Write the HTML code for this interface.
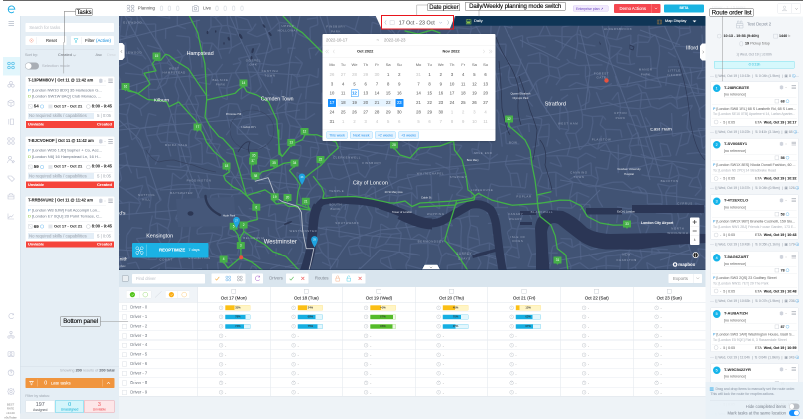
<!DOCTYPE html>
<html><head><meta charset="utf-8">
<style>
*{box-sizing:border-box;margin:0;padding:0}
html,body{width:803px;height:419px;overflow:hidden;background:#fff;font-family:"Liberation Sans",sans-serif;color:#333}
#wrap{position:absolute;left:0;top:0;width:803px;height:419px;overflow:hidden}
#root{position:absolute;left:0;top:0;width:803px;height:419px;overflow:hidden;background:#fff}
@supports (zoom:2){
#wrap{width:1606px;height:838px;transform:scale(0.5);transform-origin:0 0;will-change:transform}
#root{zoom:2}
}
.a{position:absolute}
.t{position:absolute;white-space:nowrap;line-height:1;-webkit-text-stroke:0.06px currentColor}
</style></head><body><div id="wrap"><div id="root">
<!-- top bar -->
<div class="a" style="left:3px;top:0;width:800px;height:1.1px;background:#666"></div>
<!-- sidebar -->
<div class="a" style="left:0;top:1px;width:20.5px;height:418px;background:#fff"></div>
<svg class="a" style="left:6px;top:4px" width="12" height="11" viewBox="6 4 12 11"><path d="M8.3 9.2 H14.8 A3.3 3.4 0 1 0 13.9 11.7" fill="none" stroke="#1eaee6" stroke-width="0.95"/></svg>
<div class="a" style="left:8.6px;top:21.2px;width:5.2px;height:0.6px;background:#c6ccd6"></div>
<div class="a" style="left:8.6px;top:23.2px;width:5.2px;height:0.6px;background:#c6ccd6"></div>
<div class="a" style="left:8.6px;top:25.2px;width:5.2px;height:0.6px;background:#c6ccd6"></div>
<div class="a" style="left:3px;top:57px;width:17.5px;height:18.5px;background:#e2f6fc"></div>
<svg class="a" style="left:0;top:0" width="21" height="419" viewBox="0 0 21 419">
 <g fill="none" stroke-width="0.6">
  <g stroke="#3db8e6"><circle cx="9" cy="63.5" r="1.3"/><circle cx="13" cy="63.5" r="1.3"/><circle cx="9" cy="67.5" r="1.3"/><circle cx="13" cy="67.5" r="1.3"/></g>
  <g stroke="#c4c8d8">
   <circle cx="11" cy="82.8" r="1.4"/><circle cx="9.2" cy="85.8" r="1.4"/><circle cx="12.8" cy="85.8" r="1.4"/>
   <path d="M8 101.5 L11 100 L14 101.5 L14 105 L11 106.5 L8 105 Z M8 101.5 L11 103 L14 101.5 M11 103 V106.5"/>
   <path d="M8.8 119 V124.5 M10.3 119 H13.6 V124.5 H10.3 Z"/>
   <circle cx="9" cy="139" r="1.3"/><circle cx="13" cy="139" r="1.3"/><circle cx="9" cy="143" r="1.3"/><circle cx="13" cy="143" r="1.3"/>
   <circle cx="10" cy="157.8" r="1.5"/><path d="M7.5 163 Q8 160 10 160 Q12 160 12.5 161.5 M12 162 L13.5 160.5 L14.5 161.5 L13 163 Z"/>
   <path d="M8 176 L11.5 176 L14.5 179 L12 181.5 L8 177.5 Z"/>
   <path d="M8 195 H14 V199 H8 Z M8 196.8 H14 M9 195 L10 193.5 H12 L13 195"/>
   <path d="M8 213.5 V219 H14 M8.5 218 L10.3 216 L11.5 217 L13.5 214.5"/>
   <path d="M13.5 314.5 A2.6 2.6 0 1 0 13.6 317.5 M13.5 313.5 V314.8 H12.2"/>
   <circle cx="11" cy="332.5" r="1.2"/><circle cx="9" cy="337" r="1.2"/><circle cx="13" cy="337" r="1.2"/><path d="M11 333.7 V335.5 M9.5 336 L11 335 L12.5 336"/>
   <rect x="8" y="351.5" width="6" height="5" rx="1"/><circle cx="11" cy="353.4" r="1"/><path d="M9 356.5 Q11 354.5 13 356.5"/>
   <circle cx="11" cy="372.7" r="2.9"/><path d="M10 371.8 Q10.2 370.7 11.1 370.7 Q12 370.8 12 371.6 Q12 372.3 11 372.8 V373.5 M11 374.2 V374.6"/>
   <circle cx="11" cy="391.5" r="1.2"/><path d="M11 388.4 L12.2 389.2 L13.7 389 L13.8 390.5 L14.3 391.5 L13.8 392.5 L13.7 394 L12.2 393.8 L11 394.6 L9.8 393.8 L8.3 394 L8.2 392.5 L7.7 391.5 L8.2 390.5 L8.3 389 L9.8 389.2 Z"/>
  </g>
 </g>
</svg>
<div class="t" style="left:0;width:21px;text-align:center;top:402.4px;font-size:2.8px;color:#999;line-height:4.3px">BEST<br>RATE<br>v14.00<br>e9c7bdae</div>
<!-- header -->
<svg class="a" style="left:150px;top:0" width="100" height="16" viewBox="150 0 100 16"><g fill="none" stroke="#dde1e6" stroke-width="0.75"><ellipse cx="161.5" cy="8.35" rx="1.25" ry="2.35"/><ellipse cx="169.4" cy="8.35" rx="1.25" ry="2.35"/><ellipse cx="177.7" cy="8.35" rx="1.25" ry="2.35"/><ellipse cx="217" cy="8.35" rx="1.25" ry="2.35"/><ellipse cx="225.2" cy="8.35" rx="1.25" ry="2.35"/><ellipse cx="233.6" cy="8.35" rx="1.25" ry="2.35"/><ellipse cx="242" cy="8.35" rx="1.25" ry="2.35"/></g></svg>
<svg class="a" style="left:120px;top:0" width="130" height="16" viewBox="120 0 130 16">
 <g fill="none" stroke="#a9afbb" stroke-width="0.6">
  <circle cx="128.5" cy="6.6" r="1.4"/><circle cx="132.6" cy="6.6" r="1.4"/><circle cx="128.5" cy="10.2" r="1.4"/><circle cx="132.6" cy="10.2" r="1.4"/>
  <path d="M192.5 6.5 H194 L194.8 5.3 H196.8 L197.6 6.5 H198.5 V11.2 H192.5 Z"/><circle cx="195.5" cy="8.6" r="1.3"/>
 </g>
</svg>
<div class="t" style="left:137.8px;top:6.1px;font-size:4.4px;color:#666">Planning</div>

<div class="t" style="left:203px;top:6.1px;font-size:4.4px;color:#666">Live</div>

<div class="a" style="left:573px;top:5.4px;width:35.3px;height:6.3px;background:#f1eafc;border:0.5px solid #d9c9f5;border-radius:1px"></div>
<div class="t" style="left:576px;top:6.9px;font-size:3.5px;color:#7a58c8">Enterprise plan &#8599;</div>
<div class="a" style="left:614px;top:4px;width:46.3px;height:9.2px;background:#f5474f;border-radius:1px"></div>
<div class="t" style="left:619.5px;top:6.5px;font-size:4.3px;color:#fff">Demo Actions</div>
<div class="a" style="left:651.5px;top:4px;width:0.4px;height:9.2px;background:#f88"></div>
<svg class="a" style="left:654px;top:7px" width="4" height="3" viewBox="0 0 4 3"><path d="M0.8 0.8 L2 2 L3.2 0.8" stroke="#fff" stroke-width="0.5" fill="none"/></svg>
<div class="a" style="left:664px;top:4.3px;width:40px;height:8px;background:#19b4e2;border-radius:1px"></div>
<div class="t" style="left:664px;width:40px;text-align:center;top:6.6px;font-size:3.4px;color:#fff;font-weight:bold">BETA</div>
<div class="a" style="left:20.2px;top:16px;width:98.8px;height:403px;background:#e5eef5"></div>
<div class="a" style="left:20.2px;top:16px;width:0.8px;height:403px;background:#dae5ee"></div>
<div class="a" style="left:25.5px;top:22.9px;width:88.7px;height:9.1px;background:#fff;border-radius:0.8px"></div>
<div class="t" style="left:29.2px;top:25.5px;font-size:4.3px;color:#c5c9cf">Search for tasks</div>
<div class="a" style="left:25.6px;top:35.9px;width:41.1px;height:9.1px;background:#fff;border-radius:0.8px"></div>
<svg class="a" style="left:29px;top:38px" width="5" height="5" viewBox="0 0 5 5"><circle cx="2.5" cy="2.5" r="1.75" fill="none" stroke="#f4a08e" stroke-width="0.45"/><circle cx="2.5" cy="2.5" r="0.55" fill="#f4a08e"/></svg>
<div class="a" style="left:36.7px;top:37px;width:0.35px;height:7px;background:#e6e9ed"></div>
<div class="t" style="left:46px;top:38.6px;font-size:4.2px;color:#3a3a3a">Reset</div>
<div class="a" style="left:70.8px;top:35.9px;width:43.3px;height:9.1px;background:#fff;border-radius:0.8px"></div>
<svg class="a" style="left:73.3px;top:37.9px" width="5" height="5" viewBox="0 0 5 5"><path d="M0.5 0.7 H4.5 L3 2.6 V4.4 H2 V2.6 Z" fill="none" stroke="#2ec1d9" stroke-width="0.45"/></svg>
<div class="a" style="left:81.6px;top:37px;width:0.35px;height:7px;background:#e6e9ed"></div>
<div class="t" style="left:85px;top:38.6px;font-size:4.4px;color:#3a3a3a">Filter <span style="color:#2a98e0">(Active)</span></div>
<div class="a" style="left:25.7px;top:49.2px;width:88.5px;height:0.4px;background:#d4dce4"></div>
<div class="t" style="left:25px;top:53.1px;font-size:3.8px;color:#a3aab3">Sort by:</div>
<div class="t" style="left:58px;top:53.1px;font-size:3.9px;color:#7a7f86">Created</div>
<svg class="a" style="left:72.6px;top:54.2px" width="4" height="3" viewBox="0 0 4 3"><path d="M0.6 0.7 L2 2.1 L3.4 0.7" stroke="#7a7f86" stroke-width="0.45" fill="none"/></svg>
<div class="t" style="left:95.5px;top:53.1px;font-size:3.9px;color:#8d939b">Asc</div>
<div class="t" style="left:107px;top:53.1px;font-size:3.9px;color:#d2d8de">Desc</div>
<div class="a" style="left:25px;top:62.3px;width:14px;height:7.2px;background:#a9aeb5;border-radius:4px"></div>
<div class="a" style="left:25.6px;top:62.9px;width:6px;height:6px;background:#fff;border-radius:3px"></div>
<div class="t" style="left:42px;top:63.8px;font-size:4.05px;color:#b3b8c0">Selection mode</div>
<div class="a" style="left:25.7px;top:76.3px;width:88.9px;height:51.2px;background:#fff;border-radius:0.8px;box-shadow:0 0 0.5px #cbd5de"></div>
<div class="t" style="left:28px;top:78.6px;font-size:4.1px;color:#2a2a2a;font-weight:bold">T-13PMM8OV | Oct 11 @ 11:42 am</div>
<svg class="a" style="left:98.5px;top:78.0px" width="16" height="6" viewBox="0 0 16 6"><path d="M0.6 1.2 L2.3 0.5 L4 1.2 V4.4 L2.3 5.1 L0.6 4.4 Z" fill="#ccd0da"/><path d="M6 3 H7" stroke="#a0a5ad" stroke-width="0.4"/><path d="M9.8 1.1 H14.3 M9.8 2.9 H14.3 M9.8 4.7 H14.3" stroke="#8e94a2" stroke-width="0.6"/></svg>
<div class="a" style="left:28px;top:85.39999999999999px;width:78px;height:0.35px;background:#eceff2"></div>
<div class="t" style="left:28px;top:88.3px;font-size:4.05px;color:#7f8896"><span style="color:#4aa3e6">P</span> [London NW10 8DX] 35 Harlesden G...</div>
<div class="t" style="left:28px;top:94.6px;font-size:4.05px;color:#7f8896"><span style="color:#8cc63f">D</span> [London SW1W 8AQ] Club Monaco, ...</div>
<div class="a" style="left:28px;top:101.4px;width:84.5px;height:0.35px;background:#eceff2"></div>
<svg class="a" style="left:28px;top:104.1px" width="86" height="6" viewBox="0 0 86 6"><path d="M0.5 0.5 H4.2 V4.4 H0.5 Z M0.5 0.5 L4.2 4.4" fill="none" stroke="#c3c8d0" stroke-width="0.4"/><circle cx="14.1" cy="2.5" r="1.7" fill="none" stroke="#4aa8ea" stroke-width="0.4"/><path d="M20.4 0.6 H24.5 V4.4 H20.4 Z" fill="#e2e5ea"/><circle cx="60.4" cy="2.5" r="1.9" fill="none" stroke="#b0b5bd" stroke-width="0.4"/></svg>
<div class="t" style="left:33.7px;top:104.19999999999999px;font-size:4.5px;color:#333;font-weight:bold">54</div>
<div class="t" style="left:54px;top:104.3px;font-size:4.03px;color:#333;font-weight:bold">Oct 17 - Oct 21</div>
<div class="t" style="left:91.8px;top:104.3px;font-size:4.13px;color:#333;font-weight:bold">8:00 - 9:45</div>
<div class="a" style="left:28px;top:111.5px;width:84.5px;height:0.35px;background:#eceff2"></div>
<div class="a" style="left:28px;top:112.8px;width:65.9px;height:6.1px;background:#e4eef7"></div>
<div class="t" style="left:29px;top:113.69999999999999px;font-size:4.3px;color:#a1a9b3">No required skills / capabilities</div>
<div class="t" style="left:97.1px;top:113.69999999999999px;font-size:4.19px;color:#a7adb5">5 | 0:05</div>
<div class="a" style="left:25.9px;top:121.19999999999999px;width:88.3px;height:6.3px;background:#f5443b"></div>
<div class="t" style="left:28px;top:122.6px;font-size:3.84px;color:#fff;font-weight:bold">Unviable</div>
<div class="t" style="left:97px;top:122.6px;font-size:4.03px;color:#fff;font-weight:bold">Created</div>
<div class="a" style="left:25.7px;top:136.6px;width:88.9px;height:51.2px;background:#fff;border-radius:0.8px;box-shadow:0 0 0.5px #cbd5de"></div>
<div class="t" style="left:28px;top:138.9px;font-size:4.1px;color:#2a2a2a;font-weight:bold">T-BJCVOHOP | Oct 11 @ 11:42 am</div>
<svg class="a" style="left:98.5px;top:138.29999999999998px" width="16" height="6" viewBox="0 0 16 6"><path d="M0.6 1.2 L2.3 0.5 L4 1.2 V4.4 L2.3 5.1 L0.6 4.4 Z" fill="#ccd0da"/><path d="M6 3 H7" stroke="#a0a5ad" stroke-width="0.4"/><path d="M9.8 1.1 H14.3 M9.8 2.9 H14.3 M9.8 4.7 H14.3" stroke="#8e94a2" stroke-width="0.6"/></svg>
<div class="a" style="left:28px;top:145.7px;width:78px;height:0.35px;background:#eceff2"></div>
<div class="t" style="left:28px;top:148.6px;font-size:4.05px;color:#7f8896"><span style="color:#4aa3e6">P</span> [London WD6 1JD] Sopher + Co, Acc...</div>
<div class="t" style="left:28px;top:154.9px;font-size:4.05px;color:#7f8896"><span style="color:#8cc63f">D</span> [London N6] 16 Hampstead Ln, 16 H...</div>
<div class="a" style="left:28px;top:161.7px;width:84.5px;height:0.35px;background:#eceff2"></div>
<svg class="a" style="left:28px;top:164.4px" width="86" height="6" viewBox="0 0 86 6"><path d="M0.5 0.5 H4.2 V4.4 H0.5 Z M0.5 0.5 L4.2 4.4" fill="none" stroke="#c3c8d0" stroke-width="0.4"/><circle cx="14.1" cy="2.5" r="1.7" fill="none" stroke="#4aa8ea" stroke-width="0.4"/><path d="M20.4 0.6 H24.5 V4.4 H20.4 Z" fill="#e2e5ea"/><circle cx="60.4" cy="2.5" r="1.9" fill="none" stroke="#b0b5bd" stroke-width="0.4"/></svg>
<div class="t" style="left:33.7px;top:164.5px;font-size:4.5px;color:#333;font-weight:bold">59</div>
<div class="t" style="left:54px;top:164.6px;font-size:4.03px;color:#333;font-weight:bold">Oct 17 - Oct 21</div>
<div class="t" style="left:91.8px;top:164.6px;font-size:4.13px;color:#333;font-weight:bold">8:00 - 9:45</div>
<div class="a" style="left:28px;top:171.8px;width:84.5px;height:0.35px;background:#eceff2"></div>
<div class="a" style="left:28px;top:173.1px;width:65.9px;height:6.1px;background:#e4eef7"></div>
<div class="t" style="left:29px;top:174.0px;font-size:4.3px;color:#a1a9b3">No required skills / capabilities</div>
<div class="t" style="left:97.1px;top:174.0px;font-size:4.19px;color:#a7adb5">5 | 0:05</div>
<div class="a" style="left:25.9px;top:181.5px;width:88.3px;height:6.3px;background:#f5443b"></div>
<div class="t" style="left:28px;top:182.89999999999998px;font-size:3.84px;color:#fff;font-weight:bold">Unviable</div>
<div class="t" style="left:97px;top:182.89999999999998px;font-size:4.03px;color:#fff;font-weight:bold">Created</div>
<div class="a" style="left:25.7px;top:196.4px;width:88.9px;height:51.2px;background:#fff;border-radius:0.8px;box-shadow:0 0 0.5px #cbd5de"></div>
<div class="t" style="left:28px;top:198.70000000000002px;font-size:4.1px;color:#2a2a2a;font-weight:bold">T-RRB6VUH2 | Oct 11 @ 11:42 am</div>
<svg class="a" style="left:98.5px;top:198.1px" width="16" height="6" viewBox="0 0 16 6"><path d="M0.6 1.2 L2.3 0.5 L4 1.2 V4.4 L2.3 5.1 L0.6 4.4 Z" fill="#ccd0da"/><path d="M6 3 H7" stroke="#a0a5ad" stroke-width="0.4"/><path d="M9.8 1.1 H14.3 M9.8 2.9 H14.3 M9.8 4.7 H14.3" stroke="#8e94a2" stroke-width="0.6"/></svg>
<div class="a" style="left:28px;top:205.5px;width:78px;height:0.35px;background:#eceff2"></div>
<div class="t" style="left:28px;top:208.4px;font-size:4.05px;color:#7f8896"><span style="color:#4aa3e6">P</span> [London W8 6JW] Fait Accompli Lon...</div>
<div class="t" style="left:28px;top:214.70000000000002px;font-size:4.05px;color:#7f8896"><span style="color:#8cc63f">D</span> [London E7 0QU] 20 Point Terrace, C...</div>
<div class="a" style="left:28px;top:221.5px;width:84.5px;height:0.35px;background:#eceff2"></div>
<svg class="a" style="left:28px;top:224.20000000000002px" width="86" height="6" viewBox="0 0 86 6"><path d="M0.5 0.5 H4.2 V4.4 H0.5 Z M0.5 0.5 L4.2 4.4" fill="none" stroke="#c3c8d0" stroke-width="0.4"/><circle cx="14.1" cy="2.5" r="1.7" fill="none" stroke="#4aa8ea" stroke-width="0.4"/><path d="M20.4 0.6 H24.5 V4.4 H20.4 Z" fill="#e2e5ea"/><circle cx="60.4" cy="2.5" r="1.9" fill="none" stroke="#b0b5bd" stroke-width="0.4"/></svg>
<div class="t" style="left:33.7px;top:224.3px;font-size:4.5px;color:#333;font-weight:bold">69</div>
<div class="t" style="left:54px;top:224.4px;font-size:4.03px;color:#333;font-weight:bold">Oct 17 - Oct 21</div>
<div class="t" style="left:91.8px;top:224.4px;font-size:4.13px;color:#333;font-weight:bold">8:00 - 9:45</div>
<div class="a" style="left:28px;top:231.60000000000002px;width:84.5px;height:0.35px;background:#eceff2"></div>
<div class="a" style="left:28px;top:232.9px;width:65.9px;height:6.1px;background:#e4eef7"></div>
<div class="t" style="left:29px;top:233.8px;font-size:4.3px;color:#a1a9b3">No required skills / capabilities</div>
<div class="t" style="left:97.1px;top:233.8px;font-size:4.19px;color:#a7adb5">5 | 0:05</div>
<div class="a" style="left:25.9px;top:241.3px;width:88.3px;height:6.3px;background:#f5443b"></div>
<div class="t" style="left:28px;top:242.7px;font-size:3.84px;color:#fff;font-weight:bold">Unviable</div>
<div class="t" style="left:97px;top:242.7px;font-size:4.03px;color:#fff;font-weight:bold">Created</div>
<div class="a" style="left:20.2px;top:365.8px;width:98.8px;height:0.4px;background:#d5dee6"></div>
<div class="t" style="left:54px;width:60.6px;text-align:right;top:368.6px;font-size:3.78px;color:#b3b9c1">Showing <b style="color:#6a7079">200</b> results of <b style="color:#6a7079">200 total</b></div>
<div class="a" style="left:25.3px;top:378px;width:89.3px;height:9.9px;background:#f0953e;border-radius:0.8px"></div>
<svg class="a" style="left:28.8px;top:380.5px" width="5" height="5" viewBox="0 0 5 5"><path d="M0.5 0.7 H4.5 L3 2.6 V4.4 H2 V2.6 Z" fill="none" stroke="#fff" stroke-width="0.45"/></svg>
<div class="a" style="left:37.3px;top:379.6px;width:0.35px;height:6.8px;background:#f6c28e"></div>
<div class="t" style="left:44.3px;top:380.3px;font-size:5.2px;color:#fff">0</div>
<div class="t" style="left:50.7px;top:381px;font-size:4.39px;color:#fff">Late tasks</div>
<div class="a" style="left:102.3px;top:379.6px;width:0.35px;height:6.8px;background:#f6c28e"></div>
<svg class="a" style="left:106px;top:381px" width="5" height="4" viewBox="0 0 5 4"><path d="M1 2.8 L2.5 1.3 L4 2.8" stroke="#fff" stroke-width="0.55" fill="none"/></svg>
<div class="t" style="left:25.2px;top:394.2px;font-size:3.66px;color:#a8b0ba">Filter by status:</div>
<div class="a" style="left:25.5px;top:400.4px;width:29.5px;height:12.2px;background:#fff;border:0.4px solid #dfe3e8"></div>
<div class="a" style="left:55px;top:400.4px;width:29.2px;height:12.2px;background:#d4f5fb;border:0.45px solid #5fd2ea"></div>
<div class="a" style="left:84.2px;top:400.4px;width:30.4px;height:12.2px;background:#fde6e8;border:0.45px solid #f4a0a6"></div>
<div class="t" style="left:25.5px;width:29.5px;text-align:center;top:401.6px;font-size:5.4px;color:#6b6f76">197</div>
<div class="t" style="left:25.5px;width:29.5px;text-align:center;top:408.2px;font-size:3.5px;color:#6b6f76">Assigned</div>
<div class="t" style="left:55px;width:29.2px;text-align:center;top:401.6px;font-size:5.4px;color:#27b6d8">0</div>
<div class="t" style="left:55px;width:29.2px;text-align:center;top:408.2px;font-size:3.3px;color:#27b6d8">Unassigned</div>
<div class="t" style="left:84.2px;width:30.4px;text-align:center;top:401.6px;font-size:5.4px;color:#ef5d62">3</div>
<div class="t" style="left:84.2px;width:30.4px;text-align:center;top:408.2px;font-size:3.4px;color:#ef5d62">Unviable</div>
<div class="a" style="left:20.2px;top:413.6px;width:98.8px;height:6px;background:#e8eef3"></div><div class="a" style="left:119px;top:16.0px;width:586.5px;height:253.9px;overflow:hidden;background:#415374">
<svg class="a" style="left:0;top:0" width="586.5" height="253.9" viewBox="119 16.0 586.5 253.9">
<g fill="none" stroke="#506286" stroke-width="1.3" opacity="0.85">
<path d="M110.2 12.6L122.0 14.5M109.3 24.9L120.6 26.8M105.3 45.5L121.7 49.6M105.6 52.7L108.4 68.6M109.6 95.2L118.1 97.3M111.9 114.3L116.3 112.9M111.9 114.3L106.2 122.9M107.5 138.5L116.0 134.0M107.5 138.5L106.4 146.7M106.4 146.7L118.1 149.0M106.4 146.7L110.1 155.0M109.4 162.5L105.5 173.6M105.5 173.6L110.4 185.4M110.4 185.4L107.5 196.7M107.5 196.7L117.9 199.1M108.6 204.4L122.7 203.2M108.6 204.4L111.4 217.6M111.4 217.6L116.4 213.9M111.4 217.6L107.0 226.6M109.2 239.0L119.7 234.1M110.8 244.3L115.0 245.4M110.8 244.3L112.8 252.9M112.8 252.9L108.3 268.1M108.3 268.1L122.6 267.5M106.2 275.9L119.1 276.9M105.3 287.3L120.4 282.4M122.0 14.5L132.0 18.4M122.0 14.5L120.6 26.8M120.6 26.8L119.6 35.6M119.6 35.6L125.8 37.1M119.6 35.6L121.7 49.6M121.7 49.6L125.5 42.5M115.5 67.6L127.7 62.4M115.5 67.6L120.2 79.9M120.2 79.9L121.6 84.3M115.2 105.7L129.9 103.2M116.3 112.9L127.0 114.8M116.3 112.9L115.5 128.1M115.5 128.1L127.9 123.0M115.5 128.1L116.0 134.0M118.1 149.0L128.7 145.9M118.1 149.0L115.6 155.6M115.6 155.6L125.7 152.8M115.6 155.6L119.4 169.1M119.4 169.1L127.7 164.1M119.4 169.1L121.6 178.9M121.6 178.9L117.2 185.3M117.2 185.3L125.2 189.6M117.2 185.3L117.9 199.1M117.9 199.1L122.7 203.2M122.7 203.2L129.3 202.2M115.0 245.4L118.0 256.5M118.0 256.5L129.3 258.2M118.0 256.5L122.6 267.5M119.1 276.9L120.4 282.4M120.4 282.4L131.8 288.4M132.2 8.2L141.5 7.9M132.0 18.4L128.1 25.2M128.1 25.2L137.8 22.2M128.1 25.2L125.8 37.1M125.8 37.1L135.2 34.2M125.5 42.5L126.7 53.3M126.7 53.3L142.7 55.6M126.7 53.3L127.7 62.4M127.7 62.4L142.5 69.9M125.0 73.2L142.6 74.9M125.2 99.0L136.6 93.6M129.9 103.2L140.0 109.2M129.9 103.2L127.0 114.8M127.0 114.8L127.9 123.0M127.9 123.0L140.2 128.4M127.9 123.0L131.8 139.9M131.8 139.9L135.7 137.3M125.7 152.8L127.7 164.1M127.7 164.1L131.6 173.3M125.2 189.6L142.8 185.2M125.2 189.6L129.2 193.2M129.2 193.2L138.2 199.6M129.3 202.2L140.8 203.4M129.3 202.2L129.2 219.8M131.9 227.6L142.2 228.5M131.9 227.6L127.1 234.9M127.1 234.9L126.3 248.2M126.3 248.2L142.8 247.3M126.3 248.2L129.3 258.2M127.6 263.8L136.0 262.1M131.5 279.9L142.8 277.2M131.5 279.9L131.8 288.4M141.5 7.9L148.5 9.0M141.5 7.9L136.8 16.1M136.8 16.1L137.8 22.2M137.8 22.2L147.0 24.3M137.8 22.2L135.2 34.2M137.1 47.5L142.7 55.6M142.7 55.6L146.0 59.3M142.5 69.9L147.8 65.7M142.5 69.9L142.6 74.9M142.6 74.9L149.7 79.2M136.8 83.8L136.6 93.6M140.0 109.2L149.2 102.1M140.0 109.2L141.7 115.8M140.2 128.4L145.0 128.4M140.2 128.4L135.7 137.3M135.7 137.3L142.3 148.3M142.3 148.3L150.8 146.5M136.4 168.3L137.7 178.4M137.7 178.4L145.8 176.5M142.8 185.2L138.2 199.6M138.2 199.6L151.2 196.1M138.2 199.6L140.8 203.4M140.8 203.4L136.0 213.2M136.2 238.6L149.1 237.5M136.2 238.6L142.8 247.3M142.8 247.3L148.6 246.3M137.8 256.4L148.8 259.5M136.0 262.1L142.8 277.2M142.8 277.2L139.2 289.5M139.2 289.5L149.5 289.5M148.5 9.0L161.7 3.1M147.0 24.3L155.6 23.9M147.1 45.4L161.3 49.2M147.8 65.7L160.3 63.1M147.8 65.7L149.7 79.2M149.7 79.2L162.1 79.7M149.7 79.2L148.4 89.3M148.4 89.3L156.8 89.6M148.4 89.3L149.0 96.3M149.0 96.3L149.2 102.1M148.5 113.5L156.3 115.5M148.5 113.5L145.0 128.4M145.0 128.4L146.4 135.8M146.4 135.8L156.6 134.5M146.4 135.8L150.8 146.5M150.8 146.5L147.6 156.1M147.6 156.1L159.4 155.5M147.6 156.1L149.4 168.3M145.8 176.5L147.0 184.2M147.0 184.2L155.5 189.9M147.0 184.2L151.2 196.1M151.2 196.1L149.5 208.1M152.3 215.5L149.9 226.0M149.9 226.0L157.2 223.0M149.9 226.0L149.1 237.5M148.6 246.3L161.6 244.1M148.6 246.3L148.8 259.5M148.8 259.5L156.2 259.4M156.0 15.5L170.1 18.4M155.6 23.9L155.6 37.4M155.6 37.4L161.3 49.2M161.3 49.2L156.2 57.7M156.2 57.7L160.3 63.1M160.3 63.1L167.1 63.0M160.3 63.1L162.1 79.7M162.1 79.7L169.2 73.9M162.1 79.7L156.8 89.6M156.8 89.6L165.9 83.3M159.1 124.7L169.0 123.4M159.1 124.7L156.6 134.5M156.6 134.5L167.8 132.1M156.6 134.5L160.8 142.2M160.8 142.2L167.0 142.1M159.4 155.5L155.1 164.7M155.5 189.9L171.6 185.5M155.5 189.9L161.3 199.8M161.3 199.8L155.8 204.1M155.8 204.1L155.3 218.2M155.3 218.2L170.5 219.9M157.2 223.0L167.7 228.7M157.2 223.0L158.4 239.3M158.4 239.3L161.6 244.1M161.6 244.1L156.2 259.4M159.6 267.6L155.7 272.5M155.7 272.5L167.0 273.3M155.7 272.5L160.5 285.4M165.6 9.5L182.0 7.4M165.6 9.5L170.1 18.4M165.7 28.8L177.3 25.7M165.7 28.8L165.5 38.9M169.4 59.4L182.8 56.4M169.4 59.4L167.1 63.0M167.1 63.0L177.0 69.7M169.2 73.9L177.5 74.9M169.2 73.9L165.9 83.3M171.1 114.3L175.0 114.1M171.1 114.3L169.0 123.4M169.0 123.4L175.7 125.2M169.0 123.4L167.8 132.1M167.8 132.1L175.3 132.2M167.8 132.1L167.0 142.1M167.0 142.1L177.4 143.9M167.0 142.1L170.9 156.4M166.5 165.8L181.0 167.3M172.5 172.9L180.7 179.0M172.5 172.9L171.6 185.5M171.6 185.5L178.1 184.6M171.6 185.5L169.0 198.7M169.0 198.7L168.1 206.1M168.1 206.1L170.5 219.9M170.5 219.9L167.7 228.7M167.7 228.7L170.7 237.1M170.7 237.1L168.2 244.8M165.4 253.0L165.6 267.9M165.6 267.9L181.4 268.6M165.6 267.9L167.0 273.3M167.0 273.3L165.7 288.7M177.3 13.9L186.1 14.9M177.3 13.9L177.3 25.7M177.3 25.7L185.8 28.7M176.3 35.6L189.5 37.0M177.1 49.7L182.8 56.4M182.8 56.4L188.9 52.0M182.8 56.4L177.0 69.7M177.0 69.7L177.5 74.9M177.5 74.9L175.0 85.1M175.0 85.1L178.8 96.0M178.8 96.0L176.6 106.0M176.6 106.0L185.6 104.1M176.6 106.0L175.0 114.1M175.0 114.1L190.8 113.6M175.0 114.1L175.7 125.2M175.7 125.2L175.3 132.2M175.3 132.2L189.0 135.1M177.4 143.9L188.8 147.5M177.4 143.9L179.7 156.2M179.7 156.2L191.1 156.9M179.7 156.2L181.0 167.3M181.0 167.3L190.1 162.6M180.7 179.0L186.2 174.0M178.1 184.6L190.9 184.4M182.9 193.2L180.8 207.1M180.8 207.1L185.5 204.2M180.8 207.1L175.4 218.7M175.4 218.7L190.4 217.5M175.4 218.7L182.1 227.0M182.1 227.0L180.9 238.5M180.9 238.5L189.1 235.7M180.9 238.5L176.1 246.2M176.1 246.2L188.7 242.9M176.1 246.2L179.0 258.7M179.0 258.7L192.1 253.6M179.0 258.7L181.4 268.6M181.4 268.6L192.8 269.5M181.4 268.6L179.7 279.1M179.7 279.1L185.1 275.7M186.8 2.2L198.6 4.1M186.8 2.2L186.1 14.9M189.5 37.0L190.0 47.4M190.0 47.4L188.9 52.0M188.9 52.0L201.6 56.1M188.9 52.0L191.4 68.0M191.4 68.0L189.0 76.3M189.0 76.3L196.9 79.2M189.0 76.3L190.3 82.5M190.3 82.5L190.9 94.0M190.9 94.0L185.6 104.1M185.6 104.1L198.6 104.4M185.6 104.1L190.8 113.6M190.8 113.6L196.1 114.8M190.9 129.8L197.5 128.7M190.9 129.8L189.0 135.1M189.0 135.1L188.8 147.5M188.8 147.5L201.7 143.0M188.8 147.5L191.1 156.9M191.1 156.9L190.1 162.6M190.1 162.6L202.2 164.3M190.1 162.6L186.2 174.0M186.2 174.0L190.9 184.4M190.9 184.4L203.0 186.7M190.9 184.4L189.5 192.1M185.5 204.2L197.2 202.4M190.4 224.3L189.1 235.7M189.1 235.7L188.7 242.9M188.7 242.9L199.1 243.5M192.1 253.6L192.8 269.5M192.8 269.5L202.1 268.5M192.8 269.5L185.1 275.7M185.1 275.7L200.0 279.3M185.1 275.7L191.6 289.7M191.6 289.7L202.5 286.4M196.7 19.6L196.7 26.7M196.7 26.7L196.1 36.2M196.1 36.2L202.6 43.1M202.6 43.1L212.4 43.0M202.6 43.1L201.6 56.1M201.6 56.1L202.1 67.6M196.9 79.2L212.8 74.1M198.9 82.2L210.2 84.4M195.0 95.9L209.5 95.2M195.0 95.9L198.6 104.4M198.6 104.4L196.1 114.8M196.1 114.8L206.7 119.2M196.1 114.8L197.5 128.7M197.5 128.7L195.0 138.0M195.0 138.0L212.3 140.0M195.0 138.0L201.7 143.0M201.7 143.0L202.4 157.7M202.4 157.7L202.2 164.3M202.2 164.3L207.7 162.7M198.0 175.1L203.0 186.7M203.0 186.7L209.6 189.1M203.0 186.7L197.9 195.4M197.9 195.4L197.2 202.4M197.2 202.4L208.3 206.2M197.2 202.4L195.8 218.7M197.3 229.5L205.5 224.2M197.3 229.5L197.0 234.1M197.0 234.1L212.7 233.0M199.1 243.5L209.0 247.0M199.1 243.5L198.0 259.6M200.0 279.3L208.2 275.6M202.5 286.4L212.6 288.8M210.8 2.4L222.0 2.2M210.9 15.6L215.3 17.7M210.9 15.6L211.0 27.2M211.0 27.2L222.2 25.8M211.0 27.2L207.3 32.4M212.4 43.0L218.1 49.4M212.4 43.0L208.8 54.7M207.4 67.9L212.8 74.1M212.8 74.1L215.9 73.2M212.8 74.1L210.2 84.4M206.3 103.3L206.7 119.2M206.7 119.2L218.7 116.4M209.0 123.8L212.3 140.0M212.3 140.0L208.6 143.1M208.6 143.1L220.2 144.4M208.6 143.1L206.5 152.7M206.5 152.7L216.0 154.0M207.7 162.7L220.1 167.6M206.9 174.1L209.6 189.1M211.0 195.3L218.1 193.8M211.0 195.3L208.3 206.2M208.0 214.7L205.5 224.2M212.7 233.0L222.1 235.8M212.7 233.0L209.0 247.0M209.0 247.0L211.9 253.7M211.9 253.7L222.7 257.6M207.2 264.0L208.2 275.6M208.2 275.6L212.6 288.8M222.0 2.2L215.3 17.7M215.3 17.7L226.8 12.3M215.3 17.7L222.2 25.8M222.2 25.8L227.7 25.4M222.2 25.8L219.7 32.0M219.7 32.0L230.5 33.6M219.7 32.0L218.1 49.4M218.1 49.4L231.4 47.9M218.1 49.4L221.6 58.8M222.8 64.0L215.9 73.2M215.9 73.2L219.2 87.5M219.2 87.5L226.8 88.1M219.2 87.5L222.5 97.8M222.5 97.8L227.4 99.6M220.2 108.1L229.0 103.5M220.2 108.1L218.7 116.4M220.2 144.4L216.0 154.0M216.0 154.0L220.1 167.6M220.1 167.6L225.5 165.1M218.1 193.8L232.5 194.6M218.1 193.8L219.8 202.1M219.8 202.1L226.5 209.5M217.4 215.7L231.0 212.3M217.4 215.7L222.7 227.2M222.7 227.2L230.3 225.0M222.7 227.2L222.1 235.8M222.1 235.8L216.9 244.0M216.9 244.0L226.4 242.0M216.9 244.0L222.7 257.6M217.5 262.2L232.6 263.0M217.5 262.2L219.0 277.4M218.4 284.1L227.9 288.6M230.3 9.4L241.6 5.5M230.3 9.4L226.8 12.3M226.8 12.3L235.4 15.8M226.8 12.3L227.7 25.4M227.7 25.4L238.0 29.4M227.7 25.4L230.5 33.6M230.5 33.6L236.5 34.9M230.5 33.6L231.4 47.9M231.4 47.9L242.2 42.2M231.4 47.9L229.0 53.6M232.8 64.5L241.1 62.3M231.6 73.8L226.8 88.1M226.8 88.1L242.4 84.1M226.8 88.1L227.4 99.6M229.0 103.5L237.7 104.2M229.0 103.5L226.8 115.3M226.8 115.3L230.3 129.6M230.3 129.6L226.2 135.1M226.7 149.8L235.0 148.0M226.1 152.4L242.3 157.1M232.2 179.1L236.9 175.8M232.2 179.1L230.9 190.0M232.5 194.6L238.1 194.0M232.5 194.6L226.5 209.5M226.5 209.5L231.0 212.3M231.0 212.3L230.3 225.0M230.3 225.0L241.4 227.9M230.3 225.0L228.0 234.7M228.0 234.7L241.6 238.2M226.4 242.0L239.9 244.6M227.2 254.8L237.6 254.9M227.2 254.8L232.6 263.0M227.9 288.6L237.0 282.5M241.6 5.5L245.3 6.4M235.4 15.8L247.6 19.8M235.4 15.8L238.0 29.4M238.0 29.4L252.1 29.9M238.3 58.5L250.7 55.6M238.3 58.5L241.1 62.3M241.1 62.3L235.3 72.5M235.3 72.5L242.4 84.1M242.4 84.1L251.0 88.8M242.4 84.1L241.0 99.2M241.0 99.2L250.3 93.0M237.7 104.2L242.7 116.9M242.7 116.9L249.5 115.0M242.7 116.9L237.1 127.7M237.1 127.7L250.9 123.6M237.1 127.7L237.5 134.2M237.5 134.2L247.0 134.0M235.0 148.0L246.2 149.1M242.3 157.1L249.6 154.6M242.3 157.1L242.5 162.2M242.5 162.2L248.2 169.9M242.5 162.2L236.9 175.8M236.9 175.8L249.1 173.9M242.7 189.6L251.5 187.2M242.7 189.6L238.1 194.0M238.1 194.0L252.9 192.8M238.4 205.9L242.4 213.5M242.4 213.5L251.7 219.3M241.6 238.2L246.0 233.5M241.6 238.2L239.9 244.6M239.9 244.6L237.6 254.9M237.6 254.9L252.4 255.0M241.3 262.6L236.6 278.0M236.6 278.0L247.1 278.2M237.0 282.5L252.6 282.8M245.3 6.4L259.8 7.0M247.6 19.8L252.1 29.9M252.1 29.9L256.1 23.6M252.1 29.9L247.1 32.7M247.1 32.7L257.0 36.8M245.8 46.0L260.2 43.6M245.8 46.0L250.7 55.6M250.7 55.6L246.9 65.3M246.9 65.3L260.4 63.5M246.9 65.3L250.0 77.4M250.0 77.4L257.5 73.6M250.0 77.4L251.0 88.8M251.0 88.8L250.3 93.0M250.3 93.0L255.5 92.8M251.7 104.4L258.2 106.4M251.7 104.4L249.5 115.0M249.5 115.0L260.1 112.7M249.5 115.0L250.9 123.6M250.9 123.6L247.0 134.0M247.0 134.0L258.3 134.3M249.6 154.6L257.5 156.5M248.2 169.9L249.1 173.9M249.1 173.9L261.9 180.0M251.5 187.2L252.9 192.8M252.9 192.8L260.8 193.6M248.8 208.6L255.0 209.2M251.7 219.3L258.4 218.6M251.7 219.3L245.3 224.3M245.3 224.3L258.2 229.1M245.3 224.3L246.0 233.5M246.0 233.5L252.8 246.7M252.8 246.7L252.4 255.0M252.4 255.0L260.1 259.3M251.9 265.6L255.7 267.0M251.9 265.6L247.1 278.2M247.1 278.2L258.0 276.0M259.8 7.0L256.7 14.9M257.0 36.8L266.6 33.0M260.2 43.6L255.1 54.6M255.1 54.6L268.9 52.4M255.1 54.6L260.4 63.5M260.4 63.5L272.4 65.1M260.4 63.5L257.5 73.6M257.5 73.6L272.2 77.0M257.5 73.6L261.4 86.4M261.4 86.4L255.5 92.8M258.2 106.4L260.1 112.7M257.5 149.6L266.0 144.0M257.5 156.5L270.8 159.2M257.9 165.3L265.3 166.5M257.9 165.3L261.9 180.0M261.9 180.0L271.1 172.3M257.9 183.6L271.7 182.9M255.0 209.2L270.0 204.4M258.2 229.1L258.7 233.3M258.7 233.3L255.1 246.4M255.1 246.4L265.2 247.0M255.1 246.4L260.1 259.3M255.7 267.0L258.0 276.0M258.0 276.0L268.7 273.4M258.0 276.0L256.2 284.3M256.2 284.3L268.8 282.9M269.2 9.4L276.0 5.4M269.2 9.4L265.9 15.9M265.9 15.9L271.4 29.7M271.4 29.7L279.1 22.3M271.4 29.7L266.6 33.0M266.6 33.0L272.5 49.8M272.5 49.8L280.9 48.2M272.5 49.8L268.9 52.4M272.4 65.1L279.0 65.0M272.2 77.0L271.6 83.3M271.3 93.8L280.9 98.5M268.2 108.8L271.6 113.5M266.7 125.2L282.3 123.3M266.7 125.2L269.1 135.1M269.1 135.1L281.3 139.4M266.0 144.0L270.8 159.2M270.8 159.2L281.0 153.3M270.8 159.2L265.3 166.5M271.1 172.3L281.5 173.1M271.7 182.9L279.0 189.4M269.8 196.4L276.7 194.1M270.0 204.4L279.0 204.6M270.0 204.4L268.4 216.7M268.4 216.7L275.3 213.5M268.4 227.3L268.6 235.5M268.6 235.5L280.4 239.2M265.2 247.0L268.9 253.9M271.1 268.2L280.1 264.9M271.1 268.2L268.7 273.4M268.8 282.9L279.6 289.1M276.0 5.4L285.8 9.9M276.0 5.4L275.7 15.5M275.7 15.5L279.1 22.3M279.1 22.3L291.4 24.1M279.1 22.3L280.1 32.7M280.1 32.7L280.9 48.2M279.0 65.0L290.9 62.4M281.9 90.0L280.9 98.5M280.9 98.5L276.5 109.9M276.5 109.9L287.5 102.0M276.5 109.9L278.9 119.7M282.3 123.3L281.3 139.4M275.5 144.8L286.1 143.8M281.0 153.3L282.2 164.2M282.2 164.2L281.5 173.1M281.5 173.1L285.9 174.9M281.5 173.1L279.0 189.4M279.0 189.4L286.8 186.7M279.0 189.4L276.7 194.1M276.7 194.1L289.7 193.6M276.7 194.1L279.0 204.6M279.0 204.6L290.0 205.8M275.3 213.5L276.3 229.5M276.3 229.5L286.9 223.2M276.3 229.5L280.4 239.2M280.4 239.2L285.8 237.1M276.3 248.3L275.9 256.2M282.0 276.4L279.6 289.1M285.8 9.9L290.0 15.2M290.0 15.2L291.4 24.1M291.4 24.1L295.4 26.3M291.4 24.1L292.9 36.6M287.9 48.1L295.5 48.2M287.9 48.1L288.5 53.4M290.9 62.4L302.5 63.1M291.6 74.0L296.6 76.9M291.6 74.0L290.1 89.9M290.1 89.9L299.1 87.1M290.1 89.9L289.7 97.3M289.7 97.3L287.5 102.0M287.5 102.0L297.5 104.4M287.5 102.0L285.3 113.2M285.3 113.2L295.4 119.1M285.3 113.2L289.9 125.5M289.9 125.5L301.3 127.7M289.9 125.5L289.1 139.2M289.1 139.2L295.1 138.8M289.1 139.2L286.1 143.8M286.1 143.8L301.0 145.7M290.2 152.2L300.9 155.6M285.0 164.8L296.8 162.8M285.0 164.8L285.9 174.9M285.9 174.9L286.8 186.7M286.8 186.7L297.7 188.0M286.8 186.7L289.7 193.6M290.0 205.8L300.7 204.1M290.0 205.8L286.1 219.5M286.1 219.5L299.4 215.5M286.1 219.5L286.9 223.2M286.9 223.2L285.8 237.1M285.8 237.1L297.1 237.1M292.0 248.3L288.2 254.1M285.1 267.2L297.1 263.9M289.5 274.8L290.2 285.6M290.2 285.6L301.0 284.6M302.5 7.9L312.0 4.6M295.4 26.3L298.2 33.9M298.2 33.9L310.3 39.8M295.1 56.4L302.5 63.1M302.5 63.1L296.6 76.9M296.6 76.9L309.6 74.5M296.6 76.9L299.1 87.1M299.1 87.1L306.7 87.0M301.5 93.4L297.5 104.4M297.5 104.4L306.2 102.2M297.5 104.4L295.4 119.1M295.4 119.1L305.9 119.4M295.4 119.1L301.3 127.7M301.3 127.7L295.1 138.8M295.1 138.8L305.2 132.3M301.0 145.7L300.9 155.6M300.9 155.6L310.6 157.9M300.9 155.6L296.8 162.8M296.9 172.3L307.9 178.5M296.9 172.3L297.7 188.0M297.7 188.0L311.6 189.1M297.7 188.0L300.6 198.8M300.6 198.8L300.7 204.1M300.7 204.1L312.3 209.6M300.7 204.1L299.4 215.5M299.4 215.5L301.3 226.2M301.3 226.2L297.1 237.1M297.1 237.1L311.8 238.5M297.1 237.1L302.7 243.7M302.7 243.7L302.0 252.1M302.0 252.1L310.1 254.3M302.0 252.1L297.1 263.9M297.1 263.9L305.8 262.8M306.9 19.3L317.3 17.7M310.0 27.5L317.9 24.6M310.0 27.5L310.3 39.8M308.8 48.7L321.8 46.9M308.8 48.7L310.6 58.9M309.6 74.5L317.8 77.6M309.6 74.5L306.7 87.0M306.7 87.0L319.3 83.7M306.7 87.0L305.6 99.3M306.2 102.2L321.6 103.4M306.2 102.2L305.9 119.4M305.9 119.4L315.0 113.6M305.2 132.3L315.0 135.9M310.5 147.1L318.9 148.4M310.5 147.1L310.6 157.9M310.6 157.9L316.5 156.0M310.6 157.9L305.5 166.7M307.9 178.5L311.6 189.1M311.6 189.1L317.3 183.7M311.6 189.1L305.5 198.9M305.5 198.9L320.6 196.0M312.3 209.6L315.9 207.1M312.3 209.6L305.9 213.6M305.9 213.6L305.9 222.3M305.9 222.3L320.6 228.3M311.8 238.5L310.1 248.6M310.1 254.3L322.1 252.7M310.1 254.3L305.8 262.8M307.6 285.4L322.2 286.0M315.2 4.1L328.0 9.1M315.2 4.1L317.3 17.7M317.3 17.7L317.9 24.6M322.7 36.0L331.0 37.2M322.7 36.0L321.8 46.9M321.8 46.9L315.2 55.3M318.5 68.2L317.8 77.6M321.9 92.7L326.0 95.7M321.9 92.7L321.6 103.4M321.6 103.4L332.1 103.9M315.0 135.9L318.9 148.4M318.9 148.4L316.5 156.0M316.5 156.0L317.8 168.7M317.8 168.7L317.1 179.6M317.1 179.6L332.8 177.8M317.3 183.7L325.8 189.7M320.6 196.0L315.9 207.1M320.6 228.3L326.6 227.1M320.0 234.8L325.9 233.7M318.2 245.2L328.1 242.3M318.2 245.2L322.1 252.7M322.1 252.7L328.2 258.3M322.1 262.2L330.5 266.0M316.6 274.1L330.1 275.7M328.0 9.1L338.2 7.9M328.0 9.1L326.9 15.7M326.9 15.7L329.3 28.0M329.3 28.0L331.0 37.2M331.0 37.2L338.4 33.8M326.2 58.7L341.2 57.6M326.4 75.5L340.1 75.6M331.2 86.6L337.5 87.0M326.0 95.7L335.8 95.4M326.0 95.7L332.1 103.9M332.1 103.9L326.5 114.4M326.5 114.4L330.6 128.7M330.6 128.7L326.2 133.2M326.2 133.2L327.0 144.6M327.0 144.6L329.2 153.3M329.2 153.3L336.5 157.2M327.6 163.5L341.2 165.1M327.6 163.5L332.8 177.8M332.8 177.8L338.9 179.8M325.8 189.7L325.8 195.1M325.8 195.1L336.3 198.3M325.8 195.1L332.9 208.4M330.9 215.5L335.8 216.6M326.6 227.1L339.3 227.7M326.6 227.1L325.9 233.7M325.9 233.7L328.1 242.3M328.1 242.3L341.6 246.2M328.1 242.3L328.2 258.3M328.2 258.3L338.3 259.6M328.2 258.3L330.5 266.0M330.5 266.0L330.1 275.7M330.1 275.7L326.1 286.8M338.2 7.9L347.8 2.5M338.4 33.8L348.4 37.6M340.8 49.0L347.8 44.1M340.8 49.0L341.2 57.6M340.1 75.6L346.8 78.4M340.1 75.6L337.5 87.0M335.8 95.4L341.3 107.7M340.0 114.0L348.8 116.5M340.0 114.0L338.4 125.6M338.4 125.6L346.8 129.7M338.4 125.6L340.0 135.3M340.0 135.3L347.8 137.1M340.0 135.3L340.4 149.4M340.4 149.4L351.5 148.5M341.2 165.1L349.4 163.0M338.9 179.8L351.7 174.8M335.3 186.3L336.3 198.3M342.5 206.2L348.4 203.5M342.5 206.2L335.8 216.6M335.8 216.6L345.0 217.8M335.8 216.6L339.3 227.7M339.3 227.7L347.2 224.0M339.3 227.7L339.1 237.1M339.1 237.1L347.4 235.8M338.3 259.6L336.7 267.5M338.1 278.1L345.5 278.6M347.8 2.5L356.1 8.7M347.2 15.2L360.1 12.1M345.1 25.3L355.1 29.6M348.4 37.6L360.2 34.0M348.4 37.6L347.8 44.1M347.8 44.1L346.8 57.9M346.8 57.9L356.9 58.2M346.8 57.9L352.5 66.2M346.0 98.2L351.5 107.1M351.5 107.1L360.3 109.2M351.5 107.1L348.8 116.5M348.8 116.5L346.8 129.7M346.8 129.7L347.8 137.1M347.8 137.1L359.2 137.9M348.7 154.4L359.4 154.1M348.7 154.4L349.4 163.0M349.4 163.0L356.9 163.1M351.7 174.8L358.9 172.5M351.8 184.1L358.7 183.2M348.0 194.0L358.9 196.0M348.0 194.0L348.4 203.5M348.4 203.5L345.0 217.8M345.0 217.8L347.2 224.0M347.4 235.8L360.3 238.7M348.4 247.1L358.0 245.4M348.4 247.1L350.3 254.9M350.3 254.9L362.7 252.6M356.1 8.7L367.6 9.9M360.1 12.1L355.1 29.6M355.1 29.6L360.2 34.0M360.2 34.0L370.7 37.0M360.2 34.0L355.8 43.1M355.8 43.1L367.7 48.9M356.9 58.2L357.8 63.2M357.8 63.2L369.2 68.2M362.2 78.3L356.3 89.1M356.3 89.1L368.4 86.4M356.3 89.1L359.9 98.3M359.9 98.3L371.6 94.3M359.9 98.3L360.3 109.2M360.3 109.2L371.6 105.2M361.3 118.7L369.0 114.2M356.6 127.5L369.1 129.8M356.6 127.5L359.2 137.9M359.2 137.9L370.2 138.3M359.2 137.9L358.5 149.1M358.5 149.1L367.6 144.5M359.4 154.1L367.4 156.7M356.9 163.1L358.9 172.5M358.9 172.5L365.3 177.8M358.7 183.2L358.9 196.0M358.9 196.0L365.4 194.4M358.9 196.0L359.3 208.9M359.3 208.9L365.0 203.5M359.3 208.9L355.1 218.7M355.1 218.7L358.7 226.5M358.7 226.5L370.3 228.3M358.7 226.5L360.3 238.7M360.3 238.7L358.0 245.4M358.0 245.4L369.9 247.0M358.0 245.4L362.7 252.6M362.7 252.6L370.6 256.8M360.1 267.1L355.2 276.9M355.2 276.9L370.3 275.7M355.2 276.9L360.5 289.5M360.5 289.5L371.1 282.8M369.1 15.9L381.2 19.3M372.2 22.3L380.2 25.0M372.2 22.3L370.7 37.0M370.7 37.0L381.6 38.3M370.7 37.0L367.7 48.9M367.9 55.8L377.4 55.4M367.9 55.8L369.2 68.2M369.2 68.2L366.7 75.5M366.7 75.5L368.4 86.4M368.4 86.4L371.6 94.3M371.6 94.3L375.3 93.0M371.6 94.3L371.6 105.2M371.6 105.2L381.5 106.6M371.6 105.2L369.0 114.2M369.1 129.8L375.1 125.1M369.1 129.8L370.2 138.3M370.2 138.3L367.6 144.5M367.6 144.5L382.8 145.8M367.4 156.7L378.3 152.8M367.4 156.7L370.1 168.3M370.1 168.3L380.2 163.7M370.1 168.3L365.3 177.8M372.1 186.4L375.0 187.5M372.1 186.4L365.4 194.4M365.4 194.4L376.0 199.7M365.4 194.4L365.0 203.5M365.0 203.5L372.4 216.9M372.4 216.9L370.3 228.3M372.3 236.9L380.9 233.5M372.3 236.9L369.9 247.0M369.9 247.0L375.4 248.2M369.9 247.0L370.6 256.8M370.3 275.7L380.0 277.7M376.5 2.3L387.0 9.7M376.5 2.3L381.2 19.3M381.2 19.3L390.7 12.1M380.2 25.0L381.6 38.3M381.6 38.3L379.5 44.1M379.5 44.1L377.4 55.4M377.4 55.4L377.5 65.4M377.5 65.4L388.9 62.5M377.5 65.4L380.1 79.5M375.4 86.5L375.3 93.0M381.5 106.6L387.9 107.2M381.5 106.6L382.3 115.6M382.3 115.6L375.1 125.1M375.1 125.1L388.1 128.3M375.1 125.1L379.7 139.5M382.8 145.8L389.5 144.3M375.0 187.5L376.0 199.7M376.0 199.7L389.8 194.5M376.0 199.7L375.7 209.0M375.7 209.0L388.4 209.1M375.7 209.0L376.0 212.1M376.0 212.1L388.0 217.5M380.8 223.9L389.8 229.2M380.8 223.9L380.9 233.5M380.9 233.5L391.5 234.3M380.9 233.5L375.4 248.2M375.4 248.2L385.0 244.1M380.7 258.8L388.4 256.7M380.7 258.8L380.8 262.7M380.8 262.7L391.5 269.1M378.7 289.5L391.5 288.9M387.0 9.7L399.6 4.2M390.7 12.1L401.8 18.5M390.7 12.1L385.1 27.2M385.1 27.2L400.5 29.3M385.1 27.2L391.5 32.6M387.5 47.8L399.4 48.4M386.3 58.9L396.6 58.0M386.3 58.9L388.9 62.5M388.9 62.5L402.5 63.9M388.9 62.5L387.9 76.6M387.9 76.6L399.9 77.4M388.5 87.4L386.2 98.4M386.2 98.4L397.0 98.0M388.1 128.3L401.2 123.9M388.1 128.3L392.6 138.3M392.6 138.3L399.6 139.2M392.6 138.3L389.5 144.3M389.5 144.3L385.5 159.8M390.6 168.6L387.7 176.8M387.7 176.8L396.4 177.6M387.7 176.8L392.8 188.7M389.8 194.5L398.2 196.1M389.8 194.5L388.4 209.1M388.4 209.1L396.2 202.4M388.4 209.1L388.0 217.5M391.5 234.3L401.3 233.2M391.5 234.3L385.0 244.1M385.0 244.1L399.8 244.8M388.4 256.7L399.2 252.2M388.4 256.7L391.5 269.1M391.5 269.1L395.3 269.9M385.3 278.7L391.5 288.9M399.6 4.2L401.8 18.5M401.8 18.5L412.6 18.1M400.5 29.3L411.6 29.7M400.5 29.3L397.8 32.7M397.8 32.7L399.4 48.4M399.4 48.4L406.6 43.4M396.6 58.0L405.7 52.4M396.6 58.0L402.5 63.9M402.5 63.9L409.5 69.0M402.5 63.9L399.9 77.4M399.9 77.4L408.7 79.6M399.9 77.4L398.7 83.7M398.7 83.7L397.0 98.0M401.3 105.7L406.0 109.7M401.3 105.7L395.7 118.5M401.2 123.9L410.1 129.7M401.2 123.9L399.6 139.2M402.1 146.2L408.6 143.3M398.8 156.7L396.5 163.5M396.5 163.5L406.8 162.3M396.5 163.5L396.4 177.6M397.9 186.5L412.2 189.2M397.9 186.5L398.2 196.1M398.2 196.1L411.7 192.4M398.2 196.1L396.2 202.4M396.2 202.4L411.3 207.7M396.2 202.4L403.0 215.0M403.0 215.0L395.8 227.1M395.8 227.1L401.3 233.2M401.3 233.2L399.8 244.8M399.8 244.8L399.2 252.2M399.2 252.2L409.7 258.1M395.3 269.9L401.9 275.9M401.9 275.9L399.5 284.1M411.2 5.4L416.9 3.1M411.2 5.4L412.6 18.1M412.6 18.1L420.4 12.1M407.0 32.3L415.3 39.4M407.0 32.3L406.6 43.4M406.6 43.4L405.7 52.4M405.7 52.4L421.9 59.1M409.5 69.0L416.1 65.6M408.7 79.6L415.8 79.4M408.7 79.6L412.3 82.5M412.3 82.5L421.7 87.0M412.3 82.5L409.8 95.2M409.8 95.2L418.6 94.7M409.8 95.2L406.0 109.7M406.0 109.7L421.6 105.8M406.0 109.7L407.1 116.5M407.1 116.5L420.0 113.1M407.1 116.5L410.1 129.7M410.1 129.7L410.4 135.1M410.4 135.1L408.6 143.3M408.6 143.3L416.2 149.0M408.6 143.3L412.7 159.9M412.7 159.9L417.1 155.3M406.8 162.3L416.2 164.2M407.0 174.8L421.7 174.7M407.0 174.8L412.2 189.2M411.7 192.4L417.5 199.2M411.7 192.4L411.3 207.7M411.3 207.7L410.2 219.9M410.2 219.9L415.5 219.2M405.4 223.2L420.3 223.7M405.4 223.2L411.0 239.5M411.0 239.5L418.8 234.3M410.4 244.4L417.1 243.6M410.4 244.4L409.7 258.1M409.7 258.1L405.8 264.6M405.8 264.6L423.0 269.4M405.8 264.6L407.1 273.0M408.9 283.3L422.2 282.5M416.9 3.1L430.8 4.3M416.9 3.1L420.4 12.1M420.4 12.1L420.7 23.6M420.7 23.6L415.3 39.4M415.3 39.4L416.8 49.5M416.8 49.5L431.7 46.2M416.1 65.6L432.3 63.7M416.1 65.6L415.8 79.4M415.8 79.4L429.6 73.1M415.8 79.4L421.7 87.0M418.6 94.7L430.7 93.6M421.6 105.8L425.6 102.7M420.0 113.1L429.9 116.0M420.0 113.1L416.8 122.5M416.8 122.5L427.2 123.6M420.7 136.4L429.9 137.7M420.7 136.4L416.2 149.0M416.2 149.0L417.1 155.3M417.1 155.3L426.6 152.5M416.2 164.2L430.9 165.3M416.3 185.9L431.5 184.7M416.3 185.9L417.5 199.2M415.9 209.8L415.5 219.2M415.5 219.2L432.3 215.8M418.8 234.3L426.5 238.7M417.1 243.6L427.9 243.3M423.0 269.4L425.0 266.2M415.8 274.3L428.6 276.1M422.2 282.5L426.0 287.7M430.8 4.3L441.5 8.9M432.8 12.1L437.6 17.7M431.5 24.7L426.1 32.0M426.1 32.0L431.7 46.2M431.7 46.2L426.5 55.5M426.5 55.5L439.1 56.2M426.5 55.5L432.3 63.7M432.3 63.7L439.3 62.2M432.3 63.7L429.6 73.1M429.6 73.1L426.4 88.2M426.4 88.2L436.5 82.8M426.4 88.2L430.7 93.6M430.7 93.6L437.0 98.5M429.9 116.0L427.2 123.6M427.2 123.6L429.9 137.7M431.5 146.7L426.6 152.5M426.6 152.5L442.0 157.7M430.8 172.4L431.5 184.7M431.5 184.7L431.7 198.9M431.7 198.9L428.9 202.1M428.9 202.1L439.7 208.9M432.3 215.8L436.2 216.6M432.0 224.1L426.5 238.7M426.5 238.7L427.9 243.3M427.9 243.3L438.1 245.4M427.9 243.3L428.0 256.8M428.0 256.8L425.0 266.2M425.0 266.2L438.2 269.5M425.0 266.2L428.6 276.1M428.6 276.1L441.2 274.7M441.5 8.9L437.6 17.7M437.6 17.7L451.4 19.3M437.6 17.7L438.1 28.0M435.5 39.0L445.4 36.1M435.5 39.0L442.6 46.0M442.6 46.0L452.7 49.5M439.1 56.2L447.0 55.4M439.1 56.2L439.3 62.2M439.3 62.2L442.7 73.8M442.7 73.8L436.5 82.8M436.5 82.8L437.0 98.5M437.0 98.5L445.2 93.1M435.2 102.8L452.8 108.2M435.2 102.8L440.6 113.6M440.6 113.6L435.1 126.8M435.1 126.8L451.5 129.1M435.1 126.8L439.6 136.2M439.6 136.2L440.6 142.8M435.4 163.0L449.3 169.4M438.9 176.0L450.0 174.0M438.2 193.1L439.7 208.9M436.2 216.6L446.0 216.8M436.2 216.6L441.0 223.3M441.0 223.3L452.6 226.1M441.0 223.3L441.6 239.5M441.6 239.5L447.1 235.7M441.6 239.5L438.1 245.4M438.1 245.4L441.7 256.2M441.7 256.2L446.0 253.1M441.7 256.2L438.2 269.5M438.2 269.5L441.2 274.7M441.2 274.7L447.3 273.9M441.2 274.7L436.9 284.7M436.9 284.7L445.7 286.4M448.5 9.8L461.7 6.9M451.4 19.3L459.6 17.2M451.5 28.8L456.6 27.7M451.5 28.8L445.4 36.1M452.7 49.5L459.9 45.8M452.7 49.5L447.0 55.4M447.0 55.4L450.1 64.9M450.1 64.9L449.2 72.6M448.5 86.0L455.1 84.8M448.5 86.0L445.2 93.1M445.2 93.1L461.9 93.9M452.8 108.2L452.5 117.1M451.5 129.1L457.4 128.2M452.1 132.3L450.1 144.1M450.1 144.1L462.0 145.5M450.1 144.1L450.4 154.2M450.4 154.2L455.5 155.1M450.4 154.2L449.3 169.4M449.3 169.4L458.5 167.9M449.3 169.4L450.0 174.0M450.0 174.0L455.9 173.8M450.0 174.0L449.2 185.5M449.2 185.5L462.7 187.9M452.6 194.3L447.4 207.2M447.4 207.2L457.8 207.4M447.4 207.2L446.0 216.8M446.0 216.8L459.9 218.8M446.0 216.8L452.6 226.1M447.1 235.7L449.3 243.2M449.3 243.2L461.1 245.8M446.0 253.1L461.3 257.7M447.3 265.3L462.3 263.0M447.3 265.3L447.3 273.9M447.3 273.9L462.0 272.0M445.7 286.4L461.1 286.7M461.7 6.9L469.0 9.7M461.7 6.9L459.6 17.2M456.6 27.7L471.3 29.0M456.6 27.7L458.7 36.4M458.7 36.4L469.9 35.0M459.9 45.8L468.6 45.7M457.5 53.9L456.8 66.1M456.8 66.1L458.1 76.7M455.1 84.8L471.3 88.8M455.1 84.8L461.9 93.9M459.5 105.9L466.5 104.4M457.4 128.2L469.7 122.7M457.4 128.2L456.3 132.5M456.3 132.5L472.4 134.6M462.0 145.5L455.5 155.1M458.5 167.9L455.9 173.8M455.9 173.8L465.1 172.4M455.9 173.8L462.7 187.9M462.7 187.9L456.2 194.7M456.2 194.7L472.4 198.2M457.8 207.4L469.3 210.0M459.9 218.8L469.1 216.1M459.9 218.8L461.6 226.1M461.6 226.1L460.9 237.9M460.9 237.9L461.1 245.8M461.1 245.8L461.3 257.7M461.3 257.7L462.3 263.0M462.3 263.0L465.8 265.0M462.3 263.0L462.0 272.0M462.0 272.0L468.2 276.5M462.0 272.0L461.1 286.7M461.1 286.7L469.6 289.0M469.0 9.7L482.7 5.9M469.0 9.7L469.6 15.3M469.6 15.3L471.3 29.0M471.3 29.0L483.0 24.7M471.3 29.0L469.9 35.0M469.9 35.0L468.6 45.7M470.8 54.3L482.8 58.6M468.1 66.4L479.1 62.9M468.1 66.4L468.1 74.6M468.1 74.6L482.2 77.5M468.1 74.6L471.3 88.8M471.3 88.8L469.0 95.6M469.0 95.6L482.1 95.4M466.5 104.4L476.3 104.3M466.5 104.4L466.2 116.6M466.2 116.6L479.1 116.0M466.2 116.6L469.7 122.7M472.4 134.6L480.0 136.8M471.7 148.7L477.8 149.9M471.7 148.7L472.7 153.6M472.7 153.6L480.1 152.3M468.4 169.3L478.3 168.3M465.1 172.4L469.5 186.0M469.5 186.0L472.4 198.2M472.4 198.2L481.7 196.7M469.3 210.0L480.3 203.6M469.3 210.0L469.1 216.1M469.1 216.1L479.0 216.4M469.1 216.1L470.5 225.1M470.5 225.1L477.1 227.2M470.5 225.1L467.9 236.8M467.9 236.8L479.3 240.0M467.9 236.8L467.8 249.6M467.8 249.6L479.6 245.3M467.8 249.6L470.4 256.2M470.4 256.2L476.0 253.3M470.4 256.2L465.8 265.0M465.8 265.0L468.2 276.5M468.2 276.5L475.8 273.4M468.2 276.5L469.6 289.0M482.7 5.9L489.9 8.5M478.5 17.0L485.5 12.1M483.0 24.7L491.2 24.6M479.2 38.5L476.4 44.5M476.4 44.5L486.4 44.1M479.1 62.9L489.7 64.8M479.1 62.9L482.2 77.5M482.2 77.5L488.6 75.1M482.2 77.5L481.6 89.9M481.6 89.9L485.4 89.1M482.1 95.4L489.7 99.7M482.1 95.4L476.3 104.3M476.3 104.3L479.1 116.0M479.1 116.0L476.5 123.5M476.5 123.5L492.4 128.8M476.5 123.5L480.0 136.8M480.0 136.8L487.5 139.2M480.0 136.8L477.8 149.9M477.8 149.9L480.1 152.3M480.1 152.3L489.8 159.7M478.3 168.3L489.0 169.6M475.0 184.4L481.7 196.7M480.3 203.6L488.9 208.3M477.1 227.2L479.3 240.0M479.3 240.0L479.6 245.3M479.6 245.3L489.5 242.9M476.0 253.3L489.3 255.1M476.0 253.3L481.1 262.9M481.1 262.9L475.8 273.4M475.8 273.4L479.2 288.6M479.2 288.6L487.8 284.0M485.5 12.1L496.9 12.3M485.5 12.1L491.2 24.6M491.2 24.6L490.7 34.8M490.7 34.8L496.2 37.6M490.7 34.8L486.4 44.1M485.8 59.2L489.7 64.8M489.7 64.8L488.6 75.1M488.6 75.1L501.4 73.3M489.7 99.7L488.5 107.0M488.5 107.0L487.0 112.4M487.5 139.2L491.5 144.4M491.5 144.4L489.8 159.7M489.8 159.7L497.9 154.0M489.8 159.7L489.0 169.6M490.7 183.8L499.1 186.3M490.7 183.8L487.5 199.0M487.5 199.0L488.9 208.3M488.9 208.3L498.1 207.3M488.9 208.3L486.9 213.4M486.9 213.4L499.5 214.5M487.9 223.5L498.1 222.7M492.8 234.3L496.4 238.8M489.5 242.9L497.6 247.3M489.5 242.9L489.3 255.1M489.3 255.1L495.9 256.5M489.3 255.1L488.2 262.5M488.2 262.5L497.9 266.0M488.2 262.5L486.0 278.6M486.0 278.6L497.4 272.5M487.8 284.0L497.5 283.8M496.5 4.3L506.0 7.7M496.9 12.3L507.3 15.2M496.9 12.3L500.3 24.7M500.3 24.7L512.3 28.2M500.3 24.7L496.2 37.6M495.7 44.2L506.1 44.2M495.7 44.2L501.7 53.0M501.7 53.0L505.2 57.4M498.5 68.7L510.3 64.8M501.4 73.3L497.8 87.8M497.8 87.8L498.0 99.7M496.7 109.6L499.0 113.8M499.0 113.8L498.6 123.0M498.6 123.0L510.9 127.7M498.6 123.0L500.7 134.1M500.7 134.1L505.3 132.3M500.7 134.1L502.2 146.7M499.1 186.3L511.7 186.6M497.2 198.2L510.7 194.0M497.2 198.2L498.1 207.3M498.1 207.3L508.5 207.5M496.4 238.8L497.6 247.3M497.6 247.3L511.8 246.9M495.9 256.5L505.4 254.0M495.9 256.5L497.9 266.0M497.4 272.5L506.7 279.3M506.0 7.7L520.6 5.1M506.0 7.7L507.3 15.2M507.3 15.2L521.0 18.6M507.3 15.2L512.3 28.2M512.1 38.9L522.6 35.4M506.1 44.2L505.2 57.4M505.2 57.4L510.3 64.8M510.3 64.8L520.0 65.6M510.3 64.8L508.3 77.3M508.3 77.3L515.4 77.6M508.3 77.3L510.6 84.0M510.6 84.0L518.4 86.1M511.8 94.8L522.4 93.0M505.9 119.3L520.6 118.4M505.9 119.3L510.9 127.7M510.9 127.7L517.1 126.4M510.9 127.7L505.3 132.3M505.3 132.3L506.3 143.6M506.3 143.6L519.4 144.0M507.4 155.0L505.3 164.5M505.3 164.5L518.3 163.6M505.3 164.5L510.1 173.4M510.1 173.4L517.5 173.1M510.1 173.4L511.7 186.6M511.7 186.6L520.7 187.4M507.8 212.0L511.7 228.2M511.7 228.2L517.4 229.1M511.7 228.2L507.3 232.3M507.3 232.3L511.8 246.9M511.8 246.9L517.7 248.5M511.8 246.9L505.4 254.0M505.4 254.0L519.4 258.1M505.4 254.0L505.9 268.3M505.9 268.3L516.4 267.3M511.0 282.7L521.1 288.6M517.2 22.7L525.5 24.2M522.6 35.4L522.4 47.5M520.9 58.6L520.0 65.6M520.0 65.6L515.4 77.6M515.4 77.6L525.6 72.1M518.4 86.1L522.4 93.0M522.4 93.0L525.7 97.7M517.1 126.4L528.5 123.5M517.1 126.4L522.8 137.1M515.5 154.9L530.0 159.5M518.3 163.6L530.2 164.0M517.5 173.1L520.7 187.4M520.7 187.4L525.2 188.2M516.9 193.9L531.7 194.4M519.1 205.6L526.5 207.1M522.5 214.8L517.4 229.1M517.4 229.1L526.3 228.3M517.4 229.1L516.1 236.5M516.1 236.5L517.7 248.5M517.7 248.5L519.4 258.1M519.8 275.7L528.0 278.7M519.8 275.7L521.1 288.6M521.1 288.6L526.9 282.3M525.9 4.3L539.5 7.0M527.9 13.7L541.6 17.6M526.6 37.6L539.0 36.0M526.6 37.6L528.6 42.9M528.6 42.9L536.3 44.4M527.6 55.7L539.6 52.6M527.9 63.3L540.5 63.3M527.9 63.3L525.6 72.1M525.6 72.1L532.9 88.0M532.9 88.0L535.7 82.3M532.9 88.0L525.7 97.7M525.7 97.7L538.5 93.5M525.7 97.7L532.8 106.5M525.9 115.9L541.7 118.8M528.5 123.5L541.3 125.4M528.5 123.5L529.3 132.1M532.4 147.2L539.1 145.4M530.0 159.5L530.2 164.0M530.2 164.0L540.3 168.6M527.0 173.1L525.2 188.2M526.5 207.1L531.8 219.4M526.3 228.3L542.8 229.3M527.6 243.5L531.6 254.6M531.6 254.6L541.5 252.5M531.6 254.6L527.9 266.4M527.9 266.4L540.4 266.9M528.0 278.7L526.9 282.3M539.5 7.0L541.6 17.6M542.2 29.6L545.2 23.5M542.2 29.6L539.0 36.0M539.0 36.0L550.4 35.6M536.3 44.4L545.7 47.3M539.6 52.6L548.0 56.6M539.6 52.6L540.5 63.3M540.5 63.3L548.3 66.2M538.5 79.8L549.5 75.2M538.5 79.8L535.7 82.3M535.7 82.3L538.5 93.5M538.5 93.5L540.8 102.0M540.8 102.0L545.9 108.9M541.7 118.8L541.3 125.4M541.3 125.4L549.2 124.0M541.3 125.4L537.3 137.3M537.3 137.3L548.9 136.4M537.3 137.3L539.1 145.4M537.7 155.5L540.3 168.6M540.3 168.6L542.2 173.3M542.2 173.3L548.3 172.6M542.2 173.3L537.4 185.5M537.4 185.5L548.5 188.9M539.5 194.8L549.4 197.7M539.5 194.8L536.6 202.7M536.6 202.7L551.1 202.9M537.6 215.7L542.8 229.3M542.8 229.3L545.8 228.6M541.9 239.8L542.7 247.0M541.5 252.5L551.2 253.1M541.5 252.5L540.4 266.9M540.4 266.9L551.2 262.5M540.4 266.9L537.4 276.6M537.4 276.6L542.6 285.8M542.6 285.8L545.1 286.8M550.2 4.4L547.7 19.1M547.7 19.1L560.7 15.4M545.2 23.5L550.4 35.6M550.4 35.6L562.0 36.5M548.0 56.6L548.3 66.2M548.3 66.2L557.7 68.1M548.3 66.2L549.5 75.2M549.5 75.2L560.4 78.6M549.5 75.2L545.9 83.4M552.1 96.4L545.9 108.9M545.9 108.9L547.0 112.8M549.2 124.0L548.9 136.4M548.9 136.4L546.8 146.6M545.9 156.1L556.5 155.6M549.7 162.6L561.7 166.7M548.3 172.6L555.9 172.2M548.3 172.6L548.5 188.9M548.5 188.9L555.9 188.4M549.4 197.7L551.1 202.9M551.1 202.9L552.9 217.8M552.9 217.8L558.0 213.2M552.9 217.8L545.8 228.6M552.7 246.5L562.6 242.1M552.7 246.5L551.2 253.1M551.2 253.1L557.7 253.2M551.2 253.1L551.2 262.5M551.2 262.5L546.9 275.0M546.9 275.0L545.1 286.8M545.1 286.8L556.5 288.5M556.7 4.4L570.4 5.1M556.7 4.4L560.7 15.4M562.1 27.0L571.8 25.1M562.1 27.0L562.0 36.5M562.0 36.5L572.0 36.9M562.0 36.5L562.3 49.0M562.3 49.0L565.6 44.6M562.3 49.0L556.3 58.0M557.7 68.1L569.7 62.3M557.7 68.1L560.4 78.6M560.4 78.6L566.4 74.9M560.4 78.6L556.0 85.0M560.9 99.6L568.1 94.8M560.8 102.3L565.0 106.6M560.8 102.3L559.8 112.8M559.8 112.8L567.7 112.2M559.8 112.8L559.4 128.4M559.4 128.4L568.7 129.9M555.9 139.4L560.4 144.0M556.5 155.6L567.2 156.0M556.5 155.6L561.7 166.7M555.9 172.2L569.2 179.7M555.9 172.2L555.9 188.4M555.9 188.4L572.9 182.3M555.9 188.4L556.5 196.4M557.3 207.5L572.0 208.2M557.3 207.5L558.0 213.2M558.0 213.2L570.1 217.1M558.0 213.2L562.0 226.3M562.0 226.3L567.9 224.3M560.5 238.5L571.4 239.0M562.6 242.1L572.5 247.5M559.0 269.0L570.9 266.1M561.4 272.3L570.1 274.8M570.4 5.1L575.5 4.7M568.8 13.3L577.6 19.9M568.8 13.3L571.8 25.1M571.8 25.1L578.9 24.9M572.0 36.9L576.9 33.9M572.0 36.9L565.6 44.6M566.7 59.2L569.7 62.3M569.7 62.3L578.6 65.6M566.4 74.9L579.5 74.4M568.7 86.6L576.4 82.5M565.0 106.6L567.7 112.2M567.7 112.2L568.7 129.9M568.7 129.9L565.4 133.2M565.4 133.2L575.6 133.4M565.4 133.2L570.4 144.2M570.4 144.2L567.2 156.0M567.2 156.0L577.9 158.2M569.2 179.7L575.5 175.9M569.2 179.7L572.9 182.3M572.9 182.3L569.5 198.2M569.5 198.2L577.1 192.2M569.5 198.2L572.0 208.2M572.0 208.2L576.3 204.1M567.9 224.3L578.2 223.6M571.4 239.0L572.5 247.5M572.5 247.5L580.2 243.6M567.4 258.1L570.9 266.1M570.9 266.1L579.8 262.6M570.9 266.1L570.1 274.8M570.1 274.8L581.5 279.0M570.1 274.8L569.4 285.2M575.5 4.7L577.6 19.9M577.6 19.9L578.9 24.9M578.9 24.9L576.9 33.9M576.9 33.9L587.6 38.0M576.9 33.9L577.8 43.1M577.8 43.1L590.2 45.2M577.8 43.1L575.1 59.0M578.6 65.6L585.5 65.3M576.4 82.5L587.7 86.0M577.4 94.5L580.8 106.4M580.8 106.4L588.7 102.1M580.8 106.4L582.5 114.7M582.5 114.7L592.4 116.5M582.5 114.7L582.4 126.7M582.4 126.7L575.6 133.4M575.6 133.4L579.6 149.9M579.6 149.9L587.6 142.7M577.9 158.2L586.2 153.1M577.9 158.2L578.4 168.9M578.4 168.9L591.1 162.7M578.4 168.9L575.5 175.9M575.5 175.9L591.5 175.4M575.5 175.9L582.2 184.2M582.2 184.2L589.3 186.7M577.1 192.2L589.4 197.3M577.1 192.2L576.3 204.1M576.3 204.1L589.8 204.6M580.6 213.7L578.2 223.6M579.8 238.9L580.2 243.6M580.2 243.6L591.2 249.8M580.2 243.6L580.9 259.7M579.8 262.6L589.2 269.5M581.5 279.0L577.7 283.1M586.5 6.3L601.2 4.9M586.5 6.3L592.0 17.1M592.0 17.1L592.4 23.7M592.4 23.7L601.1 22.7M587.6 38.0L595.2 33.1M590.2 45.2L595.5 46.0M590.4 54.7L599.4 53.5M585.5 65.3L602.5 64.9M585.5 65.3L585.4 77.0M585.4 77.0L596.2 73.4M585.4 77.0L587.7 86.0M587.7 86.0L600.9 89.4M587.7 86.0L589.8 94.1M589.8 94.1L588.7 102.1M592.4 116.5L602.9 116.0M592.4 116.5L592.9 122.4M592.9 122.4L589.9 137.8M589.9 137.8L587.6 142.7M587.6 142.7L597.6 149.2M586.2 153.1L595.9 157.9M591.1 162.7L591.5 175.4M591.5 175.4L598.2 178.9M589.3 186.7L595.5 186.5M589.8 204.6L590.9 214.1M590.9 214.1L590.7 228.1M591.2 234.5L596.9 233.6M591.2 249.8L601.1 247.1M588.6 254.2L597.4 260.0M589.2 269.5L596.7 266.6M586.1 272.1L596.3 278.9M588.8 287.2L602.0 284.1M601.2 4.9L611.0 8.6M601.2 4.9L602.9 13.8M602.9 13.8L607.3 14.7M602.9 13.8L601.1 22.7M595.2 33.1L606.3 37.5M599.4 53.5L609.6 59.1M596.2 73.4L607.9 78.2M600.9 89.4L611.9 83.5M596.3 92.2L601.2 103.9M601.2 103.9L607.4 102.2M602.9 116.0L605.9 119.8M602.9 116.0L600.1 124.8M600.1 124.8L605.1 129.3M601.4 135.7L597.6 149.2M597.6 149.2L605.8 143.3M595.5 167.2L607.7 169.3M595.5 167.2L598.2 178.9M598.2 178.9L595.5 186.5M595.5 186.5L612.8 182.3M595.5 186.5L598.3 199.4M598.3 199.4L602.6 207.0M596.8 214.0L597.1 225.5M597.1 225.5L596.9 233.6M596.9 233.6L605.2 239.9M596.9 233.6L601.1 247.1M601.1 247.1L607.5 249.0M597.4 260.0L606.0 255.9M596.7 266.6L606.1 265.4M596.7 266.6L596.3 278.9M596.3 278.9L606.4 277.5M596.3 278.9L602.0 284.1M607.3 14.7L617.8 16.0M607.3 14.7L608.9 29.1M608.9 29.1L606.3 37.5M606.3 37.5L616.7 39.7M606.3 37.5L609.8 45.6M609.8 45.6L622.1 47.9M609.8 45.6L609.6 59.1M609.6 59.1L617.2 53.4M609.6 59.1L606.7 69.1M606.7 69.1L607.9 78.2M611.9 100.0L617.9 92.1M607.4 102.2L620.5 107.2M605.1 129.3L620.5 129.9M605.1 129.3L606.2 137.9M605.8 143.3L610.5 152.7M610.5 152.7L618.4 159.8M610.5 152.7L607.7 169.3M612.8 182.3L623.0 182.0M609.0 213.9L618.0 213.9M608.4 222.8L605.2 239.9M605.2 239.9L621.7 238.3M605.2 239.9L607.5 249.0M607.5 249.0L622.3 242.4M606.0 255.9L620.6 254.6M606.0 255.9L606.1 265.4M606.1 265.4L620.2 266.4M606.1 265.4L606.4 277.5M606.4 277.5L606.2 287.9M606.2 287.9L615.0 288.0M619.0 2.9L617.8 16.0M617.8 16.0L629.7 20.0M622.3 24.8L626.9 27.0M622.3 24.8L616.7 39.7M616.7 39.7L630.9 35.0M622.1 47.9L617.2 53.4M617.2 53.4L629.2 56.9M617.2 53.4L617.1 62.6M617.1 62.6L630.4 64.6M615.3 76.1L618.3 86.5M618.3 86.5L626.8 86.9M617.9 92.1L620.5 107.2M620.5 107.2L628.8 107.8M620.5 107.2L619.4 116.4M620.5 129.9L622.0 137.7M618.2 144.5L618.4 159.8M618.4 159.8L631.5 153.9M618.4 159.8L618.1 165.1M618.1 165.1L618.3 173.1M623.0 182.0L631.6 189.2M617.0 206.9L628.1 208.7M618.0 213.9L631.5 213.0M618.0 213.9L616.6 222.9M621.7 238.3L625.8 234.9M621.7 238.3L622.3 242.4M622.3 242.4L631.4 246.2M620.6 254.6L628.6 252.7M620.6 254.6L620.2 266.4M620.2 266.4L617.5 279.8M617.5 279.8L615.0 288.0M631.8 6.1L629.7 20.0M629.7 20.0L626.9 27.0M626.9 27.0L639.2 23.9M630.9 35.0L630.7 45.1M630.7 45.1L638.0 42.1M630.7 45.1L629.2 56.9M629.2 56.9L630.4 64.6M630.4 64.6L635.5 63.4M630.0 76.3L626.8 86.9M626.8 86.9L637.6 83.9M627.1 99.3L641.7 92.7M628.8 107.8L640.1 108.9M628.8 107.8L629.2 115.8M629.2 115.8L636.6 115.4M626.8 123.1L641.3 126.9M626.8 123.1L632.4 136.2M632.4 136.2L638.0 132.4M632.4 136.2L629.2 146.2M629.2 146.2L638.5 144.9M629.2 146.2L631.5 153.9M631.5 153.9L626.4 168.6M626.4 168.6L638.3 167.2M626.4 168.6L628.7 177.1M631.6 189.2L638.1 186.6M631.9 192.3L642.4 193.5M628.1 208.7L642.8 207.7M631.5 213.0L638.0 217.3M631.5 213.0L626.2 224.0M626.2 224.0L637.6 222.6M625.8 234.9L641.0 235.0M631.4 246.2L639.2 246.0M631.4 246.2L628.6 252.7M628.6 252.7L642.2 258.1M628.6 252.7L628.2 270.0M628.2 270.0L635.2 266.7M630.6 275.6L638.7 275.7M630.6 275.6L628.8 288.4M641.1 3.2L648.8 9.1M641.1 3.2L640.4 14.9M640.4 14.9L648.5 15.9M640.4 14.9L639.2 23.9M638.0 34.7L650.4 37.9M638.0 34.7L638.0 42.1M638.0 42.1L648.2 42.3M638.0 42.1L636.6 56.6M636.6 56.6L650.4 56.4M637.6 83.9L645.6 88.5M637.6 83.9L641.7 92.7M641.7 92.7L645.8 92.7M641.7 92.7L640.1 108.9M640.1 108.9L651.0 106.5M636.6 115.4L641.3 126.9M641.3 126.9L650.7 125.9M638.0 132.4L638.5 144.9M638.5 144.9L648.3 146.7M640.7 154.4L653.0 158.5M638.3 167.2L652.0 163.2M641.5 174.8L647.7 176.1M638.1 186.6L645.0 189.9M638.1 186.6L642.4 193.5M642.4 193.5L647.2 194.1M638.0 217.3L637.6 222.6M637.6 222.6L649.1 225.4M637.6 222.6L641.0 235.0M641.0 235.0L639.2 246.0M639.2 246.0L642.2 258.1M642.2 258.1L651.9 254.1M642.2 258.1L635.2 266.7M635.2 266.7L638.7 275.7M638.7 275.7L649.3 275.0M648.8 9.1L659.7 4.9M648.8 9.1L648.5 15.9M648.5 15.9L649.1 28.6M649.1 28.6L662.4 26.4M649.1 28.6L650.4 37.9M650.4 37.9L655.4 34.5M650.4 37.9L648.2 42.3M650.4 56.4L651.2 68.2M651.2 68.2L657.2 68.4M645.9 73.8L657.3 77.7M645.9 73.8L645.6 88.5M645.6 88.5L661.4 86.7M645.8 92.7L651.0 106.5M651.0 106.5L658.6 109.0M645.4 117.4L650.7 125.9M645.4 137.5L661.9 132.6M645.4 137.5L648.3 146.7M648.3 146.7L653.0 158.5M653.0 158.5L662.4 156.5M653.0 158.5L652.0 163.2M652.0 163.2L661.4 166.0M652.0 163.2L647.7 176.1M647.7 176.1L660.4 177.4M645.0 189.9L647.2 194.1M647.2 194.1L647.5 204.0M647.5 204.0L662.3 203.7M649.1 225.4L645.4 234.4M651.9 248.4L657.1 249.2M651.9 248.4L651.9 254.1M651.9 254.1L660.5 253.2M646.6 262.4L655.5 267.6M646.6 262.4L649.3 275.0M649.3 275.0L655.3 278.7M649.3 275.0L648.7 285.9M661.4 13.6L662.4 26.4M662.4 26.4L672.3 24.6M655.4 34.5L659.3 45.3M659.3 45.3L671.4 49.8M659.3 45.3L659.5 54.6M659.5 54.6L657.2 68.4M657.2 68.4L657.3 77.7M657.3 77.7L666.8 76.4M657.3 77.7L661.4 86.7M658.6 99.5L670.8 95.4M658.6 109.0L670.4 102.9M660.1 122.4L672.4 130.0M660.1 122.4L661.9 132.6M659.8 143.4L667.3 144.8M659.8 143.4L662.4 156.5M662.4 156.5L671.0 156.0M661.4 166.0L672.4 162.7M660.4 177.4L668.9 178.9M657.4 183.7L669.8 186.3M657.4 183.7L661.7 193.2M661.7 193.2L662.3 203.7M662.3 203.7L655.8 212.8M655.8 212.8L671.8 213.8M657.1 249.2L667.8 249.6M657.1 249.2L660.5 253.2M660.5 253.2L670.3 252.4M655.5 267.6L667.7 265.6M655.5 267.6L655.3 278.7M655.3 278.7L657.3 283.9M657.3 283.9L666.4 288.3M669.5 13.2L679.5 12.8M669.5 13.2L672.3 24.6M672.3 24.6L679.4 28.3M671.4 49.8L675.3 46.1M668.1 52.3L675.8 57.2M668.0 67.1L676.1 66.6M666.8 76.4L665.7 85.7M670.8 95.4L676.4 99.5M670.4 102.9L677.7 108.7M671.6 113.0L672.4 130.0M672.4 130.0L672.5 136.2M672.5 136.2L682.0 132.9M667.3 144.8L671.0 156.0M672.4 162.7L676.3 166.3M672.4 162.7L668.9 178.9M668.9 178.9L679.1 174.9M669.8 186.3L676.6 185.2M669.8 186.3L665.7 193.1M665.7 193.1L676.6 193.0M665.7 193.1L667.2 209.1M671.8 213.8L672.4 222.3M672.4 222.3L675.1 229.5M669.8 239.7L678.9 238.3M670.3 252.4L667.7 265.6M667.7 265.6L676.2 264.1M667.7 265.6L667.0 277.9M667.0 277.9L675.2 275.1M667.0 277.9L666.4 288.3M679.5 12.8L689.6 13.9M679.5 12.8L679.4 28.3M679.4 28.3L689.8 28.3M679.4 28.3L679.8 35.7M679.8 35.7L690.7 32.5M679.8 35.7L675.3 46.1M675.3 46.1L687.0 46.8M676.1 66.6L689.9 67.5M680.3 83.3L691.5 85.7M680.3 83.3L676.4 99.5M676.4 99.5L692.4 92.1M676.4 99.5L677.7 108.7M677.7 108.7L692.5 105.3M682.0 115.8L688.3 112.7M682.0 132.9L679.0 146.3M679.0 146.3L687.8 143.1M679.0 146.3L675.9 155.7M676.3 166.3L687.6 169.8M676.3 166.3L679.1 174.9M679.1 174.9L693.0 178.3M679.1 174.9L676.6 185.2M676.6 185.2L676.6 193.0M676.6 193.0L676.9 209.0M676.9 209.0L679.0 219.1M679.0 219.1L686.6 217.0M679.0 219.1L675.1 229.5M678.9 238.3L679.6 247.5M679.6 247.5L687.8 243.3M676.2 264.1L691.0 263.1M676.2 264.1L675.2 275.1M675.2 275.1L679.1 284.3M692.1 2.7L701.7 8.4M692.1 2.7L689.6 13.9M689.6 13.9L689.8 28.3M689.8 28.3L690.7 32.5M692.9 52.3L702.6 52.9M689.9 67.5L702.7 68.3M689.9 67.5L691.5 74.7M691.5 74.7L691.5 85.7M691.5 85.7L696.9 83.6M692.4 92.1L698.7 93.9M692.5 105.3L688.3 112.7M688.3 112.7L687.0 127.9M687.0 127.9L690.4 133.2M690.4 133.2L701.3 137.5M690.4 133.2L687.8 143.1M686.6 153.8L698.2 152.7M693.0 178.3L697.7 176.8M693.0 178.3L688.8 186.0M688.8 186.0L701.7 188.3M691.0 207.1L686.6 217.0M691.8 228.3L699.8 225.7M685.7 237.7L697.7 233.7M685.7 237.7L687.8 243.3M687.8 243.3L692.7 257.4M692.7 257.4L691.0 263.1M691.0 263.1L695.7 264.2M691.0 263.1L691.6 279.5M691.6 279.5L692.2 288.0M692.2 288.0L700.3 288.5M701.7 8.4L706.0 7.5M699.7 15.5L705.3 18.6M699.7 15.5L701.6 28.3M702.0 34.4L702.7 46.3M702.7 46.3L706.8 49.1M702.6 52.9L702.7 68.3M702.7 68.3L708.2 66.0M702.7 68.3L697.0 78.7M697.0 78.7L712.6 76.1M696.9 83.6L698.7 93.9M698.7 93.9L711.6 93.3M698.9 109.3L709.2 102.0M698.9 109.3L700.5 117.7M700.5 117.7L706.4 119.6M698.1 128.3L708.6 128.5M698.1 128.3L701.3 137.5M701.3 137.5L707.0 134.8M701.3 137.5L702.5 148.6M702.5 148.6L705.8 146.4M698.2 152.7L711.9 156.1M700.2 168.7L708.0 169.4M700.2 168.7L697.7 176.8M697.7 176.8L701.7 188.3M701.7 188.3L695.0 195.9M695.1 202.9L707.9 207.3M695.1 202.9L701.5 215.3M699.8 225.7L709.2 227.4M699.8 225.7L697.7 233.7M697.8 248.8L707.9 249.8M697.8 248.8L700.0 254.3M700.0 254.3L705.5 258.7M700.0 254.3L695.7 264.2M700.6 275.5L700.3 288.5M700.3 288.5L712.1 287.8M705.3 18.6L717.6 13.1M706.5 24.2L712.7 34.9M712.7 34.9L706.8 49.1M709.9 59.2L718.1 58.0M709.9 59.2L708.2 66.0M708.2 66.0L712.6 76.1M712.6 76.1L721.1 74.3M712.6 76.1L712.9 83.5M709.2 102.0L721.4 107.4M709.2 102.0L706.4 119.6M706.4 119.6L718.0 119.7M706.4 119.6L708.6 128.5M708.6 128.5L720.7 127.5M708.6 128.5L707.0 134.8M707.0 134.8L705.8 146.4M705.8 146.4L711.9 156.1M711.9 156.1L708.0 169.4M708.0 169.4L712.2 177.3M712.2 177.3L722.0 173.3M705.6 187.0L720.9 183.4M705.6 187.0L708.6 199.7M708.6 199.7L717.5 192.4M707.9 207.3L717.4 205.1M707.9 207.3L710.1 215.0M710.1 215.0L722.7 219.7M709.2 227.4L712.3 236.0M712.3 236.0L707.9 249.8M707.9 249.8L717.6 245.5M707.9 249.8L705.5 258.7M705.5 258.7L715.9 254.1M712.1 287.8L716.6 289.3M721.0 2.3L728.6 8.7M722.6 29.1L727.5 23.2M722.6 29.1L716.2 36.7M716.2 36.7L719.6 42.4M719.6 42.4L729.5 47.4M719.6 42.4L718.1 58.0M718.1 58.0L731.0 54.2M718.1 58.0L720.1 64.2M721.1 74.3L719.4 85.4M719.4 85.4L730.0 84.1M719.4 85.4L722.8 97.2M718.0 119.7L727.8 119.5M718.0 119.7L720.7 127.5M720.7 127.5L727.1 123.9M717.2 133.3L719.6 148.6M719.6 148.6L731.0 147.4M721.3 154.8L728.3 158.5M721.3 154.8L716.1 166.1M716.1 166.1L725.9 164.5M722.0 173.3L730.2 179.7M722.7 219.7L727.7 215.1M716.5 224.5L731.4 224.8M716.5 224.5L722.5 233.6M722.5 233.6L726.5 239.0M717.6 245.5L729.3 246.2M717.6 245.5L715.9 254.1M715.9 254.1L730.4 259.2M718.2 265.1L726.1 264.7M722.7 274.1L725.5 275.3M716.6 289.3L729.0 288.8M728.6 8.7L730.1 18.2M729.5 47.4L731.0 54.2M730.0 84.1L731.2 92.3M731.6 106.5L727.8 119.5M727.8 119.5L727.1 123.9M727.1 123.9L725.6 136.4M725.6 136.4L731.0 147.4M731.0 147.4L728.3 158.5M730.1 187.5L731.2 195.2M731.4 224.8L726.5 239.0M729.3 246.2L730.4 259.2M730.4 259.2L726.1 264.7M726.1 264.7L725.5 275.3"/>
</g>
<g fill="none" stroke="#57698d" stroke-width="1.1" opacity="0.8">
<path d="M119 40 L160 30 L200 20"/>
<path d="M125 16 L150 60 L170 110 L185 160 L200 200"/>
<path d="M119 130 L170 125 L230 120 L300 110"/>
<path d="M119 165 L180 170 L240 178 L300 185"/>
<path d="M140 16 L175 70 L210 140 L250 200"/>
<path d="M119 215 L180 210 L240 215 L300 225 L360 235 L420 240"/>
<path d="M230 16 L250 60 L270 95"/>
<path d="M300 16 L290 60 L285 110"/>
<path d="M320 16 L340 70"/>
<path d="M150 269 L200 245 L260 230"/>
<path d="M119 250 L200 255 L260 262 L300 269"/>
<path d="M330 110 L380 130 L420 150"/>
<path d="M300 140 L360 150 L419 160"/>
<path d="M330 269 L350 240 L380 230 L430 225"/>
<path d="M360 269 L380 250 L420 255"/>
<path d="M420 170 L470 165 L520 160 L560 150 L620 140 L705 130"/>
<path d="M500 16 L520 60 L540 100 L560 130"/>
<path d="M555 40 L600 60 L650 80 L705 90"/>
<path d="M560 90 L620 85 L705 70"/>
<path d="M600 16 L610 60 L625 100 L640 140 L650 180"/>
<path d="M660 16 L680 60 L700 110"/>
<path d="M520 120 L580 110 L640 100 L705 95"/>
<path d="M560 180 L620 190 L705 200"/>
<path d="M440 240 L500 260"/>
<path d="M560 260 L620 250 L700 255"/>
<path d="M419 120 L470 100 L530 80"/>
<path d="M470 16 L490 50 L500 90"/>
<path d="M600 150 L660 160 L705 165"/>
<path d="M380 16 L400 40"/>
<path d="M640 30 L680 45"/>
<path d="M119 90 L150 80 L200 75 L250 72 L300 75"/>
<path d="M230 120 L250 140 L270 150"/>
<path d="M360 200 L400 180 L440 170"/>
<path d="M160 190 L200 188 L240 190"/>
<path d="M119 120 L140 140 L150 170 L160 200"/>
<path d="M260 16 L270 40 L262 70"/>
<path d="M340 150 L350 180 L345 210"/>
<path d="M520 40 L560 60"/>
<path d="M580 30 L590 70 L585 110"/>
<path d="M640 110 L650 140 L660 175"/>
<path d="M600 190 L580 210"/>
<path d="M660 260 L690 250"/>
</g>
<path d="M176 199 L234 197 L236 226 L178 227 Z" fill="#455779"/>
<path d="M205.5 196 Q206 208 220 215" fill="none" stroke="#2c3754" stroke-width="2.4" stroke-linecap="round"/>
<ellipse cx="288" cy="223" rx="4.5" ry="1" transform="rotate(-22 288 223)" fill="#2c3754"/>
<ellipse cx="190.5" cy="213.5" rx="3" ry="2.3" fill="#2c3754"/>
<g fill="#2c3754"><ellipse cx="207.5" cy="32.5" rx="0.9" ry="1.6"/><ellipse cx="215.7" cy="31.5" rx="0.8" ry="1.2"/><ellipse cx="228.8" cy="38.7" rx="1.1" ry="2" transform="rotate(-20 228.8 38.7)"/><ellipse cx="240.7" cy="36.3" rx="1.3" ry="3" transform="rotate(-30 240.7 36.3)"/><ellipse cx="252.7" cy="50.6" rx="1.1" ry="2.6" transform="rotate(15 252.7 50.6)"/><ellipse cx="251.5" cy="57.8" rx="1" ry="1.8"/><ellipse cx="224" cy="43.4" rx="0.7" ry="1.4"/><ellipse cx="264" cy="26" rx="0.8" ry="2.2" transform="rotate(-35 264 26)"/><ellipse cx="270" cy="34" rx="1" ry="2.4" transform="rotate(-35 270 34)"/><path d="M599 41 l2 3 l-1 1z"/><path d="M630 45 l4 2 l-1 3 l-3 -1z" fill="none" stroke="#2c3754" stroke-width="0.8"/></g>
<ellipse cx="252" cy="130" rx="22" ry="20" fill="none" stroke="#36425f" stroke-width="0.6" opacity="0.8"/><path d="M238 152 Q245 140 250 142 Q246 152 252 155" fill="none" stroke="#2f3a58" stroke-width="1"/>
<path d="M146 150 Q152 160 159 162 Q166 160 174 160 Q183 163 193 165 Q205 170 216 172" fill="none" stroke="#36425f" stroke-width="0.7"/>
<g fill="none" stroke="#2c3652" stroke-width="0.75"><path d="M496 37 Q500 48 504 55 Q512 68 516 79 Q519 88 519 94 Q516 110 521 125"/><path d="M499 61 Q501 80 502 108 Q505 125 510 135"/><path d="M519 76 Q526 95 530 110 Q534 120 537 130 Q536 145 533 160"/><path d="M540 140 Q548 150 545 165 Q550 180 552 190"/></g>
<path d="M678 60 Q688 90 690 120 Q695 150 705 160" fill="none" stroke="#2f3a58" stroke-width="0.7"/>
<path d="M303 276 Q308 262 310.5 251 L313 228 Q314 208 322 202 Q330 199 347 200.5 L362 201.5 Q376 203 390 207.7 Q402 212 419 221 Q430 226 442 221 Q458 212 470 205 Q482 202 491 210 Q496 218 497 232 L500 255 Q502 268 504 276" fill="none" stroke="#2b3655" stroke-width="7" stroke-linejoin="round"/>
<path d="M303 276 Q308 262 310.5 251 L313 228 Q314 212 318 206" fill="none" stroke="#2b3655" stroke-width="9.5"/>
<path d="M380 205 Q402 212 419 221 Q430 226 442 221 Q458 212 470 205 Q482 202 491 210 Q496 218 497 232 L500 255 Q502 268 504 276" fill="none" stroke="#2b3655" stroke-width="8.2" stroke-linejoin="round"/>
<path d="M400 214 Q420 224 432 224" fill="none" stroke="#2b3655" stroke-width="11"/>
<path d="M536 276 L536 250 L535 228 Q536 214 550 210 L563 211 Q575 216 587 228 Q595 233 610 234 L661 233 L706 234 L706 243 L672 245 L639 249.5 L606 249.5 Q590 248 580 241 Q568 232 558 224 Q549 220 547 232 L548 250 L550 276 Z" fill="#2b3655"/>
<g fill="#2b3655"><rect x="586" y="208" width="36" height="6.5"/><rect x="632" y="205" width="72" height="8"/><rect x="520" y="211" width="16" height="4"/><rect x="520" y="222" width="12" height="3"/><rect x="472" y="252" width="24" height="3" transform="rotate(-15 484 253)"/></g>
<g fill="none" stroke="#41b346" stroke-width="1.25" stroke-linejoin="round" stroke-linecap="round">
<polyline points="189.4,16 197.8,32.7 201.3,49.4 204.9,63.7 206.1,82.8 206.7,100 205,116.7 209.3,125 218.9,136.5 222.7,138.4 233.2,149.8 238.9,168.9 243.7,186 246.5,195.6 252.3,201.3 256,206"/>
<polyline points="125.4,88 128.5,91.2 135.7,92.4 147.6,99.5 160.8,100.7 166.7,101.9 169.1,106.7 178.7,101.9 196.7,121.7 198.4,127.6 202.6,132.6 206.5,142.2 214.1,151.7 225.5,161.3 226.5,165 229.4,171.8 223.6,175.6 225.5,180.3 233.2,187 239.8,189.9 246.5,195.6 265,189.9 271.6,194.4"/>
<polyline points="256,206.4 256.6,212.3 257.3,219.5 247.7,221.9 243,224.3 244,231.5 251.5,236.9 264.4,244.4 273,252 285.9,256.2 298.8,270"/>
<polyline points="206.1,94.8 197.8,82.8 188.2,68.5 176.3,61.3 169.1,55.4 165.5,54.2 160.8,60.2 154.8,60.2 152.4,63.7 156,70.9 144,73.3 150,84 138,93.6 128.5,90"/>
<polyline points="206.7,100 235.1,93.3 238.4,90 243.5,86 246.8,91.7 256.8,95 268.5,101.7 276.8,120 278.5,140 280.2,153.4 282.3,156.3"/>
<polyline points="251.3,160 251.3,176.5 255.4,179 262,171.8 271.6,169.4 278.8,165.8 283.5,163.4 290.7,162.2 294.5,166"/>
<polyline points="278.8,130 278.8,153.9 282.3,156.3 291.9,144.3 302.6,139.5 305,134.8 317,134.8 336,142 338.4,147.9 328.9,156.3 320.5,165.8 312.2,171.8 305,177.7"/>
<polyline points="294.5,166 289.5,170.6 295.5,177.7 300.2,184.9 297.9,192 296.7,204 309.8,208.8"/>
<polyline points="313.4,176.5 321.7,187.3 324.1,193.2 322.9,198"/>
<polyline points="271.6,199.2 276.4,204 283.5,202.8 288.3,206.4 295.5,206.4 300.2,208.8 309.8,210 307.4,204"/>
<polyline points="283,16 293,26.7 302.4,32.7 324,54"/>
<polyline points="322.9,198.5 337,197 355,196.5 372,199 390,203 395,203 405,201 412,206.5 420,203 451.4,201.1 471.6,198.5 478.3,193.4 491.8,200.1 512,205.2 538.8,203.5 560,200.1 570.2,200.4 581,205.8 587.4,216.5 600.2,223 613.1,225.1 627,225"/>
<polyline points="456.4,201.8 448,228.7 444.7,240.5 458.1,255.6 468.2,271"/>
<polyline points="536.9,195 538,207.9 540.1,216.5 550.9,225.1 555.2,235.8 557.3,248.7 565.9,255.2 568,271"/>
<polyline points="536.9,195 550.9,191.8"/>
<polyline points="509,121 509,126 516,132 525,140 530,150 532,165 535,180 536.9,195"/>
<polyline points="453.6,141 454.5,150 462,160 466,175 468,190 471,192 475,196 474,200 458,203 455,205 419,207"/>
<polyline points="453.6,141 440,146 419,148 410,158 400,155 394,148"/>
<polyline points="244,231.5 240,238 240.8,245.5 241,257"/>
<polyline points="233.7,229 238,235 240,245"/>
<polyline points="223.6,262 228,268 241,257 252,262 262,270"/>
<polyline points="405,31 418,34 432,30 440,33"/>
</g>
<polyline points="254.9,181.3 268,177.7 269.2,180.1 272.8,189.7 276.4,198 282.3,201.6 297.9,206.4 301.4,212.3 302.6,230 304.4,240 306.3,248.7 313.8,248.7 310.6,263.7 309,270" fill="none" stroke="#b9c0cc" stroke-width="0.9"/>
<g><rect x="152.5" y="52.5" width="8" height="7" rx="0.4" fill="#46b049"/><path d="M155.2 59.4 L156.5 60.9 L157.8 59.4 Z" fill="#46b049"/><text x="156.5" y="57.2" font-size="3.2" fill="#fff" text-anchor="middle" font-family="Liberation Sans">15</text></g>
<g><rect x="121.5" y="83.0" width="8" height="7" rx="0.4" fill="#46b049"/><path d="M124.2 89.9 L125.5 91.4 L126.8 89.9 Z" fill="#46b049"/><text x="125.5" y="87.7" font-size="3.2" fill="#fff" text-anchor="middle" font-family="Liberation Sans">16</text></g>
<g><rect x="239.5" y="79.5" width="8" height="7" rx="0.4" fill="#46b049"/><path d="M242.2 86.4 L243.5 87.9 L244.8 86.4 Z" fill="#46b049"/><text x="243.5" y="84.2" font-size="3.2" fill="#fff" text-anchor="middle" font-family="Liberation Sans">14</text></g>
<g><rect x="193.5" y="123.5" width="8" height="7" rx="0.4" fill="#46b049"/><path d="M196.2 130.4 L197.5 131.9 L198.8 130.4 Z" fill="#46b049"/><text x="197.5" y="128.2" font-size="3.2" fill="#fff" text-anchor="middle" font-family="Liberation Sans">17</text></g>
<g><rect x="222.5" y="162.5" width="8" height="7" rx="0.4" fill="#46b049"/><path d="M225.2 169.4 L226.5 170.9 L227.8 169.4 Z" fill="#46b049"/><text x="226.5" y="167.2" font-size="3.2" fill="#fff" text-anchor="middle" font-family="Liberation Sans">18</text></g>
<g><rect x="287.3" y="139.0" width="8" height="7" rx="0.4" fill="#46b049"/><path d="M290.0 145.9 L291.3 147.4 L292.6 145.9 Z" fill="#46b049"/><text x="291.3" y="143.7" font-size="3.2" fill="#fff" text-anchor="middle" font-family="Liberation Sans">13</text></g>
<g><rect x="300.5" y="127.80000000000001" width="8" height="7" rx="0.4" fill="#46b049"/><path d="M303.2 134.70000000000002 L304.5 136.20000000000002 L305.8 134.70000000000002 Z" fill="#46b049"/><text x="304.5" y="132.5" font-size="3.2" fill="#fff" text-anchor="middle" font-family="Liberation Sans">12</text></g>
<g><rect x="270" y="159.5" width="8" height="7" rx="0.4" fill="#46b049"/><path d="M272.7 166.4 L274 167.9 L275.3 166.4 Z" fill="#46b049"/><text x="274" y="164.2" font-size="3.2" fill="#fff" text-anchor="middle" font-family="Liberation Sans">35</text></g>
<g><rect x="290.5" y="159.5" width="8" height="7" rx="0.4" fill="#46b049"/><path d="M293.2 166.4 L294.5 167.9 L295.8 166.4 Z" fill="#46b049"/><text x="294.5" y="164.2" font-size="3.2" fill="#fff" text-anchor="middle" font-family="Liberation Sans">34</text></g>
<g><rect x="316.5" y="156.0" width="8" height="7" rx="0.4" fill="#46b049"/><path d="M319.2 162.9 L320.5 164.4 L321.8 162.9 Z" fill="#46b049"/><text x="320.5" y="160.7" font-size="3.2" fill="#fff" text-anchor="middle" font-family="Liberation Sans">22</text></g>
<g><rect x="249.8" y="152.0" width="8" height="7" rx="0.4" fill="#46b049"/><path d="M252.5 158.9 L253.8 160.4 L255.10000000000002 158.9 Z" fill="#46b049"/><text x="253.8" y="156.7" font-size="3.2" fill="#fff" text-anchor="middle" font-family="Liberation Sans">36</text></g>
<g><rect x="249.1" y="157.5" width="8" height="7" rx="0.4" fill="#46b049"/><path d="M251.79999999999998 164.4 L253.1 165.9 L254.4 164.4 Z" fill="#46b049"/><text x="253.1" y="162.2" font-size="3.2" fill="#fff" text-anchor="middle" font-family="Liberation Sans">37</text></g>
<g><rect x="251.5" y="172.3" width="8" height="7" rx="0.4" fill="#46b049"/><path d="M254.2 179.20000000000002 L255.5 180.70000000000002 L256.8 179.20000000000002 Z" fill="#46b049"/><text x="255.5" y="177.0" font-size="3.2" fill="#fff" text-anchor="middle" font-family="Liberation Sans">38</text></g>
<g><rect x="270.7" y="193.2" width="8" height="7" rx="0.4" fill="#46b049"/><path d="M273.4 200.1 L274.7 201.6 L276.0 200.1 Z" fill="#46b049"/><text x="274.7" y="197.89999999999998" font-size="3.2" fill="#fff" text-anchor="middle" font-family="Liberation Sans">19</text></g>
<g><rect x="283.5" y="194.0" width="8" height="7" rx="0.4" fill="#46b049"/><path d="M286.2 200.9 L287.5 202.4 L288.8 200.9 Z" fill="#46b049"/><text x="287.5" y="198.7" font-size="3.2" fill="#fff" text-anchor="middle" font-family="Liberation Sans">20</text></g>
<g><rect x="301.8" y="197.7" width="8" height="7" rx="0.4" fill="#46b049"/><path d="M304.5 204.6 L305.8 206.1 L307.1 204.6 Z" fill="#46b049"/><text x="305.8" y="202.39999999999998" font-size="3.2" fill="#fff" text-anchor="middle" font-family="Liberation Sans">21</text></g>
<g><rect x="252.3" y="203.8" width="8" height="7" rx="0.4" fill="#46b049"/><path d="M255.0 210.70000000000002 L256.3 212.20000000000002 L257.6 210.70000000000002 Z" fill="#46b049"/><text x="256.3" y="208.5" font-size="3.2" fill="#fff" text-anchor="middle" font-family="Liberation Sans">6</text></g>
<g><rect x="229.7" y="222.7" width="8" height="7" rx="0.4" fill="#46b049"/><path d="M232.39999999999998 229.6 L233.7 231.1 L235.0 229.6 Z" fill="#46b049"/><text x="233.7" y="227.39999999999998" font-size="3.2" fill="#fff" text-anchor="middle" font-family="Liberation Sans">5</text></g>
<g><rect x="239.6" y="221.5" width="8" height="7" rx="0.4" fill="#46b049"/><path d="M242.29999999999998 228.4 L243.6 229.9 L244.9 228.4 Z" fill="#46b049"/><text x="243.6" y="226.2" font-size="3.2" fill="#fff" text-anchor="middle" font-family="Liberation Sans">2</text></g>
<g><rect x="236.8" y="242.0" width="8" height="7" rx="0.4" fill="#46b049"/><path d="M239.5 248.9 L240.8 250.4 L242.10000000000002 248.9 Z" fill="#46b049"/><text x="240.8" y="246.7" font-size="3.2" fill="#fff" text-anchor="middle" font-family="Liberation Sans">3</text></g>
<g><rect x="219.6" y="255.5" width="8" height="7" rx="0.4" fill="#46b049"/><path d="M222.29999999999998 262.4 L223.6 263.9 L224.9 262.4 Z" fill="#46b049"/><text x="223.6" y="260.2" font-size="3.2" fill="#fff" text-anchor="middle" font-family="Liberation Sans">4</text></g>
<g><rect x="390" y="141.5" width="8" height="7" rx="0.4" fill="#46b049"/><path d="M392.7 148.4 L394 149.9 L395.3 148.4 Z" fill="#46b049"/><text x="394" y="146.2" font-size="3.2" fill="#fff" text-anchor="middle" font-family="Liberation Sans">28</text></g>
<g><rect x="505" y="115.5" width="8" height="7" rx="0.4" fill="#46b049"/><path d="M507.7 122.4 L509 123.9 L510.3 122.4 Z" fill="#46b049"/><text x="509" y="120.2" font-size="3.2" fill="#fff" text-anchor="middle" font-family="Liberation Sans">32</text></g>
<g><rect x="623" y="220.5" width="8" height="7" rx="0.4" fill="#46b049"/><path d="M625.7 227.4 L627 228.9 L628.3 227.4 Z" fill="#46b049"/><text x="627" y="225.2" font-size="3.2" fill="#fff" text-anchor="middle" font-family="Liberation Sans">33</text></g>
<g><rect x="553.5" y="256.5" width="8" height="7" rx="0.4" fill="#46b049"/><path d="M556.2 263.4 L557.5 264.9 L558.8 263.4 Z" fill="#46b049"/><text x="557.5" y="261.2" font-size="3.2" fill="#fff" text-anchor="middle" font-family="Liberation Sans">31</text></g>
<g><path d="M298.6 176.9 A3.4 3.4 0 1 1 305.4 176.9 Q305 179.9 302 184.9 Q299 179.9 298.6 176.9 Z" fill="#1ea3e0"/><text x="302" y="178.0" font-size="2.4" fill="#fff" text-anchor="middle" font-family="Liberation Sans">23</text></g>
<g><path d="M311.1 239.5 A3.4 3.4 0 1 1 317.9 239.5 Q317.5 242.5 314.5 247.5 Q311.5 242.5 311.1 239.5 Z" fill="#1ea3e0"/><text x="314.5" y="240.6" font-size="2.4" fill="#fff" text-anchor="middle" font-family="Liberation Sans">29</text></g>
<g><path d="M233.1 220.3 A3.4 3.4 0 1 1 239.9 220.3 Q239.5 223.3 236.5 228.3 Q233.5 223.3 233.1 220.3 Z" fill="#1ea3e0"/><text x="236.5" y="221.4" font-size="2.4" fill="#fff" text-anchor="middle" font-family="Liberation Sans">27</text></g>
<circle cx="241.2" cy="257.3" r="2" fill="#e8523f"/><circle cx="606.5" cy="80.5" r="2.2" fill="#e8523f"/>
<g font-family="Liberation Sans" fill="#ffffff">
<text x="186.7" y="54.8" font-size="5.28">Hampstead</text>
<text x="153.6" y="101.6" font-size="5.0">Kilburn</text>
<text x="260.7" y="100.5" font-size="5.18">Camden Town</text>
<text x="146.2" y="237.3" font-size="5.4">Kensington</text>
<text x="263.7" y="243.3" font-size="6.0">Westminster</text>
<text x="353" y="184.7" font-size="5.43">City of London</text>
<text x="544.6" y="105.4" font-size="5.6">Stratford</text>
<text x="650.3" y="130.3" font-size="4.94">East Ham</text>
<text x="686" y="49.7" font-size="5.6">Ilford</text>
<text x="119.6" y="260.5" font-size="5.0">nith</text>
<text x="119.3" y="214.5" font-size="5.0">d's</text>
</g><g font-family="Liberation Sans" fill="#e8ecf2" font-size="2.7" text-anchor="middle">
<text x="229" y="216.3">Hyde Park</text>
<text x="233.5" y="115">Primrose Hill</text>
<text x="248.5" y="128">London Zoo</text>
<text x="402" y="213">Tower of London</text>
<text x="393.7" y="193">20 St Mary Axe</text>
<text x="626" y="212.3">ExCeL London</text>
<text x="629" y="170.2">Newham University</text>
<text x="629" y="175">Hospital</text>
<text x="520.5" y="94.5">Queen Elizabeth</text>
<text x="520.5" y="98.8">Olympic Park</text>
<text x="472.7" y="161.2">Bow Mary</text>
<text x="426.2" y="198.4">Cable St</text>
</g><g font-family="Liberation Sans" fill="#ffffff" font-size="3.45" font-weight="bold"><text x="641" y="224">London City Airport</text></g>
<g font-family="Liberation Sans" fill="#9aa6be" font-size="2.9" letter-spacing="0.6" text-anchor="middle">
<text x="132.7" y="23.7">ELEWOOD</text>
<text x="134" y="53.5">LEWOOD</text>
<text x="174.2" y="69.5">WEST</text>
<text x="174.2" y="73.4">HAMPSTEAD</text>
<text x="220.5" y="80.9">BELSIZE</text>
<text x="220.7" y="85.6">PARK</text>
<text x="253.5" y="61.3">GOSPEL</text>
<text x="253.5" y="65.7">OAK</text>
<text x="270" y="72">KENTISH</text>
<text x="270" y="76.5">TOWN</text>
<text x="176.3" y="145.9">MAIDA VALE</text>
<text x="199.1" y="181.6">PADDINGTON</text>
<text x="181.6" y="193.9">BAYSWATER</text>
<text x="146.5" y="196">NOTTING</text>
<text x="146.5" y="200.6">HILL</text>
<text x="166" y="260.6">COURT</text>
<text x="199.7" y="259.1">EXHIBITION</text>
<text x="254" y="239">BELGRAVIA</text>
<text x="303.4" y="232.2">WESTMINSTER</text>
<text x="335.6" y="205.3">SOUTH</text>
<text x="335.6" y="209.8">BANK</text>
<text x="347.4" y="224">SOUTHWARK</text>
<text x="336.7" y="192.2">TEMPLE</text>
<text x="347" y="158.5">CLERKENWELL</text>
<text x="372" y="164">FINSBURY</text>
<text x="430.5" y="174.5">WHITECHAPEL</text>
<text x="458.4" y="178">STEPNEY</text>
<text x="482.2" y="191.2">LIMEHOUSE</text>
<text x="524" y="197.7">POPLAR</text>
<text x="541.9" y="212.8">BLACKWALL</text>
<text x="483.4" y="154">MILE END</text>
<text x="513.3" y="143.3">BOW</text>
<text x="435.7" y="215.2">WAPPING</text>
<text x="430.9" y="242.6">BERMONDSEY</text>
<text x="464.3" y="254.5">SURREY</text>
<text x="464.3" y="259.3">QUAYS</text>
<text x="515.7" y="215.2">CANARY</text>
<text x="515.7" y="219.9">WHARF</text>
<text x="518" y="237.8">ISLE OF</text>
<text x="518" y="242.1">DOGS</text>
<text x="578.9" y="173.4">CANNING</text>
<text x="578.9" y="178.1">TOWN</text>
<text x="669.6" y="182.2">BECKTON</text>
<text x="685" y="204.4">CYPRUS</text>
<text x="677.9" y="229.5">NORTH</text>
<text x="677.9" y="234.2">WOOLWICH</text>
<text x="626.6" y="255.7">NEW</text>
<text x="626.6" y="261.2">CHARLTON</text>
<text x="601.5" y="74.3">FOREST</text>
<text x="601.5" y="78.6">GATE</text>
<text x="645.7" y="70.7">MANOR</text>
<text x="645.7" y="75.5">PARK</text>
<text x="674.3" y="71.4">LITTLE</text>
<text x="674.3" y="76.2">ILFORD</text>
<text x="620.6" y="114.2">UPTON</text>
<text x="620.6" y="118.9">PARK</text>
<text x="568.1" y="124.4">WEST HAM</text>
<text x="601.5" y="140.4">PLAISTOW</text>
<text x="618.2" y="30.1">ALDERSBROOK</text>
<text x="336" y="27.7">FINSBURY</text>
<text x="336" y="32.5">PARK</text>
<text x="288" y="27">UPPER</text>
<text x="288" y="31.3">HOLLOWAY</text>
</g>
</svg>
<svg class="a" style="left:0;top:27px" width="6" height="18" viewBox="0 0 6 18"><path d="M0 0 L3.5 0 L5.6 2.5 L5.6 14.5 L3.5 17 L0 17 Z" fill="#fff"/><path d="M3 7.2 L1.8 8.5 L3 9.8" stroke="#666" stroke-width="0.45" fill="none"/></svg>
<svg class="a" style="left:581px;top:27.4px" width="6" height="18" viewBox="0 0 6 18"><path d="M6 0 L2.1 0 L0 2.5 L0 14.5 L2.1 17 L6 17 Z" fill="#fff"/><path d="M2.6 7.2 L3.8 8.5 L2.6 9.8" stroke="#666" stroke-width="0.45" fill="none"/></svg>
<svg class="a" style="left:301px;top:247.5px" width="22" height="7" viewBox="420 263.5 22 7"><path d="M424.5 264.4 L437.5 264.4 L440.5 270 L421.5 270 Z" fill="#fff" stroke="#16325a" stroke-width="0.5"/><path d="M429.8 266.8 L431 268 L432.2 266.8" stroke="#555" stroke-width="0.4" fill="none"/></svg>
<div class="a" style="left:0;top:253.10000000000002px;width:586.5px;height:0.45px;background:#1d3050"></div>
<div class="a" style="left:13px;top:227.0px;width:76.5px;height:14.4px;background:#1bb2e4;border-radius:1px"></div>
<svg class="a" style="left:16px;top:230.0px" width="9" height="9" viewBox="0 0 9 9"><g fill="none" stroke="#fff" stroke-width="0.5"><circle cx="2.2" cy="2.2" r="1.4"/><circle cx="6.8" cy="2.2" r="1.4"/><circle cx="2.2" cy="6.8" r="1.4"/><circle cx="6.8" cy="6.8" r="1.4"/><path d="M3.4 3 L5.6 6 M5.6 3 L3.4 6"/></g></svg>
<div class="a" style="left:26.80000000000001px;top:228.5px;width:0.35px;height:11.5px;background:#7fd6f2"></div>
<div class="t" style="left:40px;top:232.0px;font-size:4.3px;color:#fff;font-weight:bold">REOPTIMIZE</div>
<div class="t" style="left:69.5px;top:232.2px;font-size:3.8px;color:#e6f7fd">7 days</div>
<div class="a" style="left:571px;top:201.7px;width:9.4px;height:27.3px;background:#fff;border-radius:1px"></div>
<svg class="a" style="left:571px;top:201.7px" width="10" height="28" viewBox="0 0 10 28"><rect x="2.7" y="4.15" width="4" height="0.7" fill="#333"/><rect x="4.35" y="2.5" width="0.7" height="4" fill="#333"/><rect x="2.7" y="13.15" width="4" height="0.7" fill="#333"/><path d="M0.5 9 H9 M0.5 18 H9" stroke="#ddd" stroke-width="0.3"/><path d="M4.7 20.5 L5.6 23.5 L4.7 23 L3.8 23.5 Z" fill="#888"/></svg>
<svg class="a" style="left:573px;top:235.3px" width="8" height="8" viewBox="0 0 8 8"><circle cx="3.6" cy="3.6" r="3" fill="#fff"/><circle cx="3.6" cy="3.6" r="2.2" fill="#222"/><path d="M3.6 2.8 V5.2" stroke="#fff" stroke-width="0.6"/><circle cx="3.6" cy="1.9" r="0.35" fill="#fff"/></svg>
<svg class="a" style="left:553.5px;top:245.3px" width="30" height="7" viewBox="0 0 30 7"><circle cx="2.6" cy="3" r="2.3" fill="#fff"/><circle cx="2.6" cy="3" r="1.1" fill="#47597d"/><text x="5.8" y="4.6" font-size="4.4" fill="#fff" font-family="Liberation Sans" font-weight="bold">mapbox</text></svg>
<div class="t" style="left:0.5px;top:249.0px;font-size:2.8px;color:#b0bac9">pbox</div>
</div><svg class="a" style="left:370px;top:16px" width="336" height="14" viewBox="370 16 336 14"><path d="M456 16 L705.5 16 L705.5 25.7 L452.6 25.7 Z" fill="#0f3556"/><path d="M375.7 16 L455 16 L449.5 29.5 L382 29.5 Z" fill="#fff"/></svg>
<div class="a" style="left:381px;top:15.2px;width:73px;height:14.5px;border:1px solid #e8141b"></div>
<svg class="a" style="left:383px;top:19px" width="70" height="8" viewBox="383 19 70 8"><path d="M386.2 20.3 L384.8 22.5 L386.2 24.7" stroke="#9aa" stroke-width="0.45" fill="none"/><path d="M447.5 20.3 L448.9 22.5 L447.5 24.7" stroke="#9aa" stroke-width="0.45" fill="none"/><rect x="390" y="20.7" width="4.2" height="3.8" fill="none" stroke="#c9ced6" stroke-width="0.45"/><path d="M439.2 22 L440.6 23.3 L442 22" stroke="#8aa0c0" stroke-width="0.45" fill="none"/></svg>
<div class="t" style="left:398.8px;top:20px;font-size:5.3px;color:#555">17 Oct - 23 Oct</div>
<svg class="a" style="left:465px;top:18.5px" width="8" height="7" viewBox="0 0 8 7"><rect x="1.2" y="1.3" width="4.8" height="4.2" fill="none" stroke="#8bc34a" stroke-width="0.5"/><path d="M1.2 2.7 H6 M2.4 0.6 V1.8 M4.8 0.6 V1.8" stroke="#8bc34a" stroke-width="0.45"/><rect x="2" y="3.3" width="3.2" height="1.6" fill="#8bc34a"/></svg>
<div class="t" style="left:474px;top:19.2px;font-size:3.9px;color:#fff">Daily</div>
<svg class="a" style="left:656px;top:18.8px" width="8" height="6" viewBox="0 0 8 6"><path d="M1.2 1 H5.6 V5 H1.2 Z M2.6 1 V5 M4.2 1 V5" fill="none" stroke="#c98b3a" stroke-width="0.35"/></svg>
<div class="t" style="left:665px;top:19.2px;font-size:3.9px;color:#fff">Map Display</div>
<svg class="a" style="left:692px;top:20.2px" width="5" height="3" viewBox="0 0 5 3"><path d="M0.6 0.5 L2.5 2.4 L4.4 0.5 Z" fill="#fff"/></svg>
<div class="a" style="left:322.5px;top:33.8px;width:172.8px;height:107.00000000000001px;background:#fff;border-radius:1px;box-shadow:0 0.5px 2px rgba(0,0,0,0.25)"></div>
<div class="t" style="left:326px;top:38.2px;font-size:4.2px;color:#999">2022-10-17</div>
<div class="t" style="left:376.5px;top:38.2px;font-size:4.2px;color:#999">~</div>
<div class="t" style="left:384px;top:38.2px;font-size:4.2px;color:#999">2022-10-23</div>
<div class="a" style="left:322.5px;top:45px;width:172.8px;height:0.35px;background:#eee"></div>
<div class="a" style="left:322.5px;top:57.2px;width:172.8px;height:0.35px;background:#eee"></div>
<div class="a" style="left:322.5px;top:128.8px;width:172.8px;height:0.35px;background:#eee"></div>
<svg class="a" style="left:324px;top:49px" width="14" height="5" viewBox="0 0 14 5"><path d="M3 0.8 L1.7 2.5 L3 4.2 M4.6 0.8 L3.3 2.5 L4.6 4.2 M10.5 0.8 L9.2 2.5 L10.5 4.2" stroke="#c4c4c4" stroke-width="0.4" fill="none"/></svg>
<svg class="a" style="left:481px;top:49px" width="14" height="5" viewBox="0 0 14 5"><path d="M2.3 0.8 L3.6 2.5 L2.3 4.2 M8.2 0.8 L9.5 2.5 L8.2 4.2 M9.8 0.8 L11.1 2.5 L9.8 4.2" stroke="#c4c4c4" stroke-width="0.4" fill="none"/></svg>
<div class="t" style="left:357px;top:49.6px;font-size:3.9px;color:#333;font-weight:bold">Oct 2022</div>
<div class="t" style="left:442.5px;top:49.6px;font-size:3.9px;color:#333;font-weight:bold">Nov 2022</div>
<div class="t" style="left:327px;width:10px;text-align:center;top:63px;font-size:4px;color:#777">Mo</div>
<div class="t" style="left:413.5px;width:10px;text-align:center;top:63px;font-size:4px;color:#777">Mo</div>
<div class="t" style="left:338.2px;width:10px;text-align:center;top:63px;font-size:4px;color:#777">Tu</div>
<div class="t" style="left:424.6px;width:10px;text-align:center;top:63px;font-size:4px;color:#777">Tu</div>
<div class="t" style="left:349.5px;width:10px;text-align:center;top:63px;font-size:4px;color:#777">We</div>
<div class="t" style="left:435.8px;width:10px;text-align:center;top:63px;font-size:4px;color:#777">We</div>
<div class="t" style="left:360.7px;width:10px;text-align:center;top:63px;font-size:4px;color:#777">Th</div>
<div class="t" style="left:447px;width:10px;text-align:center;top:63px;font-size:4px;color:#777">Th</div>
<div class="t" style="left:372px;width:10px;text-align:center;top:63px;font-size:4px;color:#777">Fr</div>
<div class="t" style="left:458.2px;width:10px;text-align:center;top:63px;font-size:4px;color:#777">Fr</div>
<div class="t" style="left:383.2px;width:10px;text-align:center;top:63px;font-size:4px;color:#777">Sa</div>
<div class="t" style="left:469.4px;width:10px;text-align:center;top:63px;font-size:4px;color:#777">Sa</div>
<div class="t" style="left:394.3px;width:10px;text-align:center;top:63px;font-size:4px;color:#777">Su</div>
<div class="t" style="left:480.6px;width:10px;text-align:center;top:63px;font-size:4px;color:#777">Su</div>
<div class="a" style="left:337.5px;top:99.2px;width:57px;height:7.4px;background:#e6f4ff"></div>
<div class="a" style="left:328px;top:99px;width:8px;height:7.8px;background:#1890ff;border-radius:0.5px"></div>
<div class="a" style="left:395.5px;top:99px;width:8px;height:7.8px;background:#1890ff;border-radius:0.5px"></div>
<div class="a" style="left:350.9px;top:89.5px;width:7.4px;height:7.6px;border:0.45px solid #1890ff;border-radius:0.5px"></div>
<div class="t" style="left:327px;width:10px;text-align:center;top:72.4px;font-size:4.2px;color:#c8c8c8;">26</div>
<div class="t" style="left:338.2px;width:10px;text-align:center;top:72.4px;font-size:4.2px;color:#c8c8c8;">27</div>
<div class="t" style="left:349.5px;width:10px;text-align:center;top:72.4px;font-size:4.2px;color:#c8c8c8;">28</div>
<div class="t" style="left:360.7px;width:10px;text-align:center;top:72.4px;font-size:4.2px;color:#c8c8c8;">29</div>
<div class="t" style="left:372px;width:10px;text-align:center;top:72.4px;font-size:4.2px;color:#c8c8c8;">30</div>
<div class="t" style="left:383.2px;width:10px;text-align:center;top:72.4px;font-size:4.2px;color:#666;">1</div>
<div class="t" style="left:394.3px;width:10px;text-align:center;top:72.4px;font-size:4.2px;color:#666;">2</div>
<div class="t" style="left:327px;width:10px;text-align:center;top:81.9px;font-size:4.2px;color:#666;">3</div>
<div class="t" style="left:338.2px;width:10px;text-align:center;top:81.9px;font-size:4.2px;color:#666;">4</div>
<div class="t" style="left:349.5px;width:10px;text-align:center;top:81.9px;font-size:4.2px;color:#666;">5</div>
<div class="t" style="left:360.7px;width:10px;text-align:center;top:81.9px;font-size:4.2px;color:#666;">6</div>
<div class="t" style="left:372px;width:10px;text-align:center;top:81.9px;font-size:4.2px;color:#666;">7</div>
<div class="t" style="left:383.2px;width:10px;text-align:center;top:81.9px;font-size:4.2px;color:#666;">8</div>
<div class="t" style="left:394.3px;width:10px;text-align:center;top:81.9px;font-size:4.2px;color:#666;">9</div>
<div class="t" style="left:327px;width:10px;text-align:center;top:91.2px;font-size:4.2px;color:#666;">10</div>
<div class="t" style="left:338.2px;width:10px;text-align:center;top:91.2px;font-size:4.2px;color:#666;">11</div>
<div class="t" style="left:349.5px;width:10px;text-align:center;top:91.2px;font-size:4.2px;color:#1890ff;font-weight:bold;">12</div>
<div class="t" style="left:360.7px;width:10px;text-align:center;top:91.2px;font-size:4.2px;color:#666;">13</div>
<div class="t" style="left:372px;width:10px;text-align:center;top:91.2px;font-size:4.2px;color:#666;">14</div>
<div class="t" style="left:383.2px;width:10px;text-align:center;top:91.2px;font-size:4.2px;color:#666;">15</div>
<div class="t" style="left:394.3px;width:10px;text-align:center;top:91.2px;font-size:4.2px;color:#666;">16</div>
<div class="t" style="left:327px;width:10px;text-align:center;top:100.7px;font-size:4.2px;color:#fff;">17</div>
<div class="t" style="left:338.2px;width:10px;text-align:center;top:100.7px;font-size:4.2px;color:#666;">18</div>
<div class="t" style="left:349.5px;width:10px;text-align:center;top:100.7px;font-size:4.2px;color:#666;">19</div>
<div class="t" style="left:360.7px;width:10px;text-align:center;top:100.7px;font-size:4.2px;color:#666;">20</div>
<div class="t" style="left:372px;width:10px;text-align:center;top:100.7px;font-size:4.2px;color:#666;">21</div>
<div class="t" style="left:383.2px;width:10px;text-align:center;top:100.7px;font-size:4.2px;color:#666;">22</div>
<div class="t" style="left:394.3px;width:10px;text-align:center;top:100.7px;font-size:4.2px;color:#fff;">23</div>
<div class="t" style="left:327px;width:10px;text-align:center;top:110.0px;font-size:4.2px;color:#666;">24</div>
<div class="t" style="left:338.2px;width:10px;text-align:center;top:110.0px;font-size:4.2px;color:#666;">25</div>
<div class="t" style="left:349.5px;width:10px;text-align:center;top:110.0px;font-size:4.2px;color:#666;">26</div>
<div class="t" style="left:360.7px;width:10px;text-align:center;top:110.0px;font-size:4.2px;color:#666;">27</div>
<div class="t" style="left:372px;width:10px;text-align:center;top:110.0px;font-size:4.2px;color:#666;">28</div>
<div class="t" style="left:383.2px;width:10px;text-align:center;top:110.0px;font-size:4.2px;color:#666;">29</div>
<div class="t" style="left:394.3px;width:10px;text-align:center;top:110.0px;font-size:4.2px;color:#666;">30</div>
<div class="t" style="left:327px;width:10px;text-align:center;top:119.4px;font-size:4.2px;color:#666;">31</div>
<div class="t" style="left:338.2px;width:10px;text-align:center;top:119.4px;font-size:4.2px;color:#c8c8c8;">1</div>
<div class="t" style="left:349.5px;width:10px;text-align:center;top:119.4px;font-size:4.2px;color:#c8c8c8;">2</div>
<div class="t" style="left:360.7px;width:10px;text-align:center;top:119.4px;font-size:4.2px;color:#c8c8c8;">3</div>
<div class="t" style="left:372px;width:10px;text-align:center;top:119.4px;font-size:4.2px;color:#c8c8c8;">4</div>
<div class="t" style="left:383.2px;width:10px;text-align:center;top:119.4px;font-size:4.2px;color:#c8c8c8;">5</div>
<div class="t" style="left:394.3px;width:10px;text-align:center;top:119.4px;font-size:4.2px;color:#c8c8c8;">6</div>
<div class="t" style="left:413.5px;width:10px;text-align:center;top:72.4px;font-size:4.2px;color:#c8c8c8">31</div>
<div class="t" style="left:424.6px;width:10px;text-align:center;top:72.4px;font-size:4.2px;color:#666">1</div>
<div class="t" style="left:435.8px;width:10px;text-align:center;top:72.4px;font-size:4.2px;color:#666">2</div>
<div class="t" style="left:447px;width:10px;text-align:center;top:72.4px;font-size:4.2px;color:#666">3</div>
<div class="t" style="left:458.2px;width:10px;text-align:center;top:72.4px;font-size:4.2px;color:#666">4</div>
<div class="t" style="left:469.4px;width:10px;text-align:center;top:72.4px;font-size:4.2px;color:#666">5</div>
<div class="t" style="left:480.6px;width:10px;text-align:center;top:72.4px;font-size:4.2px;color:#666">6</div>
<div class="t" style="left:413.5px;width:10px;text-align:center;top:81.9px;font-size:4.2px;color:#666">7</div>
<div class="t" style="left:424.6px;width:10px;text-align:center;top:81.9px;font-size:4.2px;color:#666">8</div>
<div class="t" style="left:435.8px;width:10px;text-align:center;top:81.9px;font-size:4.2px;color:#666">9</div>
<div class="t" style="left:447px;width:10px;text-align:center;top:81.9px;font-size:4.2px;color:#666">10</div>
<div class="t" style="left:458.2px;width:10px;text-align:center;top:81.9px;font-size:4.2px;color:#666">11</div>
<div class="t" style="left:469.4px;width:10px;text-align:center;top:81.9px;font-size:4.2px;color:#666">12</div>
<div class="t" style="left:480.6px;width:10px;text-align:center;top:81.9px;font-size:4.2px;color:#666">13</div>
<div class="t" style="left:413.5px;width:10px;text-align:center;top:91.2px;font-size:4.2px;color:#666">14</div>
<div class="t" style="left:424.6px;width:10px;text-align:center;top:91.2px;font-size:4.2px;color:#666">15</div>
<div class="t" style="left:435.8px;width:10px;text-align:center;top:91.2px;font-size:4.2px;color:#666">16</div>
<div class="t" style="left:447px;width:10px;text-align:center;top:91.2px;font-size:4.2px;color:#666">17</div>
<div class="t" style="left:458.2px;width:10px;text-align:center;top:91.2px;font-size:4.2px;color:#666">18</div>
<div class="t" style="left:469.4px;width:10px;text-align:center;top:91.2px;font-size:4.2px;color:#666">19</div>
<div class="t" style="left:480.6px;width:10px;text-align:center;top:91.2px;font-size:4.2px;color:#666">20</div>
<div class="t" style="left:413.5px;width:10px;text-align:center;top:100.7px;font-size:4.2px;color:#666">21</div>
<div class="t" style="left:424.6px;width:10px;text-align:center;top:100.7px;font-size:4.2px;color:#666">22</div>
<div class="t" style="left:435.8px;width:10px;text-align:center;top:100.7px;font-size:4.2px;color:#666">23</div>
<div class="t" style="left:447px;width:10px;text-align:center;top:100.7px;font-size:4.2px;color:#666">24</div>
<div class="t" style="left:458.2px;width:10px;text-align:center;top:100.7px;font-size:4.2px;color:#666">25</div>
<div class="t" style="left:469.4px;width:10px;text-align:center;top:100.7px;font-size:4.2px;color:#666">26</div>
<div class="t" style="left:480.6px;width:10px;text-align:center;top:100.7px;font-size:4.2px;color:#666">27</div>
<div class="t" style="left:413.5px;width:10px;text-align:center;top:110.0px;font-size:4.2px;color:#666">28</div>
<div class="t" style="left:424.6px;width:10px;text-align:center;top:110.0px;font-size:4.2px;color:#666">29</div>
<div class="t" style="left:435.8px;width:10px;text-align:center;top:110.0px;font-size:4.2px;color:#666">30</div>
<div class="t" style="left:447px;width:10px;text-align:center;top:110.0px;font-size:4.2px;color:#c8c8c8">1</div>
<div class="t" style="left:458.2px;width:10px;text-align:center;top:110.0px;font-size:4.2px;color:#c8c8c8">2</div>
<div class="t" style="left:469.4px;width:10px;text-align:center;top:110.0px;font-size:4.2px;color:#c8c8c8">3</div>
<div class="t" style="left:480.6px;width:10px;text-align:center;top:110.0px;font-size:4.2px;color:#c8c8c8">4</div>
<div class="t" style="left:413.5px;width:10px;text-align:center;top:119.4px;font-size:4.2px;color:#c8c8c8">5</div>
<div class="t" style="left:424.6px;width:10px;text-align:center;top:119.4px;font-size:4.2px;color:#c8c8c8">6</div>
<div class="t" style="left:435.8px;width:10px;text-align:center;top:119.4px;font-size:4.2px;color:#c8c8c8">7</div>
<div class="t" style="left:447px;width:10px;text-align:center;top:119.4px;font-size:4.2px;color:#c8c8c8">8</div>
<div class="t" style="left:458.2px;width:10px;text-align:center;top:119.4px;font-size:4.2px;color:#c8c8c8">9</div>
<div class="t" style="left:469.4px;width:10px;text-align:center;top:119.4px;font-size:4.2px;color:#c8c8c8">10</div>
<div class="t" style="left:480.6px;width:10px;text-align:center;top:119.4px;font-size:4.2px;color:#c8c8c8">11</div>
<div class="a" style="left:326.4px;top:131.6px;width:21.200000000000045px;height:7.1px;background:#e6f4ff;border:0.4px solid #91d5ff;border-radius:0.6px"></div>
<div class="t" style="left:326.4px;width:21.200000000000045px;text-align:center;top:133.4px;font-size:3.5px;color:#40a0f0">This week</div>
<div class="a" style="left:350.2px;top:131.6px;width:22.30000000000001px;height:7.1px;background:#e6f4ff;border:0.4px solid #91d5ff;border-radius:0.6px"></div>
<div class="t" style="left:350.2px;width:22.30000000000001px;text-align:center;top:133.4px;font-size:3.5px;color:#40a0f0">Next week</div>
<div class="a" style="left:375.2px;top:131.6px;width:20.5px;height:7.1px;background:#e6f4ff;border:0.4px solid #91d5ff;border-radius:0.6px"></div>
<div class="t" style="left:375.2px;width:20.5px;text-align:center;top:133.4px;font-size:3.5px;color:#40a0f0">+2 weeks</div>
<div class="a" style="left:398.3px;top:131.6px;width:20.5px;height:7.1px;background:#e6f4ff;border:0.4px solid #91d5ff;border-radius:0.6px"></div>
<div class="t" style="left:398.3px;width:20.5px;text-align:center;top:133.4px;font-size:3.5px;color:#40a0f0">+3 weeks</div><div class="a" style="left:119px;top:269.9px;width:586.5px;height:150px;background:#eef3f7"></div>
<div class="a" style="left:119px;top:269.9px;width:586.5px;height:17px;background:#d9e5ee"></div>
<div class="a" style="left:122.1px;top:275.3px;width:6.5px;height:6.3px;border:0.5px solid #9aa4ae;background:#e9eef2;border-radius:0.5px"></div>
<div class="a" style="left:132.1px;top:274.1px;width:72.9px;height:9.2px;background:#fff;border-radius:0.8px"></div>
<div class="t" style="left:136px;top:276.7px;font-size:4.2px;color:#c3c8cf">Find driver</div>
<div class="a" style="left:211.7px;top:273.5px;width:33.7px;height:10px;background:#fff;border-radius:0.8px"></div>
<svg class="a" style="left:211.7px;top:273.5px" width="34" height="10" viewBox="0 0 34 10"><path d="M3.8 5.2 L5.2 6.6 L7.8 3.4" stroke="#f5b24d" stroke-width="0.7" fill="none"/><g fill="none" stroke="#5aa9e6" stroke-width="0.45"><circle cx="15.4" cy="3.6" r="1.1"/><circle cx="18.2" cy="3.6" r="1.1"/><circle cx="15.4" cy="6.4" r="1.1"/><circle cx="18.2" cy="6.4" r="1.1"/></g><g fill="none" stroke="#8a8f98" stroke-width="0.45"><circle cx="26.9" cy="3.6" r="1.1"/><circle cx="29.7" cy="3.6" r="1.1"/><circle cx="26.9" cy="6.4" r="1.1"/><circle cx="29.7" cy="6.4" r="1.1"/></g></svg>
<div class="a" style="left:252.1px;top:273.5px;width:11px;height:10px;background:#fff;border-radius:0.8px"></div>
<svg class="a" style="left:252.1px;top:273.5px" width="11" height="10" viewBox="0 0 11 10"><path d="M7.5 3.2 A2.4 2.4 0 1 0 7.8 6" fill="none" stroke="#a05cc8" stroke-width="0.5"/><path d="M7.7 2.2 V3.6 H6.3" fill="none" stroke="#a05cc8" stroke-width="0.5"/></svg>
<div class="t" style="left:269.2px;top:276.2px;font-size:4.3px;color:#8a929c">Drivers</div>
<div class="a" style="left:286.1px;top:273.5px;width:22.3px;height:10px;background:#fff;border-radius:0.8px"></div>
<svg class="a" style="left:286.1px;top:273.5px" width="23" height="10" viewBox="0 0 23 10"><path d="M3.6 5.2 L5 6.6 L7.6 3.4" stroke="#66c06a" stroke-width="0.7" fill="none"/><path d="M15.3 3.4 L18.3 6.4 M18.3 3.4 L15.3 6.4" stroke="#f06a6a" stroke-width="0.7"/></svg>
<div class="t" style="left:314.9px;top:276.2px;font-size:4.3px;color:#8a929c">Routes</div>
<div class="a" style="left:332px;top:273.5px;width:33.4px;height:10px;background:#fff;border-radius:0.8px"></div>
<svg class="a" style="left:332px;top:273.5px" width="34" height="10" viewBox="0 0 34 10"><g fill="none" stroke-width="0.45"><rect x="3.9" y="4.6" width="3.6" height="3" stroke="#f3a77a"/><path d="M4.6 4.6 V3.4 A1.1 1.1 0 0 1 6.8 3.4 V4.6" stroke="#f3a77a"/><rect x="15" y="4.6" width="3.6" height="3" stroke="#48c9e4"/><path d="M15.7 4.6 V3.4 A1.1 1.1 0 0 1 17.9 3.4" stroke="#48c9e4"/></g><path d="M26.6 3.4 L29.6 6.4 M29.6 3.4 L26.6 6.4" stroke="#f06a6a" stroke-width="0.7"/></svg>
<div class="a" style="left:668.5px;top:273.8px;width:33.5px;height:9px;background:#fff;border-radius:0.8px"></div>
<div class="a" style="left:693.5px;top:273.8px;width:0.35px;height:9px;background:#e5e8ec"></div>
<div class="t" style="left:673px;top:276.4px;font-size:4.4px;color:#999">Exports</div>
<svg class="a" style="left:695.5px;top:276.5px" width="5" height="4" viewBox="0 0 5 4"><path d="M0.8 1 L2.3 2.5 L3.8 1" stroke="#999" stroke-width="0.45" fill="none"/></svg>
<div class="a" style="left:119px;top:286.9px;width:78.5px;height:15.3px;background:#f0f4f8"></div><div class="a" style="left:197.5px;top:286.9px;width:508px;height:15.3px;background:#fff"></div>
<div class="a" style="left:119px;top:302.2px;width:586.5px;height:94.2px;background:#fff"></div>
<div class="a" style="left:126.2px;top:290.7px;width:25.3px;height:7.6px;background:#fff;border-radius:0.8px;border:0.35px solid #e8ecef"></div>
<div class="a" style="left:164.8px;top:290.7px;width:25.3px;height:7.6px;background:#fff;border-radius:0.8px;border:0.35px solid #e8ecef"></div>
<svg class="a" style="left:119px;top:286.9px" width="80" height="16" viewBox="0 0 80 16"><circle cx="13.4" cy="7.6" r="2.6" fill="#52c41a"/><path d="M12.5 7.8 L13.3 8.5 L14.6 7" stroke="#fff" stroke-width="0.45" fill="none"/><circle cx="26.3" cy="7.6" r="2.4" fill="none" stroke="#8fd66a" stroke-width="0.45"/><path d="M42.6 4.3 L36 10.6" stroke="#c6ccd3" stroke-width="0.4"/><circle cx="52.4" cy="7.6" r="2.6" fill="#faad14"/><path d="M51.5 7.8 L52.3 8.5 L53.6 7" stroke="#fff" stroke-width="0.45" fill="none"/><circle cx="65.2" cy="7.6" r="2.4" fill="none" stroke="#f9c46a" stroke-width="0.45"/><path d="M23.3 3.5 V11.5 M40.5 3.5 V11.5 M62.3 3.5 V11.5" stroke="#eaeef1" stroke-width="0"/></svg>
<div class="a" style="left:138.8px;top:291px;width:0.3px;height:7px;background:#e8ecef"></div>
<div class="a" style="left:177.4px;top:291px;width:0.3px;height:7px;background:#e8ecef"></div>
<div class="a" style="left:231.3px;top:289px;width:4.8px;height:4.7px;border:0.4px solid #c9ced5;border-radius:0.4px;background:#fff"></div>
<div class="t" style="left:197.5px;width:72.6px;text-align:center;top:295.8px;font-size:4.46px;color:#222;-webkit-text-stroke:0.08px #222">Oct 17 (Mon)</div>
<div class="a" style="left:303.88px;top:289px;width:4.8px;height:4.7px;border:0.4px solid #c9ced5;border-radius:0.4px;background:#fff"></div>
<div class="t" style="left:270.08px;width:72.6px;text-align:center;top:295.8px;font-size:4.46px;color:#222;-webkit-text-stroke:0.08px #222">Oct 18 (Tue)</div>
<div class="a" style="left:376.46px;top:289px;width:4.8px;height:4.7px;border:0.4px solid #c9ced5;border-radius:0.4px;background:#fff"></div>
<div class="t" style="left:342.65999999999997px;width:72.6px;text-align:center;top:295.8px;font-size:4.46px;color:#222;-webkit-text-stroke:0.08px #222">Oct 19 (Wed)</div>
<div class="a" style="left:449.04px;top:289px;width:4.8px;height:4.7px;border:0.4px solid #c9ced5;border-radius:0.4px;background:#fff"></div>
<div class="t" style="left:415.24px;width:72.6px;text-align:center;top:295.8px;font-size:4.46px;color:#222;-webkit-text-stroke:0.08px #222">Oct 20 (Thu)</div>
<div class="a" style="left:521.62px;top:289px;width:4.8px;height:4.7px;border:0.4px solid #c9ced5;border-radius:0.4px;background:#fff"></div>
<div class="t" style="left:487.82px;width:72.6px;text-align:center;top:295.8px;font-size:4.46px;color:#222;-webkit-text-stroke:0.08px #222">Oct 21 (Fri)</div>
<div class="a" style="left:594.1999999999999px;top:289px;width:4.8px;height:4.7px;border:0.4px solid #c9ced5;border-radius:0.4px;background:#fff"></div>
<div class="t" style="left:560.4px;width:72.6px;text-align:center;top:295.8px;font-size:4.46px;color:#222;-webkit-text-stroke:0.08px #222">Oct 22 (Sat)</div>
<div class="a" style="left:666.78px;top:289px;width:4.8px;height:4.7px;border:0.4px solid #c9ced5;border-radius:0.4px;background:#fff"></div>
<div class="t" style="left:632.98px;width:72.6px;text-align:center;top:295.8px;font-size:4.46px;color:#222;-webkit-text-stroke:0.08px #222">Oct 23 (Sun)</div>
<div class="a" style="left:197.3px;top:286.9px;width:0.45px;height:109.5px;background:#dfe4ea"></div>
<div class="a" style="left:269.88px;top:286.9px;width:0.45px;height:109.5px;background:#dfe4ea"></div>
<div class="a" style="left:342.46px;top:286.9px;width:0.45px;height:109.5px;background:#dfe4ea"></div>
<div class="a" style="left:415.04px;top:286.9px;width:0.45px;height:109.5px;background:#dfe4ea"></div>
<div class="a" style="left:487.62px;top:286.9px;width:0.45px;height:109.5px;background:#dfe4ea"></div>
<div class="a" style="left:560.1999999999999px;top:286.9px;width:0.45px;height:109.5px;background:#dfe4ea"></div>
<div class="a" style="left:632.78px;top:286.9px;width:0.45px;height:109.5px;background:#dfe4ea"></div>
<div class="a" style="left:119px;top:302px;width:586.5px;height:0.45px;background:#dfe4ea"></div>
<div class="a" style="left:119px;top:311.42px;width:586.5px;height:0.6px;background:#e6ebf0"></div>
<div class="a" style="left:119px;top:320.84px;width:586.5px;height:0.6px;background:#e6ebf0"></div>
<div class="a" style="left:119px;top:330.26px;width:586.5px;height:0.6px;background:#e6ebf0"></div>
<div class="a" style="left:119px;top:339.68px;width:586.5px;height:0.6px;background:#e6ebf0"></div>
<div class="a" style="left:119px;top:349.1px;width:586.5px;height:0.6px;background:#e6ebf0"></div>
<div class="a" style="left:119px;top:358.52px;width:586.5px;height:0.6px;background:#e6ebf0"></div>
<div class="a" style="left:119px;top:367.94px;width:586.5px;height:0.6px;background:#e6ebf0"></div>
<div class="a" style="left:119px;top:377.36px;width:586.5px;height:0.6px;background:#e6ebf0"></div>
<div class="a" style="left:119px;top:386.78000000000003px;width:586.5px;height:0.6px;background:#e6ebf0"></div>
<div class="a" style="left:119px;top:396.2px;width:586.5px;height:0.6px;background:#e6ebf0"></div>
<div class="a" style="left:122px;top:305.20000000000005px;width:5px;height:4.8px;border:0.4px solid #dadfe5;border-radius:0.5px"></div>
<div class="t" style="left:130.3px;top:305.5px;font-size:4.11px;color:#7d838c">Driver - 0</div>
<div class="a" style="left:122px;top:314.62000000000006px;width:5px;height:4.8px;border:0.4px solid #dadfe5;border-radius:0.5px"></div>
<div class="t" style="left:130.3px;top:314.92px;font-size:4.11px;color:#7d838c">Driver - 1</div>
<div class="a" style="left:122px;top:324.04px;width:5px;height:4.8px;border:0.4px solid #dadfe5;border-radius:0.5px"></div>
<div class="t" style="left:130.3px;top:324.34px;font-size:4.11px;color:#7d838c">Driver - 2</div>
<div class="a" style="left:122px;top:333.46000000000004px;width:5px;height:4.8px;border:0.4px solid #dadfe5;border-radius:0.5px"></div>
<div class="t" style="left:130.3px;top:333.76px;font-size:4.11px;color:#7d838c">Driver - 3</div>
<div class="a" style="left:122px;top:342.88000000000005px;width:5px;height:4.8px;border:0.4px solid #dadfe5;border-radius:0.5px"></div>
<div class="t" style="left:130.3px;top:343.18px;font-size:4.11px;color:#7d838c">Driver - 4</div>
<div class="a" style="left:122px;top:352.30000000000007px;width:5px;height:4.8px;border:0.4px solid #dadfe5;border-radius:0.5px"></div>
<div class="t" style="left:130.3px;top:352.6px;font-size:4.11px;color:#7d838c">Driver - 5</div>
<div class="a" style="left:122px;top:361.72px;width:5px;height:4.8px;border:0.4px solid #dadfe5;border-radius:0.5px"></div>
<div class="t" style="left:130.3px;top:362.02px;font-size:4.11px;color:#7d838c">Driver - 6</div>
<div class="a" style="left:122px;top:371.14000000000004px;width:5px;height:4.8px;border:0.4px solid #dadfe5;border-radius:0.5px"></div>
<div class="t" style="left:130.3px;top:371.44px;font-size:4.11px;color:#7d838c">Driver - 7</div>
<div class="a" style="left:122px;top:380.56000000000006px;width:5px;height:4.8px;border:0.4px solid #dadfe5;border-radius:0.5px"></div>
<div class="t" style="left:130.3px;top:380.86px;font-size:4.11px;color:#7d838c">Driver - 8</div>
<div class="a" style="left:122px;top:389.98px;width:5px;height:4.8px;border:0.4px solid #dadfe5;border-radius:0.5px"></div>
<div class="t" style="left:130.3px;top:390.28px;font-size:4.11px;color:#7d838c">Driver - 9</div>
<svg class="a" style="left:218.5px;top:304.8px" width="6" height="6" viewBox="0 0 6 6"><circle cx="2.6" cy="2.8" r="1.9" fill="none" stroke="#b4bac2" stroke-width="0.4"/><path d="M2.6 1.8 V2.9 L3.3 3.4" fill="none" stroke="#b4bac2" stroke-width="0.35"/></svg>
<div class="a" style="left:225.0px;top:305.0px;width:25.6px;height:5.3px;background:#fff5c5;border:0.4px solid #ffe8a0;border-radius:0.6px;overflow:hidden"><div class="a" style="left:0;top:0;width:8.96px;height:100%;background:#fbbf16"></div></div>
<div class="t" style="left:225.0px;width:25.6px;text-align:center;top:306.3px;font-size:2.7px;color:#333">35%</div>
<svg class="a" style="left:218.5px;top:314.22px" width="6" height="6" viewBox="0 0 6 6"><circle cx="2.6" cy="2.8" r="1.9" fill="none" stroke="#b4bac2" stroke-width="0.4"/><path d="M2.6 1.8 V2.9 L3.3 3.4" fill="none" stroke="#b4bac2" stroke-width="0.35"/></svg>
<div class="a" style="left:225.0px;top:314.42px;width:25.6px;height:5.3px;background:#e3f7fd;border:0.4px solid #8ad8f2;border-radius:0.6px;overflow:hidden"><div class="a" style="left:0;top:0;width:19.968000000000004px;height:100%;background:#16afe2"></div></div>
<div class="t" style="left:225.0px;width:25.6px;text-align:center;top:315.72px;font-size:2.7px;color:#333">78%</div>
<svg class="a" style="left:218.5px;top:323.64px" width="6" height="6" viewBox="0 0 6 6"><circle cx="2.6" cy="2.8" r="1.9" fill="none" stroke="#b4bac2" stroke-width="0.4"/><path d="M2.6 1.8 V2.9 L3.3 3.4" fill="none" stroke="#b4bac2" stroke-width="0.35"/></svg>
<div class="a" style="left:225.0px;top:323.84px;width:25.6px;height:5.3px;background:#e3f7fd;border:0.4px solid #8ad8f2;border-radius:0.6px;overflow:hidden"><div class="a" style="left:0;top:0;width:18.432000000000002px;height:100%;background:#16afe2"></div></div>
<div class="t" style="left:225.0px;width:25.6px;text-align:center;top:325.14px;font-size:2.7px;color:#333">74%</div>
<svg class="a" style="left:218.5px;top:333.06px" width="6" height="6" viewBox="0 0 6 6"><circle cx="2.6" cy="2.8" r="1.9" fill="none" stroke="#b4bac2" stroke-width="0.4"/><path d="M2.6 1.8 V2.9 L3.3 3.4" fill="none" stroke="#b4bac2" stroke-width="0.35"/></svg>
<div class="t" style="left:225.0px;top:334.36px;font-size:3.6px;color:#888">-</div>
<svg class="a" style="left:218.5px;top:342.48px" width="6" height="6" viewBox="0 0 6 6"><circle cx="2.6" cy="2.8" r="1.9" fill="none" stroke="#b4bac2" stroke-width="0.4"/><path d="M2.6 1.8 V2.9 L3.3 3.4" fill="none" stroke="#b4bac2" stroke-width="0.35"/></svg>
<div class="t" style="left:225.0px;top:343.78000000000003px;font-size:3.6px;color:#888">-</div>
<svg class="a" style="left:218.5px;top:351.90000000000003px" width="6" height="6" viewBox="0 0 6 6"><circle cx="2.6" cy="2.8" r="1.9" fill="none" stroke="#b4bac2" stroke-width="0.4"/><path d="M2.6 1.8 V2.9 L3.3 3.4" fill="none" stroke="#b4bac2" stroke-width="0.35"/></svg>
<div class="t" style="left:225.0px;top:353.20000000000005px;font-size:3.6px;color:#888">-</div>
<svg class="a" style="left:218.5px;top:361.32px" width="6" height="6" viewBox="0 0 6 6"><circle cx="2.6" cy="2.8" r="1.9" fill="none" stroke="#b4bac2" stroke-width="0.4"/><path d="M2.6 1.8 V2.9 L3.3 3.4" fill="none" stroke="#b4bac2" stroke-width="0.35"/></svg>
<div class="t" style="left:225.0px;top:362.62px;font-size:3.6px;color:#888">-</div>
<svg class="a" style="left:218.5px;top:370.74px" width="6" height="6" viewBox="0 0 6 6"><circle cx="2.6" cy="2.8" r="1.9" fill="none" stroke="#b4bac2" stroke-width="0.4"/><path d="M2.6 1.8 V2.9 L3.3 3.4" fill="none" stroke="#b4bac2" stroke-width="0.35"/></svg>
<div class="t" style="left:225.0px;top:372.04px;font-size:3.6px;color:#888">-</div>
<svg class="a" style="left:218.5px;top:380.16px" width="6" height="6" viewBox="0 0 6 6"><circle cx="2.6" cy="2.8" r="1.9" fill="none" stroke="#b4bac2" stroke-width="0.4"/><path d="M2.6 1.8 V2.9 L3.3 3.4" fill="none" stroke="#b4bac2" stroke-width="0.35"/></svg>
<div class="t" style="left:225.0px;top:381.46000000000004px;font-size:3.6px;color:#888">-</div>
<svg class="a" style="left:218.5px;top:389.58px" width="6" height="6" viewBox="0 0 6 6"><circle cx="2.6" cy="2.8" r="1.9" fill="none" stroke="#b4bac2" stroke-width="0.4"/><path d="M2.6 1.8 V2.9 L3.3 3.4" fill="none" stroke="#b4bac2" stroke-width="0.35"/></svg>
<div class="t" style="left:225.0px;top:390.88px;font-size:3.6px;color:#888">-</div>
<svg class="a" style="left:291.08px;top:304.8px" width="6" height="6" viewBox="0 0 6 6"><circle cx="2.6" cy="2.8" r="1.9" fill="none" stroke="#b4bac2" stroke-width="0.4"/><path d="M2.6 1.8 V2.9 L3.3 3.4" fill="none" stroke="#b4bac2" stroke-width="0.35"/></svg>
<div class="a" style="left:297.58px;top:305.0px;width:25.6px;height:5.3px;background:#fff5c5;border:0.4px solid #ffe8a0;border-radius:0.6px;overflow:hidden"><div class="a" style="left:0;top:0;width:8.704px;height:100%;background:#fbbf16"></div></div>
<div class="t" style="left:297.58px;width:25.6px;text-align:center;top:306.3px;font-size:2.7px;color:#333">34%</div>
<svg class="a" style="left:291.08px;top:314.22px" width="6" height="6" viewBox="0 0 6 6"><circle cx="2.6" cy="2.8" r="1.9" fill="none" stroke="#b4bac2" stroke-width="0.4"/><path d="M2.6 1.8 V2.9 L3.3 3.4" fill="none" stroke="#b4bac2" stroke-width="0.35"/></svg>
<div class="a" style="left:297.58px;top:314.42px;width:25.6px;height:5.3px;background:#e3f7fd;border:0.4px solid #8ad8f2;border-radius:0.6px;overflow:hidden"><div class="a" style="left:0;top:0;width:17.408px;height:100%;background:#16afe2"></div></div>
<div class="t" style="left:297.58px;width:25.6px;text-align:center;top:315.72px;font-size:2.7px;color:#333">68%</div>
<svg class="a" style="left:291.08px;top:323.64px" width="6" height="6" viewBox="0 0 6 6"><circle cx="2.6" cy="2.8" r="1.9" fill="none" stroke="#b4bac2" stroke-width="0.4"/><path d="M2.6 1.8 V2.9 L3.3 3.4" fill="none" stroke="#b4bac2" stroke-width="0.35"/></svg>
<div class="a" style="left:297.58px;top:323.84px;width:25.6px;height:5.3px;background:#e3f7fd;border:0.4px solid #8ad8f2;border-radius:0.6px;overflow:hidden"><div class="a" style="left:0;top:0;width:19.2px;height:100%;background:#16afe2"></div></div>
<div class="t" style="left:297.58px;width:25.6px;text-align:center;top:325.14px;font-size:2.7px;color:#333">75%</div>
<svg class="a" style="left:291.08px;top:333.06px" width="6" height="6" viewBox="0 0 6 6"><circle cx="2.6" cy="2.8" r="1.9" fill="none" stroke="#b4bac2" stroke-width="0.4"/><path d="M2.6 1.8 V2.9 L3.3 3.4" fill="none" stroke="#b4bac2" stroke-width="0.35"/></svg>
<div class="t" style="left:297.58px;top:334.36px;font-size:3.6px;color:#888">-</div>
<svg class="a" style="left:291.08px;top:342.48px" width="6" height="6" viewBox="0 0 6 6"><circle cx="2.6" cy="2.8" r="1.9" fill="none" stroke="#b4bac2" stroke-width="0.4"/><path d="M2.6 1.8 V2.9 L3.3 3.4" fill="none" stroke="#b4bac2" stroke-width="0.35"/></svg>
<div class="t" style="left:297.58px;top:343.78000000000003px;font-size:3.6px;color:#888">-</div>
<svg class="a" style="left:291.08px;top:351.90000000000003px" width="6" height="6" viewBox="0 0 6 6"><circle cx="2.6" cy="2.8" r="1.9" fill="none" stroke="#b4bac2" stroke-width="0.4"/><path d="M2.6 1.8 V2.9 L3.3 3.4" fill="none" stroke="#b4bac2" stroke-width="0.35"/></svg>
<div class="t" style="left:297.58px;top:353.20000000000005px;font-size:3.6px;color:#888">-</div>
<svg class="a" style="left:291.08px;top:361.32px" width="6" height="6" viewBox="0 0 6 6"><circle cx="2.6" cy="2.8" r="1.9" fill="none" stroke="#b4bac2" stroke-width="0.4"/><path d="M2.6 1.8 V2.9 L3.3 3.4" fill="none" stroke="#b4bac2" stroke-width="0.35"/></svg>
<div class="t" style="left:297.58px;top:362.62px;font-size:3.6px;color:#888">-</div>
<svg class="a" style="left:291.08px;top:370.74px" width="6" height="6" viewBox="0 0 6 6"><circle cx="2.6" cy="2.8" r="1.9" fill="none" stroke="#b4bac2" stroke-width="0.4"/><path d="M2.6 1.8 V2.9 L3.3 3.4" fill="none" stroke="#b4bac2" stroke-width="0.35"/></svg>
<div class="t" style="left:297.58px;top:372.04px;font-size:3.6px;color:#888">-</div>
<svg class="a" style="left:291.08px;top:380.16px" width="6" height="6" viewBox="0 0 6 6"><circle cx="2.6" cy="2.8" r="1.9" fill="none" stroke="#b4bac2" stroke-width="0.4"/><path d="M2.6 1.8 V2.9 L3.3 3.4" fill="none" stroke="#b4bac2" stroke-width="0.35"/></svg>
<div class="t" style="left:297.58px;top:381.46000000000004px;font-size:3.6px;color:#888">-</div>
<svg class="a" style="left:291.08px;top:389.58px" width="6" height="6" viewBox="0 0 6 6"><circle cx="2.6" cy="2.8" r="1.9" fill="none" stroke="#b4bac2" stroke-width="0.4"/><path d="M2.6 1.8 V2.9 L3.3 3.4" fill="none" stroke="#b4bac2" stroke-width="0.35"/></svg>
<div class="t" style="left:297.58px;top:390.88px;font-size:3.6px;color:#888">-</div>
<svg class="a" style="left:363.65999999999997px;top:304.8px" width="6" height="6" viewBox="0 0 6 6"><circle cx="2.6" cy="2.8" r="1.9" fill="none" stroke="#b4bac2" stroke-width="0.4"/><path d="M2.6 1.8 V2.9 L3.3 3.4" fill="none" stroke="#b4bac2" stroke-width="0.35"/></svg>
<div class="a" style="left:370.15999999999997px;top:305.0px;width:25.6px;height:5.3px;background:#fff5c5;border:0.4px solid #ffe8a0;border-radius:0.6px;overflow:hidden"><div class="a" style="left:0;top:0;width:10.24px;height:100%;background:#fbbf16"></div></div>
<div class="t" style="left:370.15999999999997px;width:25.6px;text-align:center;top:306.3px;font-size:2.7px;color:#333">40%</div>
<svg class="a" style="left:363.65999999999997px;top:314.22px" width="6" height="6" viewBox="0 0 6 6"><circle cx="2.6" cy="2.8" r="1.9" fill="none" stroke="#b4bac2" stroke-width="0.4"/><path d="M2.6 1.8 V2.9 L3.3 3.4" fill="none" stroke="#b4bac2" stroke-width="0.35"/></svg>
<div class="a" style="left:370.15999999999997px;top:314.42px;width:25.6px;height:5.3px;background:#eef9e6;border:0.4px solid #b7e59b;border-radius:0.6px;overflow:hidden"><div class="a" style="left:0;top:0;width:22.272000000000002px;height:100%;background:#55bb2a"></div></div>
<div class="t" style="left:370.15999999999997px;width:25.6px;text-align:center;top:315.72px;font-size:2.7px;color:#333">87%</div>
<svg class="a" style="left:363.65999999999997px;top:323.64px" width="6" height="6" viewBox="0 0 6 6"><circle cx="2.6" cy="2.8" r="1.9" fill="none" stroke="#b4bac2" stroke-width="0.4"/><path d="M2.6 1.8 V2.9 L3.3 3.4" fill="none" stroke="#b4bac2" stroke-width="0.35"/></svg>
<div class="a" style="left:370.15999999999997px;top:323.84px;width:25.6px;height:5.3px;background:#eef9e6;border:0.4px solid #b7e59b;border-radius:0.6px;overflow:hidden"><div class="a" style="left:0;top:0;width:21.76px;height:100%;background:#55bb2a"></div></div>
<div class="t" style="left:370.15999999999997px;width:25.6px;text-align:center;top:325.14px;font-size:2.7px;color:#333">85%</div>
<svg class="a" style="left:363.65999999999997px;top:333.06px" width="6" height="6" viewBox="0 0 6 6"><circle cx="2.6" cy="2.8" r="1.9" fill="none" stroke="#b4bac2" stroke-width="0.4"/><path d="M2.6 1.8 V2.9 L3.3 3.4" fill="none" stroke="#b4bac2" stroke-width="0.35"/></svg>
<div class="t" style="left:370.15999999999997px;top:334.36px;font-size:3.6px;color:#888">-</div>
<svg class="a" style="left:363.65999999999997px;top:342.48px" width="6" height="6" viewBox="0 0 6 6"><circle cx="2.6" cy="2.8" r="1.9" fill="none" stroke="#b4bac2" stroke-width="0.4"/><path d="M2.6 1.8 V2.9 L3.3 3.4" fill="none" stroke="#b4bac2" stroke-width="0.35"/></svg>
<div class="t" style="left:370.15999999999997px;top:343.78000000000003px;font-size:3.6px;color:#888">-</div>
<svg class="a" style="left:363.65999999999997px;top:351.90000000000003px" width="6" height="6" viewBox="0 0 6 6"><circle cx="2.6" cy="2.8" r="1.9" fill="none" stroke="#b4bac2" stroke-width="0.4"/><path d="M2.6 1.8 V2.9 L3.3 3.4" fill="none" stroke="#b4bac2" stroke-width="0.35"/></svg>
<div class="t" style="left:370.15999999999997px;top:353.20000000000005px;font-size:3.6px;color:#888">-</div>
<svg class="a" style="left:363.65999999999997px;top:361.32px" width="6" height="6" viewBox="0 0 6 6"><circle cx="2.6" cy="2.8" r="1.9" fill="none" stroke="#b4bac2" stroke-width="0.4"/><path d="M2.6 1.8 V2.9 L3.3 3.4" fill="none" stroke="#b4bac2" stroke-width="0.35"/></svg>
<div class="t" style="left:370.15999999999997px;top:362.62px;font-size:3.6px;color:#888">-</div>
<svg class="a" style="left:363.65999999999997px;top:370.74px" width="6" height="6" viewBox="0 0 6 6"><circle cx="2.6" cy="2.8" r="1.9" fill="none" stroke="#b4bac2" stroke-width="0.4"/><path d="M2.6 1.8 V2.9 L3.3 3.4" fill="none" stroke="#b4bac2" stroke-width="0.35"/></svg>
<div class="t" style="left:370.15999999999997px;top:372.04px;font-size:3.6px;color:#888">-</div>
<svg class="a" style="left:363.65999999999997px;top:380.16px" width="6" height="6" viewBox="0 0 6 6"><circle cx="2.6" cy="2.8" r="1.9" fill="none" stroke="#b4bac2" stroke-width="0.4"/><path d="M2.6 1.8 V2.9 L3.3 3.4" fill="none" stroke="#b4bac2" stroke-width="0.35"/></svg>
<div class="t" style="left:370.15999999999997px;top:381.46000000000004px;font-size:3.6px;color:#888">-</div>
<svg class="a" style="left:363.65999999999997px;top:389.58px" width="6" height="6" viewBox="0 0 6 6"><circle cx="2.6" cy="2.8" r="1.9" fill="none" stroke="#b4bac2" stroke-width="0.4"/><path d="M2.6 1.8 V2.9 L3.3 3.4" fill="none" stroke="#b4bac2" stroke-width="0.35"/></svg>
<div class="t" style="left:370.15999999999997px;top:390.88px;font-size:3.6px;color:#888">-</div>
<svg class="a" style="left:436.24px;top:304.8px" width="6" height="6" viewBox="0 0 6 6"><circle cx="2.6" cy="2.8" r="1.9" fill="none" stroke="#b4bac2" stroke-width="0.4"/><path d="M2.6 1.8 V2.9 L3.3 3.4" fill="none" stroke="#b4bac2" stroke-width="0.35"/></svg>
<div class="a" style="left:442.74px;top:305.0px;width:25.6px;height:5.3px;background:#fff5c5;border:0.4px solid #ffe8a0;border-radius:0.6px;overflow:hidden"><div class="a" style="left:0;top:0;width:11.52px;height:100%;background:#fbbf16"></div></div>
<div class="t" style="left:442.74px;width:25.6px;text-align:center;top:306.3px;font-size:2.7px;color:#333">40%</div>
<svg class="a" style="left:436.24px;top:314.22px" width="6" height="6" viewBox="0 0 6 6"><circle cx="2.6" cy="2.8" r="1.9" fill="none" stroke="#b4bac2" stroke-width="0.4"/><path d="M2.6 1.8 V2.9 L3.3 3.4" fill="none" stroke="#b4bac2" stroke-width="0.35"/></svg>
<div class="a" style="left:442.74px;top:314.42px;width:25.6px;height:5.3px;background:#e3f7fd;border:0.4px solid #8ad8f2;border-radius:0.6px;overflow:hidden"><div class="a" style="left:0;top:0;width:17.92px;height:100%;background:#16afe2"></div></div>
<div class="t" style="left:442.74px;width:25.6px;text-align:center;top:315.72px;font-size:2.7px;color:#333">70%</div>
<svg class="a" style="left:436.24px;top:323.64px" width="6" height="6" viewBox="0 0 6 6"><circle cx="2.6" cy="2.8" r="1.9" fill="none" stroke="#b4bac2" stroke-width="0.4"/><path d="M2.6 1.8 V2.9 L3.3 3.4" fill="none" stroke="#b4bac2" stroke-width="0.35"/></svg>
<div class="a" style="left:442.74px;top:323.84px;width:25.6px;height:5.3px;background:#e3f7fd;border:0.4px solid #8ad8f2;border-radius:0.6px;overflow:hidden"><div class="a" style="left:0;top:0;width:12.288000000000002px;height:100%;background:#16afe2"></div></div>
<div class="t" style="left:442.74px;width:25.6px;text-align:center;top:325.14px;font-size:2.7px;color:#333">37%</div>
<svg class="a" style="left:436.24px;top:333.06px" width="6" height="6" viewBox="0 0 6 6"><circle cx="2.6" cy="2.8" r="1.9" fill="none" stroke="#b4bac2" stroke-width="0.4"/><path d="M2.6 1.8 V2.9 L3.3 3.4" fill="none" stroke="#b4bac2" stroke-width="0.35"/></svg>
<div class="t" style="left:442.74px;top:334.36px;font-size:3.6px;color:#888">-</div>
<svg class="a" style="left:436.24px;top:342.48px" width="6" height="6" viewBox="0 0 6 6"><circle cx="2.6" cy="2.8" r="1.9" fill="none" stroke="#b4bac2" stroke-width="0.4"/><path d="M2.6 1.8 V2.9 L3.3 3.4" fill="none" stroke="#b4bac2" stroke-width="0.35"/></svg>
<div class="t" style="left:442.74px;top:343.78000000000003px;font-size:3.6px;color:#888">-</div>
<svg class="a" style="left:436.24px;top:351.90000000000003px" width="6" height="6" viewBox="0 0 6 6"><circle cx="2.6" cy="2.8" r="1.9" fill="none" stroke="#b4bac2" stroke-width="0.4"/><path d="M2.6 1.8 V2.9 L3.3 3.4" fill="none" stroke="#b4bac2" stroke-width="0.35"/></svg>
<div class="t" style="left:442.74px;top:353.20000000000005px;font-size:3.6px;color:#888">-</div>
<svg class="a" style="left:436.24px;top:361.32px" width="6" height="6" viewBox="0 0 6 6"><circle cx="2.6" cy="2.8" r="1.9" fill="none" stroke="#b4bac2" stroke-width="0.4"/><path d="M2.6 1.8 V2.9 L3.3 3.4" fill="none" stroke="#b4bac2" stroke-width="0.35"/></svg>
<div class="t" style="left:442.74px;top:362.62px;font-size:3.6px;color:#888">-</div>
<svg class="a" style="left:436.24px;top:370.74px" width="6" height="6" viewBox="0 0 6 6"><circle cx="2.6" cy="2.8" r="1.9" fill="none" stroke="#b4bac2" stroke-width="0.4"/><path d="M2.6 1.8 V2.9 L3.3 3.4" fill="none" stroke="#b4bac2" stroke-width="0.35"/></svg>
<div class="t" style="left:442.74px;top:372.04px;font-size:3.6px;color:#888">-</div>
<svg class="a" style="left:436.24px;top:380.16px" width="6" height="6" viewBox="0 0 6 6"><circle cx="2.6" cy="2.8" r="1.9" fill="none" stroke="#b4bac2" stroke-width="0.4"/><path d="M2.6 1.8 V2.9 L3.3 3.4" fill="none" stroke="#b4bac2" stroke-width="0.35"/></svg>
<div class="t" style="left:442.74px;top:381.46000000000004px;font-size:3.6px;color:#888">-</div>
<svg class="a" style="left:436.24px;top:389.58px" width="6" height="6" viewBox="0 0 6 6"><circle cx="2.6" cy="2.8" r="1.9" fill="none" stroke="#b4bac2" stroke-width="0.4"/><path d="M2.6 1.8 V2.9 L3.3 3.4" fill="none" stroke="#b4bac2" stroke-width="0.35"/></svg>
<div class="t" style="left:442.74px;top:390.88px;font-size:3.6px;color:#888">-</div>
<svg class="a" style="left:508.82px;top:304.8px" width="6" height="6" viewBox="0 0 6 6"><circle cx="2.6" cy="2.8" r="1.9" fill="none" stroke="#b4bac2" stroke-width="0.4"/><path d="M2.6 1.8 V2.9 L3.3 3.4" fill="none" stroke="#b4bac2" stroke-width="0.35"/></svg>
<div class="a" style="left:515.3199999999999px;top:305.0px;width:25.6px;height:5.3px;background:#fff5c5;border:0.4px solid #ffe8a0;border-radius:0.6px;overflow:hidden"><div class="a" style="left:0;top:0;width:3.84px;height:100%;background:#fbbf16"></div></div>
<div class="t" style="left:515.3199999999999px;width:25.6px;text-align:center;top:306.3px;font-size:2.7px;color:#333">15%</div>
<svg class="a" style="left:508.82px;top:314.22px" width="6" height="6" viewBox="0 0 6 6"><circle cx="2.6" cy="2.8" r="1.9" fill="none" stroke="#b4bac2" stroke-width="0.4"/><path d="M2.6 1.8 V2.9 L3.3 3.4" fill="none" stroke="#b4bac2" stroke-width="0.35"/></svg>
<div class="a" style="left:515.3199999999999px;top:314.42px;width:25.6px;height:5.3px;background:#e3f7fd;border:0.4px solid #8ad8f2;border-radius:0.6px;overflow:hidden"><div class="a" style="left:0;top:0;width:16.64px;height:100%;background:#16afe2"></div></div>
<div class="t" style="left:515.3199999999999px;width:25.6px;text-align:center;top:315.72px;font-size:2.7px;color:#333">65%</div>
<svg class="a" style="left:508.82px;top:323.64px" width="6" height="6" viewBox="0 0 6 6"><circle cx="2.6" cy="2.8" r="1.9" fill="none" stroke="#b4bac2" stroke-width="0.4"/><path d="M2.6 1.8 V2.9 L3.3 3.4" fill="none" stroke="#b4bac2" stroke-width="0.35"/></svg>
<div class="a" style="left:515.3199999999999px;top:323.84px;width:25.6px;height:5.3px;background:#e3f7fd;border:0.4px solid #8ad8f2;border-radius:0.6px;overflow:hidden"><div class="a" style="left:0;top:0;width:17.152px;height:100%;background:#16afe2"></div></div>
<div class="t" style="left:515.3199999999999px;width:25.6px;text-align:center;top:325.14px;font-size:2.7px;color:#333">67%</div>
<svg class="a" style="left:508.82px;top:333.06px" width="6" height="6" viewBox="0 0 6 6"><circle cx="2.6" cy="2.8" r="1.9" fill="none" stroke="#b4bac2" stroke-width="0.4"/><path d="M2.6 1.8 V2.9 L3.3 3.4" fill="none" stroke="#b4bac2" stroke-width="0.35"/></svg>
<div class="t" style="left:515.3199999999999px;top:334.36px;font-size:3.6px;color:#888">-</div>
<svg class="a" style="left:508.82px;top:342.48px" width="6" height="6" viewBox="0 0 6 6"><circle cx="2.6" cy="2.8" r="1.9" fill="none" stroke="#b4bac2" stroke-width="0.4"/><path d="M2.6 1.8 V2.9 L3.3 3.4" fill="none" stroke="#b4bac2" stroke-width="0.35"/></svg>
<div class="t" style="left:515.3199999999999px;top:343.78000000000003px;font-size:3.6px;color:#888">-</div>
<svg class="a" style="left:508.82px;top:351.90000000000003px" width="6" height="6" viewBox="0 0 6 6"><circle cx="2.6" cy="2.8" r="1.9" fill="none" stroke="#b4bac2" stroke-width="0.4"/><path d="M2.6 1.8 V2.9 L3.3 3.4" fill="none" stroke="#b4bac2" stroke-width="0.35"/></svg>
<div class="t" style="left:515.3199999999999px;top:353.20000000000005px;font-size:3.6px;color:#888">-</div>
<svg class="a" style="left:508.82px;top:361.32px" width="6" height="6" viewBox="0 0 6 6"><circle cx="2.6" cy="2.8" r="1.9" fill="none" stroke="#b4bac2" stroke-width="0.4"/><path d="M2.6 1.8 V2.9 L3.3 3.4" fill="none" stroke="#b4bac2" stroke-width="0.35"/></svg>
<div class="t" style="left:515.3199999999999px;top:362.62px;font-size:3.6px;color:#888">-</div>
<svg class="a" style="left:508.82px;top:370.74px" width="6" height="6" viewBox="0 0 6 6"><circle cx="2.6" cy="2.8" r="1.9" fill="none" stroke="#b4bac2" stroke-width="0.4"/><path d="M2.6 1.8 V2.9 L3.3 3.4" fill="none" stroke="#b4bac2" stroke-width="0.35"/></svg>
<div class="t" style="left:515.3199999999999px;top:372.04px;font-size:3.6px;color:#888">-</div>
<svg class="a" style="left:508.82px;top:380.16px" width="6" height="6" viewBox="0 0 6 6"><circle cx="2.6" cy="2.8" r="1.9" fill="none" stroke="#b4bac2" stroke-width="0.4"/><path d="M2.6 1.8 V2.9 L3.3 3.4" fill="none" stroke="#b4bac2" stroke-width="0.35"/></svg>
<div class="t" style="left:515.3199999999999px;top:381.46000000000004px;font-size:3.6px;color:#888">-</div>
<svg class="a" style="left:508.82px;top:389.58px" width="6" height="6" viewBox="0 0 6 6"><circle cx="2.6" cy="2.8" r="1.9" fill="none" stroke="#b4bac2" stroke-width="0.4"/><path d="M2.6 1.8 V2.9 L3.3 3.4" fill="none" stroke="#b4bac2" stroke-width="0.35"/></svg>
<div class="t" style="left:515.3199999999999px;top:390.88px;font-size:3.6px;color:#888">-</div>
<svg class="a" style="left:581.4px;top:304.8px" width="6" height="6" viewBox="0 0 6 6"><circle cx="2.6" cy="2.8" r="1.9" fill="none" stroke="#b4bac2" stroke-width="0.4"/><path d="M2.6 1.8 V2.9 L3.3 3.4" fill="none" stroke="#b4bac2" stroke-width="0.35"/></svg>
<div class="t" style="left:587.9px;top:306.1px;font-size:3.6px;color:#888">-</div>
<svg class="a" style="left:581.4px;top:314.22px" width="6" height="6" viewBox="0 0 6 6"><circle cx="2.6" cy="2.8" r="1.9" fill="none" stroke="#b4bac2" stroke-width="0.4"/><path d="M2.6 1.8 V2.9 L3.3 3.4" fill="none" stroke="#b4bac2" stroke-width="0.35"/></svg>
<div class="t" style="left:587.9px;top:315.52000000000004px;font-size:3.6px;color:#888">-</div>
<svg class="a" style="left:581.4px;top:323.64px" width="6" height="6" viewBox="0 0 6 6"><circle cx="2.6" cy="2.8" r="1.9" fill="none" stroke="#b4bac2" stroke-width="0.4"/><path d="M2.6 1.8 V2.9 L3.3 3.4" fill="none" stroke="#b4bac2" stroke-width="0.35"/></svg>
<div class="t" style="left:587.9px;top:324.94px;font-size:3.6px;color:#888">-</div>
<svg class="a" style="left:581.4px;top:333.06px" width="6" height="6" viewBox="0 0 6 6"><circle cx="2.6" cy="2.8" r="1.9" fill="none" stroke="#b4bac2" stroke-width="0.4"/><path d="M2.6 1.8 V2.9 L3.3 3.4" fill="none" stroke="#b4bac2" stroke-width="0.35"/></svg>
<div class="t" style="left:587.9px;top:334.36px;font-size:3.6px;color:#888">-</div>
<svg class="a" style="left:581.4px;top:342.48px" width="6" height="6" viewBox="0 0 6 6"><circle cx="2.6" cy="2.8" r="1.9" fill="none" stroke="#b4bac2" stroke-width="0.4"/><path d="M2.6 1.8 V2.9 L3.3 3.4" fill="none" stroke="#b4bac2" stroke-width="0.35"/></svg>
<div class="t" style="left:587.9px;top:343.78000000000003px;font-size:3.6px;color:#888">-</div>
<svg class="a" style="left:581.4px;top:351.90000000000003px" width="6" height="6" viewBox="0 0 6 6"><circle cx="2.6" cy="2.8" r="1.9" fill="none" stroke="#b4bac2" stroke-width="0.4"/><path d="M2.6 1.8 V2.9 L3.3 3.4" fill="none" stroke="#b4bac2" stroke-width="0.35"/></svg>
<div class="t" style="left:587.9px;top:353.20000000000005px;font-size:3.6px;color:#888">-</div>
<svg class="a" style="left:581.4px;top:361.32px" width="6" height="6" viewBox="0 0 6 6"><circle cx="2.6" cy="2.8" r="1.9" fill="none" stroke="#b4bac2" stroke-width="0.4"/><path d="M2.6 1.8 V2.9 L3.3 3.4" fill="none" stroke="#b4bac2" stroke-width="0.35"/></svg>
<div class="t" style="left:587.9px;top:362.62px;font-size:3.6px;color:#888">-</div>
<svg class="a" style="left:581.4px;top:370.74px" width="6" height="6" viewBox="0 0 6 6"><circle cx="2.6" cy="2.8" r="1.9" fill="none" stroke="#b4bac2" stroke-width="0.4"/><path d="M2.6 1.8 V2.9 L3.3 3.4" fill="none" stroke="#b4bac2" stroke-width="0.35"/></svg>
<div class="t" style="left:587.9px;top:372.04px;font-size:3.6px;color:#888">-</div>
<svg class="a" style="left:581.4px;top:380.16px" width="6" height="6" viewBox="0 0 6 6"><circle cx="2.6" cy="2.8" r="1.9" fill="none" stroke="#b4bac2" stroke-width="0.4"/><path d="M2.6 1.8 V2.9 L3.3 3.4" fill="none" stroke="#b4bac2" stroke-width="0.35"/></svg>
<div class="t" style="left:587.9px;top:381.46000000000004px;font-size:3.6px;color:#888">-</div>
<svg class="a" style="left:581.4px;top:389.58px" width="6" height="6" viewBox="0 0 6 6"><circle cx="2.6" cy="2.8" r="1.9" fill="none" stroke="#b4bac2" stroke-width="0.4"/><path d="M2.6 1.8 V2.9 L3.3 3.4" fill="none" stroke="#b4bac2" stroke-width="0.35"/></svg>
<div class="t" style="left:587.9px;top:390.88px;font-size:3.6px;color:#888">-</div>
<svg class="a" style="left:653.98px;top:304.8px" width="6" height="6" viewBox="0 0 6 6"><circle cx="2.6" cy="2.8" r="1.9" fill="none" stroke="#b4bac2" stroke-width="0.4"/><path d="M2.6 1.8 V2.9 L3.3 3.4" fill="none" stroke="#b4bac2" stroke-width="0.35"/></svg>
<div class="t" style="left:660.48px;top:306.1px;font-size:3.6px;color:#888">-</div>
<svg class="a" style="left:653.98px;top:314.22px" width="6" height="6" viewBox="0 0 6 6"><circle cx="2.6" cy="2.8" r="1.9" fill="none" stroke="#b4bac2" stroke-width="0.4"/><path d="M2.6 1.8 V2.9 L3.3 3.4" fill="none" stroke="#b4bac2" stroke-width="0.35"/></svg>
<div class="t" style="left:660.48px;top:315.52000000000004px;font-size:3.6px;color:#888">-</div>
<svg class="a" style="left:653.98px;top:323.64px" width="6" height="6" viewBox="0 0 6 6"><circle cx="2.6" cy="2.8" r="1.9" fill="none" stroke="#b4bac2" stroke-width="0.4"/><path d="M2.6 1.8 V2.9 L3.3 3.4" fill="none" stroke="#b4bac2" stroke-width="0.35"/></svg>
<div class="t" style="left:660.48px;top:324.94px;font-size:3.6px;color:#888">-</div>
<svg class="a" style="left:653.98px;top:333.06px" width="6" height="6" viewBox="0 0 6 6"><circle cx="2.6" cy="2.8" r="1.9" fill="none" stroke="#b4bac2" stroke-width="0.4"/><path d="M2.6 1.8 V2.9 L3.3 3.4" fill="none" stroke="#b4bac2" stroke-width="0.35"/></svg>
<div class="t" style="left:660.48px;top:334.36px;font-size:3.6px;color:#888">-</div>
<svg class="a" style="left:653.98px;top:342.48px" width="6" height="6" viewBox="0 0 6 6"><circle cx="2.6" cy="2.8" r="1.9" fill="none" stroke="#b4bac2" stroke-width="0.4"/><path d="M2.6 1.8 V2.9 L3.3 3.4" fill="none" stroke="#b4bac2" stroke-width="0.35"/></svg>
<div class="t" style="left:660.48px;top:343.78000000000003px;font-size:3.6px;color:#888">-</div>
<svg class="a" style="left:653.98px;top:351.90000000000003px" width="6" height="6" viewBox="0 0 6 6"><circle cx="2.6" cy="2.8" r="1.9" fill="none" stroke="#b4bac2" stroke-width="0.4"/><path d="M2.6 1.8 V2.9 L3.3 3.4" fill="none" stroke="#b4bac2" stroke-width="0.35"/></svg>
<div class="t" style="left:660.48px;top:353.20000000000005px;font-size:3.6px;color:#888">-</div>
<svg class="a" style="left:653.98px;top:361.32px" width="6" height="6" viewBox="0 0 6 6"><circle cx="2.6" cy="2.8" r="1.9" fill="none" stroke="#b4bac2" stroke-width="0.4"/><path d="M2.6 1.8 V2.9 L3.3 3.4" fill="none" stroke="#b4bac2" stroke-width="0.35"/></svg>
<div class="t" style="left:660.48px;top:362.62px;font-size:3.6px;color:#888">-</div>
<svg class="a" style="left:653.98px;top:370.74px" width="6" height="6" viewBox="0 0 6 6"><circle cx="2.6" cy="2.8" r="1.9" fill="none" stroke="#b4bac2" stroke-width="0.4"/><path d="M2.6 1.8 V2.9 L3.3 3.4" fill="none" stroke="#b4bac2" stroke-width="0.35"/></svg>
<div class="t" style="left:660.48px;top:372.04px;font-size:3.6px;color:#888">-</div>
<svg class="a" style="left:653.98px;top:380.16px" width="6" height="6" viewBox="0 0 6 6"><circle cx="2.6" cy="2.8" r="1.9" fill="none" stroke="#b4bac2" stroke-width="0.4"/><path d="M2.6 1.8 V2.9 L3.3 3.4" fill="none" stroke="#b4bac2" stroke-width="0.35"/></svg>
<div class="t" style="left:660.48px;top:381.46000000000004px;font-size:3.6px;color:#888">-</div>
<svg class="a" style="left:653.98px;top:389.58px" width="6" height="6" viewBox="0 0 6 6"><circle cx="2.6" cy="2.8" r="1.9" fill="none" stroke="#b4bac2" stroke-width="0.4"/><path d="M2.6 1.8 V2.9 L3.3 3.4" fill="none" stroke="#b4bac2" stroke-width="0.35"/></svg>
<div class="t" style="left:660.48px;top:390.88px;font-size:3.6px;color:#888">-</div><div class="a" style="left:705.5px;top:1px;width:97.5px;height:418px;background:#f3f6f9"></div>
<div class="a" style="left:705.5px;top:1px;width:97.5px;height:15.3px;background:#fff"></div>
<div class="t" style="left:712px;top:5.5px;font-size:4px;color:#eceef1">Driver - 1 &nbsp;| 5 tasks</div>
<div class="a" style="left:777.4px;top:3.4px;width:23.5px;height:10.3px;background:#fff;border:0.4px solid #e3e6ea;border-radius:0.8px"></div>
<div class="a" style="left:791.5px;top:3.6px;width:0.35px;height:10px;background:#e3e6ea"></div>
<svg class="a" style="left:780px;top:5px" width="20" height="8" viewBox="0 0 20 8"><circle cx="4.5" cy="2.2" r="1.2" fill="none" stroke="#b5bac2" stroke-width="0.4"/><path d="M2.3 5.8 Q4.5 3.2 6.7 5.8 Z" fill="none" stroke="#b5bac2" stroke-width="0.4"/><path d="M15.3 3.2 L16.5 4.5 L17.7 3.2" stroke="#999" stroke-width="0.5" fill="none"/></svg>
<svg class="a" style="left:735px;top:20px" width="10" height="9" viewBox="0 0 10 9"><path d="M1.5 3.5 H8 V8 H1.5 Z M1.5 5.6 H8 M4.75 5.6 V8 M2.5 3.5 V1 H4 V3.5 M5.5 3.5 V1 H7 V3.5" fill="none" stroke="#b8bfca" stroke-width="0.45"/></svg>
<div class="t" style="left:747px;top:21.9px;font-size:4.3px;color:#8a93a0">Test Depot 2</div>
<svg class="a" style="left:716.5px;top:33.5px" width="6" height="6" viewBox="0 0 6 6"><circle cx="2.7" cy="2.6" r="2" fill="none" stroke="#c5cad2" stroke-width="0.4"/></svg>
<div class="t" style="left:723.5px;top:34.2px;font-size:3.7px;color:#333;font-weight:bold">10:13 - 19:53 (9:40h)</div>
<svg class="a" style="left:773px;top:33.5px" width="6" height="6" viewBox="0 0 6 6"><rect x="0.6" y="0.6" width="4" height="4" fill="none" stroke="#c5cad2" stroke-width="0.4"/></svg>
<div class="t" style="left:779px;top:34.2px;font-size:3.7px;color:#333"><b>1440</b> <span style="color:#999">b</span></div>
<svg class="a" style="left:739px;top:40.8px" width="5" height="6" viewBox="0 0 5 6"><rect x="0.8" y="0.6" width="3" height="4.4" rx="1.3" fill="none" stroke="#c5cad2" stroke-width="0.4"/></svg>
<div class="t" style="left:745px;top:41.6px;font-size:3.7px;color:#888"><b style="color:#333">19</b> Pickup Stop</div>
<div class="t" style="left:736.5px;top:52.8px;font-size:3.4px;color:#a0a7b1">&#10217;| Wed, Oct 19 | 10:00h</div>
<div class="a" style="left:714px;top:61.1px;width:80.5px;height:7.5px;background:#d6f8fc;border:0.45px solid #7fe0ee;border-radius:0.6px"></div>
<div class="t" style="left:714px;width:80.5px;text-align:center;top:63.2px;font-size:3.4px;color:#4ac4dc">&#9201; 0:13h</div>
<div class="a" style="left:710px;top:75.85px;width:4px;height:0.35px;background:#d0d6de"></div>
<div class="a" style="left:794px;top:75.85px;width:5px;height:0.35px;background:#d0d6de"></div>
<div class="t" style="left:715px;top:74.3px;font-size:3.4px;color:#9aa2ad">&#10216;| Wed, Oct 19 | 10:13h &nbsp;| &nbsp;&#8645; 0:04h (1.9km) &nbsp;| &nbsp;&#9635; 8 <span style="color:#4aa8e8">&#9432;</span></div>
<div class="a" style="left:710.5px;top:81.7px;width:88.2px;height:44.8px;background:#fff;border:0.45px solid #e1e6ec;border-radius:0.8px"></div>
<div class="a" style="left:712.9px;top:84.60000000000001px;width:7.6px;height:7.6px;background:#14b4ea;border-radius:50%"></div>
<div class="t" style="left:712.9px;width:7.6px;text-align:center;top:86.60000000000001px;font-size:3.7px;color:#fff">1</div>
<div class="t" style="left:724px;top:85.8px;font-size:4px;color:#333;font-weight:bold">T-2I8RCB3TE</div>
<svg class="a" style="left:779px;top:84.7px" width="19" height="6" viewBox="0 0 19 6"><path d="M0.8 1.5 L2.5 0.8 L4.2 1.5 V4.2 L2.5 5 L0.8 4.2 Z" fill="#cfd3dc"/><path d="M6.5 3 H7.6" stroke="#999" stroke-width="0.4"/><path d="M12.6 1.2 H17 M12.6 2.6 H17 M12.6 4 H17" stroke="#9aa0aa" stroke-width="0.55"/></svg>
<div class="t" style="left:724px;top:92.7px;font-size:3.6px;color:#777">[no reference]</div>
<div class="a" style="left:724px;top:97.5px;width:72.5px;height:0.35px;background:#eef0f3"></div>
<svg class="a" style="left:774.5px;top:99.0px" width="16" height="5" viewBox="0 0 16 5"><rect x="0.5" y="0.4" width="3.8" height="3.6" fill="none" stroke="#c5cad2" stroke-width="0.4"/><circle cx="13" cy="2.2" r="1.5" fill="none" stroke="#5ab3ea" stroke-width="0.4"/></svg>
<div class="t" style="left:780.6px;top:99.5px;font-size:3.6px;color:#333;font-weight:bold">68</div>
<div class="a" style="left:712px;top:104.30000000000001px;width:85px;height:0.35px;background:#eef0f3"></div>
<div class="t" style="left:713px;top:106.80000000000001px;font-size:3.6px;color:#777"><span style="color:#2f9be0">P</span> [London SW8 1RL] 68 S Lambeth Rd, 68 S Lam...</div>
<div class="t" style="left:713px;top:112.7px;font-size:3.4px;color:#b4b9c0">To: [London SE10 0TB] Apartment 14, Larlan Apartm...</div>
<div class="a" style="left:712px;top:118.30000000000001px;width:85px;height:0.35px;background:#eef0f3"></div>
<svg class="a" style="left:713.5px;top:119.5px" width="6" height="6" viewBox="0 0 6 6"><circle cx="2.6" cy="2.5" r="2" fill="none" stroke="#bfc4cc" stroke-width="0.4"/></svg>
<div class="t" style="left:720px;top:120.30000000000001px;font-size:3.6px;color:#777">- &nbsp;5 | 0:05</div>
<div class="t" style="left:750px;width:46.5px;text-align:right;top:120.30000000000001px;font-size:3.6px;color:#555">ETA: <b style="color:#222">Wed, Oct 19 | 10:17</b></div>
<div class="a" style="left:710px;top:131.85px;width:4px;height:0.35px;background:#d0d6de"></div>
<div class="a" style="left:794px;top:131.85px;width:5px;height:0.35px;background:#d0d6de"></div>
<div class="t" style="left:715px;top:130.3px;font-size:3.4px;color:#9aa2ad">&#10216;| Wed, Oct 19 | 10:22h &nbsp;| &nbsp;&#8645; 0:11h (3.1km) &nbsp;| &nbsp;&#9635; 68 <span style="color:#4aa8e8">&#9432;</span></div>
<div class="a" style="left:710.5px;top:138.1px;width:88.2px;height:44.8px;background:#fff;border:0.45px solid #e1e6ec;border-radius:0.8px"></div>
<div class="a" style="left:712.9px;top:141.0px;width:7.6px;height:7.6px;background:#14b4ea;border-radius:50%"></div>
<div class="t" style="left:712.9px;width:7.6px;text-align:center;top:143.0px;font-size:3.7px;color:#fff">2</div>
<div class="t" style="left:724px;top:142.2px;font-size:4px;color:#333;font-weight:bold">T-SV008SY1</div>
<svg class="a" style="left:779px;top:141.1px" width="19" height="6" viewBox="0 0 19 6"><path d="M0.8 1.5 L2.5 0.8 L4.2 1.5 V4.2 L2.5 5 L0.8 4.2 Z" fill="#cfd3dc"/><path d="M6.5 3 H7.6" stroke="#999" stroke-width="0.4"/><path d="M12.6 1.2 H17 M12.6 2.6 H17 M12.6 4 H17" stroke="#9aa0aa" stroke-width="0.55"/></svg>
<div class="t" style="left:724px;top:149.1px;font-size:3.6px;color:#777">[no reference]</div>
<div class="a" style="left:724px;top:153.9px;width:72.5px;height:0.35px;background:#eef0f3"></div>
<svg class="a" style="left:774.5px;top:155.4px" width="16" height="5" viewBox="0 0 16 5"><rect x="0.5" y="0.4" width="3.8" height="3.6" fill="none" stroke="#c5cad2" stroke-width="0.4"/><circle cx="13" cy="2.2" r="1.5" fill="none" stroke="#5ab3ea" stroke-width="0.4"/></svg>
<div class="t" style="left:780.6px;top:155.9px;font-size:3.6px;color:#333;font-weight:bold">58</div>
<div class="a" style="left:712px;top:160.7px;width:85px;height:0.35px;background:#eef0f3"></div>
<div class="t" style="left:713px;top:163.2px;font-size:3.6px;color:#777"><span style="color:#2f9be0">P</span> [London SW1X 8ES] Nicola Donati Fashion, 60 ...</div>
<div class="t" style="left:713px;top:169.1px;font-size:3.4px;color:#b4b9c0">To: [London N5 2PD] 14 Stradbroke Road</div>
<div class="a" style="left:712px;top:174.7px;width:85px;height:0.35px;background:#eef0f3"></div>
<svg class="a" style="left:713.5px;top:175.89999999999998px" width="6" height="6" viewBox="0 0 6 6"><circle cx="2.6" cy="2.5" r="2" fill="none" stroke="#bfc4cc" stroke-width="0.4"/></svg>
<div class="t" style="left:720px;top:176.7px;font-size:3.6px;color:#777">- &nbsp;5 | 0:05</div>
<div class="t" style="left:750px;width:46.5px;text-align:right;top:176.7px;font-size:3.6px;color:#555">ETA: <b style="color:#222">Wed, Oct 19 | 10:32</b></div>
<div class="a" style="left:710px;top:188.24999999999997px;width:4px;height:0.35px;background:#d0d6de"></div>
<div class="a" style="left:794px;top:188.24999999999997px;width:5px;height:0.35px;background:#d0d6de"></div>
<div class="t" style="left:715px;top:186.7px;font-size:3.4px;color:#9aa2ad">&#10216;| Wed, Oct 19 | 10:37h &nbsp;| &nbsp;&#8645; 0:04h (0.9km) &nbsp;| &nbsp;&#9635; 126 <span style="color:#4aa8e8">&#9432;</span></div>
<div class="a" style="left:710.5px;top:194.5px;width:88.2px;height:44.8px;background:#fff;border:0.45px solid #e1e6ec;border-radius:0.8px"></div>
<div class="a" style="left:712.9px;top:197.4px;width:7.6px;height:7.6px;background:#14b4ea;border-radius:50%"></div>
<div class="t" style="left:712.9px;width:7.6px;text-align:center;top:199.4px;font-size:3.7px;color:#fff">3</div>
<div class="t" style="left:724px;top:198.6px;font-size:4px;color:#333;font-weight:bold">T-4T2EXCLO</div>
<svg class="a" style="left:779px;top:197.5px" width="19" height="6" viewBox="0 0 19 6"><path d="M0.8 1.5 L2.5 0.8 L4.2 1.5 V4.2 L2.5 5 L0.8 4.2 Z" fill="#cfd3dc"/><path d="M6.5 3 H7.6" stroke="#999" stroke-width="0.4"/><path d="M12.6 1.2 H17 M12.6 2.6 H17 M12.6 4 H17" stroke="#9aa0aa" stroke-width="0.55"/></svg>
<div class="t" style="left:724px;top:205.5px;font-size:3.6px;color:#777">[no reference]</div>
<div class="a" style="left:724px;top:210.3px;width:72.5px;height:0.35px;background:#eef0f3"></div>
<svg class="a" style="left:774.5px;top:211.8px" width="16" height="5" viewBox="0 0 16 5"><rect x="0.5" y="0.4" width="3.8" height="3.6" fill="none" stroke="#c5cad2" stroke-width="0.4"/><circle cx="13" cy="2.2" r="1.5" fill="none" stroke="#5ab3ea" stroke-width="0.4"/></svg>
<div class="t" style="left:780.6px;top:212.3px;font-size:3.6px;color:#333;font-weight:bold">53</div>
<div class="a" style="left:712px;top:217.1px;width:85px;height:0.35px;background:#eef0f3"></div>
<div class="t" style="left:713px;top:219.6px;font-size:3.6px;color:#777"><span style="color:#2f9be0">P</span> [London SW1X 9BT] Brunello Cucinelli, 159 Slo...</div>
<div class="t" style="left:713px;top:225.5px;font-size:3.4px;color:#b4b9c0">To: [London NW1 2BJ] Friends House Garden, 173 E...</div>
<div class="a" style="left:712px;top:231.1px;width:85px;height:0.35px;background:#eef0f3"></div>
<svg class="a" style="left:713.5px;top:232.3px" width="6" height="6" viewBox="0 0 6 6"><circle cx="2.6" cy="2.5" r="2" fill="none" stroke="#bfc4cc" stroke-width="0.4"/></svg>
<div class="t" style="left:720px;top:233.1px;font-size:3.6px;color:#777">- &nbsp;5 | 0:05</div>
<div class="t" style="left:750px;width:46.5px;text-align:right;top:233.1px;font-size:3.6px;color:#555">ETA: <b style="color:#222">Wed, Oct 19 | 10:43</b></div>
<div class="a" style="left:710px;top:244.65px;width:4px;height:0.35px;background:#d0d6de"></div>
<div class="a" style="left:794px;top:244.65px;width:5px;height:0.35px;background:#d0d6de"></div>
<div class="t" style="left:715px;top:243.10000000000002px;font-size:3.4px;color:#9aa2ad">&#10216;| Wed, Oct 19 | 10:43h &nbsp;| &nbsp;&#8645; 0:05h (1.1km) &nbsp;| &nbsp;&#9635; 179 <span style="color:#4aa8e8">&#9432;</span></div>
<div class="a" style="left:710.5px;top:250.89999999999998px;width:88.2px;height:44.8px;background:#fff;border:0.45px solid #e1e6ec;border-radius:0.8px"></div>
<div class="a" style="left:712.9px;top:253.79999999999998px;width:7.6px;height:7.6px;background:#14b4ea;border-radius:50%"></div>
<div class="t" style="left:712.9px;width:7.6px;text-align:center;top:255.79999999999998px;font-size:3.7px;color:#fff">4</div>
<div class="t" style="left:724px;top:254.99999999999997px;font-size:4px;color:#333;font-weight:bold">T-5AG6ZART</div>
<svg class="a" style="left:779px;top:253.89999999999998px" width="19" height="6" viewBox="0 0 19 6"><path d="M0.8 1.5 L2.5 0.8 L4.2 1.5 V4.2 L2.5 5 L0.8 4.2 Z" fill="#cfd3dc"/><path d="M6.5 3 H7.6" stroke="#999" stroke-width="0.4"/><path d="M12.6 1.2 H17 M12.6 2.6 H17 M12.6 4 H17" stroke="#9aa0aa" stroke-width="0.55"/></svg>
<div class="t" style="left:724px;top:261.9px;font-size:3.6px;color:#777">[no reference]</div>
<div class="a" style="left:724px;top:266.7px;width:72.5px;height:0.35px;background:#eef0f3"></div>
<svg class="a" style="left:774.5px;top:268.2px" width="16" height="5" viewBox="0 0 16 5"><rect x="0.5" y="0.4" width="3.8" height="3.6" fill="none" stroke="#c5cad2" stroke-width="0.4"/><circle cx="13" cy="2.2" r="1.5" fill="none" stroke="#5ab3ea" stroke-width="0.4"/></svg>
<div class="t" style="left:780.6px;top:268.7px;font-size:3.6px;color:#333;font-weight:bold">78</div>
<div class="a" style="left:712px;top:273.5px;width:85px;height:0.35px;background:#eef0f3"></div>
<div class="t" style="left:713px;top:276.0px;font-size:3.6px;color:#777"><span style="color:#2f9be0">P</span> [London SW3 2QS] 23 Godfrey Street</div>
<div class="t" style="left:713px;top:281.9px;font-size:3.4px;color:#b4b9c0">To: [London NW11 7ET] 29 The Park</div>
<div class="a" style="left:712px;top:287.5px;width:85px;height:0.35px;background:#eef0f3"></div>
<svg class="a" style="left:713.5px;top:288.7px" width="6" height="6" viewBox="0 0 6 6"><circle cx="2.6" cy="2.5" r="2" fill="none" stroke="#bfc4cc" stroke-width="0.4"/></svg>
<div class="t" style="left:720px;top:289.5px;font-size:3.6px;color:#777">- &nbsp;5 | 0:05</div>
<div class="t" style="left:750px;width:46.5px;text-align:right;top:289.5px;font-size:3.6px;color:#555">ETA: <b style="color:#222">Wed, Oct 19 | 10:48</b></div>
<div class="a" style="left:710px;top:301.05px;width:4px;height:0.35px;background:#d0d6de"></div>
<div class="a" style="left:794px;top:301.05px;width:5px;height:0.35px;background:#d0d6de"></div>
<div class="t" style="left:715px;top:299.5px;font-size:3.4px;color:#9aa2ad">&#10216;| Wed, Oct 19 | 10:53h &nbsp;| &nbsp;&#8645; 0:07h (1.9km) &nbsp;| &nbsp;&#9635; 236 <span style="color:#4aa8e8">&#9432;</span></div>
<div class="a" style="left:710.5px;top:307.3px;width:88.2px;height:44.8px;background:#fff;border:0.45px solid #e1e6ec;border-radius:0.8px"></div>
<div class="a" style="left:712.9px;top:310.2px;width:7.6px;height:7.6px;background:#14b4ea;border-radius:50%"></div>
<div class="t" style="left:712.9px;width:7.6px;text-align:center;top:312.2px;font-size:3.7px;color:#fff">5</div>
<div class="t" style="left:724px;top:311.40000000000003px;font-size:4px;color:#333;font-weight:bold">T-AUBA7IZH</div>
<svg class="a" style="left:779px;top:310.3px" width="19" height="6" viewBox="0 0 19 6"><path d="M0.8 1.5 L2.5 0.8 L4.2 1.5 V4.2 L2.5 5 L0.8 4.2 Z" fill="#cfd3dc"/><path d="M6.5 3 H7.6" stroke="#999" stroke-width="0.4"/><path d="M12.6 1.2 H17 M12.6 2.6 H17 M12.6 4 H17" stroke="#9aa0aa" stroke-width="0.55"/></svg>
<div class="t" style="left:724px;top:318.3px;font-size:3.6px;color:#777">[no reference]</div>
<div class="a" style="left:724px;top:323.1px;width:72.5px;height:0.35px;background:#eef0f3"></div>
<svg class="a" style="left:774.5px;top:324.6px" width="16" height="5" viewBox="0 0 16 5"><rect x="0.5" y="0.4" width="3.8" height="3.6" fill="none" stroke="#c5cad2" stroke-width="0.4"/><circle cx="13" cy="2.2" r="1.5" fill="none" stroke="#5ab3ea" stroke-width="0.4"/></svg>
<div class="t" style="left:780.6px;top:325.1px;font-size:3.6px;color:#333;font-weight:bold">87</div>
<div class="a" style="left:712px;top:329.90000000000003px;width:85px;height:0.35px;background:#eef0f3"></div>
<div class="t" style="left:713px;top:332.40000000000003px;font-size:3.6px;color:#777"><span style="color:#2f9be0">P</span> [London SW3 1AR] Washington House, Basil S...</div>
<div class="t" style="left:713px;top:338.3px;font-size:3.4px;color:#b4b9c0">To: [London E5 9QE] Flat 6, 3 Rossendale Street</div>
<div class="a" style="left:712px;top:343.90000000000003px;width:85px;height:0.35px;background:#eef0f3"></div>
<svg class="a" style="left:713.5px;top:345.1px" width="6" height="6" viewBox="0 0 6 6"><circle cx="2.6" cy="2.5" r="2" fill="none" stroke="#bfc4cc" stroke-width="0.4"/></svg>
<div class="t" style="left:720px;top:345.90000000000003px;font-size:3.6px;color:#777">- &nbsp;5 | 0:05</div>
<div class="t" style="left:750px;width:46.5px;text-align:right;top:345.90000000000003px;font-size:3.6px;color:#555">ETA: <b style="color:#222">Wed, Oct 19 | 10:59</b></div>
<div class="a" style="left:710px;top:357.45000000000005px;width:4px;height:0.35px;background:#d0d6de"></div>
<div class="a" style="left:794px;top:357.45000000000005px;width:5px;height:0.35px;background:#d0d6de"></div>
<div class="t" style="left:715px;top:355.90000000000003px;font-size:3.4px;color:#9aa2ad">&#10216;| Wed, Oct 19 | 11:04h &nbsp;| &nbsp;&#8645; 0:04h (1.8km) &nbsp;| &nbsp;&#9635; 343 <span style="color:#4aa8e8">&#9432;</span></div>
<div class="a" style="left:710.5px;top:363.7px;width:88.2px;height:44.8px;background:#fff;border:0.45px solid #e1e6ec;border-radius:0.8px"></div>
<div class="a" style="left:712.9px;top:366.59999999999997px;width:7.6px;height:7.6px;background:#14b4ea;border-radius:50%"></div>
<div class="t" style="left:712.9px;width:7.6px;text-align:center;top:368.59999999999997px;font-size:3.7px;color:#fff">5</div>
<div class="t" style="left:724px;top:367.8px;font-size:4px;color:#333;font-weight:bold">T-W9C5422YR</div>
<svg class="a" style="left:779px;top:366.7px" width="19" height="6" viewBox="0 0 19 6"><path d="M0.8 1.5 L2.5 0.8 L4.2 1.5 V4.2 L2.5 5 L0.8 4.2 Z" fill="#cfd3dc"/><path d="M6.5 3 H7.6" stroke="#999" stroke-width="0.4"/><path d="M12.6 1.2 H17 M12.6 2.6 H17 M12.6 4 H17" stroke="#9aa0aa" stroke-width="0.55"/></svg>
<div class="t" style="left:724px;top:374.7px;font-size:3.6px;color:#777">[no reference]</div>
<div class="a" style="left:724px;top:379.5px;width:72.5px;height:0.35px;background:#eef0f3"></div>
<svg class="a" style="left:774.5px;top:381.0px" width="16" height="5" viewBox="0 0 16 5"><rect x="0.5" y="0.4" width="3.8" height="3.6" fill="none" stroke="#c5cad2" stroke-width="0.4"/><circle cx="13" cy="2.2" r="1.5" fill="none" stroke="#5ab3ea" stroke-width="0.4"/></svg>
<div class="t" style="left:780.6px;top:381.5px;font-size:3.6px;color:#333;font-weight:bold">91</div>
<div class="a" style="left:712px;top:386.3px;width:85px;height:0.35px;background:#eef0f3"></div>
<div class="t" style="left:713px;top:388.8px;font-size:3.6px;color:#777"><span style="color:#2f9be0">P</span> [London W1 ...]</div>
<div class="t" style="left:713px;top:394.7px;font-size:3.4px;color:#b4b9c0">To: ...</div>
<div class="a" style="left:712px;top:400.3px;width:85px;height:0.35px;background:#eef0f3"></div>
<svg class="a" style="left:713.5px;top:401.5px" width="6" height="6" viewBox="0 0 6 6"><circle cx="2.6" cy="2.5" r="2" fill="none" stroke="#bfc4cc" stroke-width="0.4"/></svg>
<div class="t" style="left:720px;top:402.3px;font-size:3.6px;color:#777">- &nbsp;5 | 0:05</div>
<div class="t" style="left:750px;width:46.5px;text-align:right;top:402.3px;font-size:3.6px;color:#555">ETA: <b style="color:#222">Wed, Oct 19 | 11:10</b></div>
<div class="a" style="left:710px;top:413.85px;width:4px;height:0.35px;background:#d0d6de"></div>
<div class="a" style="left:794px;top:413.85px;width:5px;height:0.35px;background:#d0d6de"></div>
<div class="t" style="left:715px;top:412.3px;font-size:3.4px;color:#9aa2ad">&#10216;| Wed, Oct 19 | 11:14h &nbsp;| &nbsp;&#8645; 0:04h &nbsp;| &nbsp;&#9635; 399 <span style="color:#4aa8e8">&#9432;</span></div>
<div class="a" style="left:705.5px;top:381.8px;width:97.5px;height:38px;background:rgba(232,240,247,0.96)"></div>
<svg class="a" style="left:709.5px;top:386.8px" width="5" height="5" viewBox="0 0 5 5"><rect x="0.3" y="0.3" width="3.8" height="3.6" fill="#6cc0ec"/><path d="M0.3 1.5 H4.1 M0.3 2.7 H4.1" stroke="#e8f0f7" stroke-width="0.3"/></svg>
<div class="t" style="left:715.5px;top:387.5px;font-size:3.45px;color:#97a2b0">Drag and drop items to manually set the route order.</div>
<div class="t" style="left:710.5px;top:392.7px;font-size:3.45px;color:#97a2b0">This will lock the route for reoptimizations.</div>
<div class="a" style="left:710px;top:400px;width:89px;height:0.35px;background:#d8e0e8"></div>
<div class="t" style="left:740px;width:46px;text-align:right;top:404.4px;font-size:4.19px;color:#8a929d">Hide completed items</div>
<div class="t" style="left:720px;width:66px;text-align:right;top:410.9px;font-size:4.17px;color:#8a929d">Mark tasks at the same location</div>
<div class="a" style="left:788.8px;top:403.5px;width:10.5px;height:5.8px;background:#b8bdc4;border-radius:3px"></div>
<div class="a" style="left:789.3px;top:404px;width:4.8px;height:4.8px;background:#fff;border-radius:50%"></div>
<div class="a" style="left:788.8px;top:410px;width:10.5px;height:5.8px;background:#1890ff;border-radius:3px"></div>
<div class="a" style="left:794px;top:410.5px;width:4.8px;height:4.8px;background:#fff;border-radius:50%"></div><!-- annotations -->
<svg class="a" style="left:0;top:0" width="803" height="419" viewBox="0 0 803 419">
 <g stroke="#5a5a5a" stroke-width="0.45" fill="none">
  <path d="M75.3 11.25 H64.4 V42.5"/></g><g stroke="#8a8a8a" stroke-width="0.45" fill="none"><path d="M63.8 42 V73.4"/>
  <path d="M427.5 5 H416.8 V15.2"/>
  <path d="M479 10.3 V16.3"/>
  <path d="M722.5 16.4 V81.2"/>
  <path d="M100.7 321.5 H128"/>
 </g>
</svg>
<div class="a" style="left:75.3px;top:8.3px;width:17.4px;height:7.15px;background:#fff;border:0.45px solid #666;border-radius:0.5px"></div>
<div class="t" style="left:75.3px;width:17.4px;text-align:center;top:8.85px;font-size:6.1px;color:#000;letter-spacing:-0.1px;-webkit-text-stroke:0.12px #000">Tasks</div>
<div class="a" style="left:427.5px;top:3.4px;width:32.7px;height:7.4px;background:#fff;border:0.45px solid #666;border-radius:0.5px"></div>
<div class="t" style="left:427.5px;width:32.7px;text-align:center;top:4px;font-size:6px;color:#000;letter-spacing:-0.1px;-webkit-text-stroke:0.12px #000">Date picker</div>
<div class="a" style="left:464.9px;top:2.2px;width:100.5px;height:8.1px;background:#fff;border:0.45px solid #666;border-radius:0.5px"></div>
<div class="t" style="left:464.9px;width:100.5px;text-align:center;top:3.2px;font-size:6.1px;color:#000;letter-spacing:-0.1px;-webkit-text-stroke:0.12px #000">Daily/Weekly planning mode switch</div>
<div class="a" style="left:709.6px;top:8.6px;width:44px;height:7.9px;background:#fff;border:0.45px solid #666;border-radius:0.5px"></div>
<div class="t" style="left:709.6px;width:44px;text-align:center;top:9.5px;font-size:6.1px;color:#000;letter-spacing:-0.1px;-webkit-text-stroke:0.12px #000">Route order list</div>
<div class="a" style="left:60.4px;top:316.2px;width:40.3px;height:10.1px;background:#e8f0f6;border:0.45px solid #777;border-radius:0.8px"></div>
<div class="t" style="left:60.4px;width:40.3px;text-align:center;top:318.2px;font-size:6.1px;color:#000;letter-spacing:-0.1px;-webkit-text-stroke:0.12px #000">Bottom panel</div>
</div></div></body></html>
